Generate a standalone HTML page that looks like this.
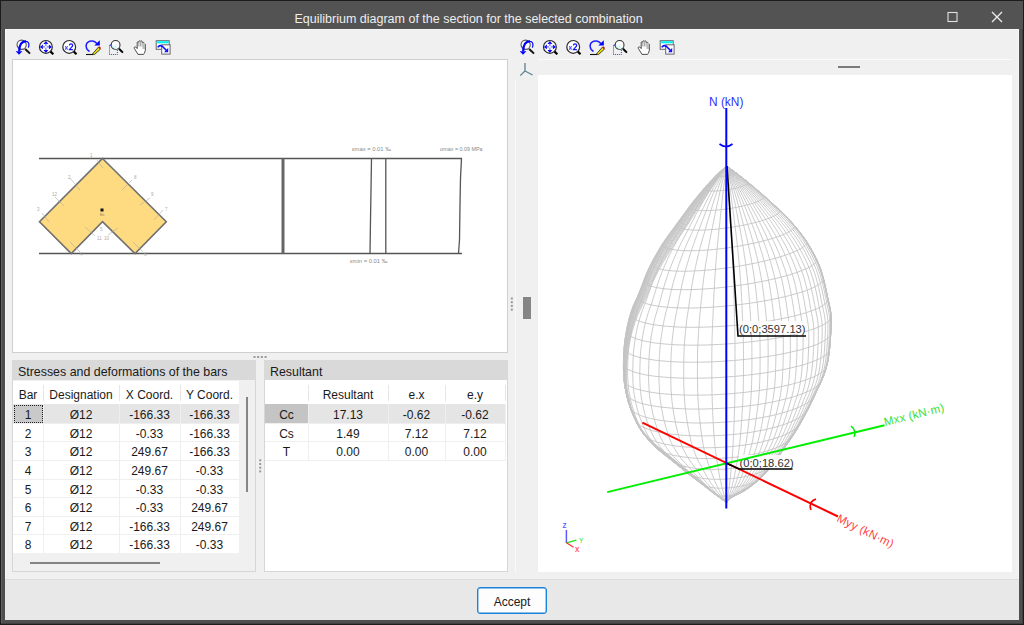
<!DOCTYPE html>
<html><head><meta charset="utf-8">
<style>
*{margin:0;padding:0;box-sizing:border-box}
html,body{width:1024px;height:625px;overflow:hidden;background:#1c1c1c;font-family:"Liberation Sans",sans-serif;font-size:12px;color:#1a1a1a}
.a{position:absolute}
.c{position:absolute;text-align:center;white-space:nowrap}
</style></head><body>
<div class="a" style="left:1px;top:1px;width:1022px;height:623px;background:#535353"></div>
<div class="a" style="left:1px;top:29px;width:1px;height:595px;background:#636363"></div>
<div class="a" style="left:1022px;top:29px;width:1px;height:595px;background:#3e3e3e"></div>
<div class="a" style="left:1px;top:623px;width:1022px;height:1px;background:#3e3e3e"></div>
<div class="a" style="left:2px;top:29px;width:3px;height:594px;background:#4f4f4f"></div>
<div class="a" style="left:1019px;top:29px;width:3px;height:594px;background:#505050"></div>
<div class="a" style="left:2px;top:620px;width:1020px;height:3px;background:#4f4f4f"></div>
<div class="a" style="left:5px;top:29px;width:1014px;height:591px;background:#f0f0f0;border:1px solid #f7f7f7"></div>
<div class="a" style="left:294.5px;top:10.5px;font-size:12.5px;color:#eeeeee;white-space:nowrap;line-height:16px">Equilibrium diagram of the section for the selected combination</div>
<svg class="a" style="left:0;top:0" width="1024" height="30">
<rect x="948" y="12.5" width="9" height="9" fill="none" stroke="#e0e0e0" stroke-width="1.1"/>
<path d="M992 12 L1002 22 M1002 12 L992 22" stroke="#eeeeee" stroke-width="1.3"/>
</svg>
<!-- bottom bar -->
<div class="a" style="left:5px;top:579px;width:1014px;height:41px;background:#e8e8e8;border-top:1px solid #dcdcdc"></div>
<div class="a" style="left:477px;top:587px;width:70px;height:27px;background:#fdfdfd;border:1px solid #1a82da;box-shadow:inset 0 0 0 0.4px #1a82da;border-radius:3px;text-align:center;line-height:28px;font-size:12px;color:#1a1a1a">Accept</div>
<!-- left drawing panel -->
<div class="a" style="left:12px;top:59px;width:496px;height:294px;background:#fff;border:1px solid #cfcfcf"></div>
<!-- splitter dots -->
<svg class="a" style="left:0;top:0" width="1024" height="625">
<g fill="#9a9a9a"><rect x="253.5" y="356" width="2" height="2"/><rect x="257.2" y="356" width="2" height="2"/><rect x="260.9" y="356" width="2" height="2"/><rect x="264.6" y="356" width="2" height="2"/>
<rect x="259.2" y="459.3" width="2" height="2"/><rect x="259.2" y="463" width="2" height="2"/><rect x="259.2" y="466.7" width="2" height="2"/><rect x="259.2" y="470.4" width="2" height="2"/>
<rect x="510.8" y="297.5" width="2" height="2"/><rect x="510.8" y="301.2" width="2" height="2"/><rect x="510.8" y="304.9" width="2" height="2"/><rect x="510.8" y="308.6" width="2" height="2"/></g>
</svg>
<!-- left table panel -->
<div class="a" style="left:12px;top:360px;width:244px;height:20px;background:#d9d9d9"></div>
<div class="a" style="left:18px;top:364px;line-height:16px;font-size:12.4px;white-space:nowrap">Stresses and deformations of the bars</div>
<div class="a" style="left:12px;top:380px;width:244px;height:192px;background:#f0f0f0;border:1px solid #d6d6d6;border-top:none"></div>
<div class="a" style="left:13px;top:381px;width:226px;height:172px;background:#fff"></div>
<div class="a" style="left:246px;top:397px;width:2px;height:95px;background:#858585"></div>
<div class="a" style="left:30px;top:561.5px;width:130px;height:2px;background:#858585"></div>
<div class="c" style="left:13px;top:384px;width:30px;height:23px;line-height:23px">Bar</div>
<div class="c" style="left:43px;top:384px;width:76px;height:23px;line-height:23px">Designation</div>
<div class="c" style="left:119px;top:384px;width:61px;height:23px;line-height:23px">X Coord.</div>
<div class="c" style="left:180px;top:384px;width:59px;height:23px;line-height:23px">Y Coord.</div>
<div style="position:absolute;left:43px;top:385px;width:1px;height:16px;background:#e6e6e6"></div>
<div style="position:absolute;left:119px;top:385px;width:1px;height:16px;background:#e6e6e6"></div>
<div style="position:absolute;left:180px;top:385px;width:1px;height:16px;background:#e6e6e6"></div>
<div style="position:absolute;left:13px;top:404.0px;width:226px;height:18.625px;background:#e5e5e5"></div>
<div style="position:absolute;left:14px;top:404.5px;width:29px;height:18.5px;background:#c9c9c9;border:1px dotted #222"></div>
<div class="c" style="left:13px;top:406.0px;width:30px;height:18.625px;line-height:18.625px">1</div>
<div class="c" style="left:43px;top:406.0px;width:76px;height:18.625px;line-height:18.625px">Ø12</div>
<div class="c" style="left:119px;top:406.0px;width:61px;height:18.625px;line-height:18.625px">-166.33</div>
<div class="c" style="left:180px;top:406.0px;width:59px;height:18.625px;line-height:18.625px">-166.33</div>
<div style="position:absolute;left:13px;top:422.625px;width:226px;height:1px;background:#efefef"></div>
<div class="c" style="left:13px;top:424.625px;width:30px;height:18.625px;line-height:18.625px">2</div>
<div class="c" style="left:43px;top:424.625px;width:76px;height:18.625px;line-height:18.625px">Ø12</div>
<div class="c" style="left:119px;top:424.625px;width:61px;height:18.625px;line-height:18.625px">-0.33</div>
<div class="c" style="left:180px;top:424.625px;width:59px;height:18.625px;line-height:18.625px">-166.33</div>
<div style="position:absolute;left:13px;top:441.25px;width:226px;height:1px;background:#efefef"></div>
<div class="c" style="left:13px;top:443.25px;width:30px;height:18.625px;line-height:18.625px">3</div>
<div class="c" style="left:43px;top:443.25px;width:76px;height:18.625px;line-height:18.625px">Ø12</div>
<div class="c" style="left:119px;top:443.25px;width:61px;height:18.625px;line-height:18.625px">249.67</div>
<div class="c" style="left:180px;top:443.25px;width:59px;height:18.625px;line-height:18.625px">-166.33</div>
<div style="position:absolute;left:13px;top:459.875px;width:226px;height:1px;background:#efefef"></div>
<div class="c" style="left:13px;top:461.875px;width:30px;height:18.625px;line-height:18.625px">4</div>
<div class="c" style="left:43px;top:461.875px;width:76px;height:18.625px;line-height:18.625px">Ø12</div>
<div class="c" style="left:119px;top:461.875px;width:61px;height:18.625px;line-height:18.625px">249.67</div>
<div class="c" style="left:180px;top:461.875px;width:59px;height:18.625px;line-height:18.625px">-0.33</div>
<div style="position:absolute;left:13px;top:478.5px;width:226px;height:1px;background:#efefef"></div>
<div class="c" style="left:13px;top:480.5px;width:30px;height:18.625px;line-height:18.625px">5</div>
<div class="c" style="left:43px;top:480.5px;width:76px;height:18.625px;line-height:18.625px">Ø12</div>
<div class="c" style="left:119px;top:480.5px;width:61px;height:18.625px;line-height:18.625px">-0.33</div>
<div class="c" style="left:180px;top:480.5px;width:59px;height:18.625px;line-height:18.625px">-0.33</div>
<div style="position:absolute;left:13px;top:497.125px;width:226px;height:1px;background:#efefef"></div>
<div class="c" style="left:13px;top:499.125px;width:30px;height:18.625px;line-height:18.625px">6</div>
<div class="c" style="left:43px;top:499.125px;width:76px;height:18.625px;line-height:18.625px">Ø12</div>
<div class="c" style="left:119px;top:499.125px;width:61px;height:18.625px;line-height:18.625px">-0.33</div>
<div class="c" style="left:180px;top:499.125px;width:59px;height:18.625px;line-height:18.625px">249.67</div>
<div style="position:absolute;left:13px;top:515.75px;width:226px;height:1px;background:#efefef"></div>
<div class="c" style="left:13px;top:517.75px;width:30px;height:18.625px;line-height:18.625px">7</div>
<div class="c" style="left:43px;top:517.75px;width:76px;height:18.625px;line-height:18.625px">Ø12</div>
<div class="c" style="left:119px;top:517.75px;width:61px;height:18.625px;line-height:18.625px">-166.33</div>
<div class="c" style="left:180px;top:517.75px;width:59px;height:18.625px;line-height:18.625px">249.67</div>
<div style="position:absolute;left:13px;top:534.375px;width:226px;height:1px;background:#efefef"></div>
<div class="c" style="left:13px;top:536.375px;width:30px;height:18.625px;line-height:18.625px">8</div>
<div class="c" style="left:43px;top:536.375px;width:76px;height:18.625px;line-height:18.625px">Ø12</div>
<div class="c" style="left:119px;top:536.375px;width:61px;height:18.625px;line-height:18.625px">-166.33</div>
<div class="c" style="left:180px;top:536.375px;width:59px;height:18.625px;line-height:18.625px">-0.33</div>
<div style="position:absolute;left:43px;top:404px;width:1px;height:149px;background:#efefef"></div>
<div style="position:absolute;left:119px;top:404px;width:1px;height:149px;background:#efefef"></div>
<div style="position:absolute;left:180px;top:404px;width:1px;height:149px;background:#efefef"></div>
<!-- resultant panel -->
<div class="a" style="left:264px;top:360px;width:244px;height:20px;background:#d9d9d9"></div>
<div class="a" style="left:270px;top:364px;line-height:16px;font-size:12.4px;white-space:nowrap">Resultant</div>
<div class="a" style="left:264px;top:380px;width:244px;height:192px;background:#fff;border:1px solid #d6d6d6;border-top:none"></div>
<div class="c" style="left:265px;top:384px;width:43px;height:23px;line-height:23px"></div>
<div class="c" style="left:308px;top:384px;width:80px;height:23px;line-height:23px">Resultant</div>
<div class="c" style="left:388px;top:384px;width:57px;height:23px;line-height:23px">e.x</div>
<div class="c" style="left:445px;top:384px;width:60px;height:23px;line-height:23px">e.y</div>
<div style="position:absolute;left:308px;top:385px;width:1px;height:16px;background:#e6e6e6"></div>
<div style="position:absolute;left:388px;top:385px;width:1px;height:16px;background:#e6e6e6"></div>
<div style="position:absolute;left:445px;top:385px;width:1px;height:16px;background:#e6e6e6"></div>
<div style="position:absolute;left:505px;top:385px;width:1px;height:16px;background:#e6e6e6"></div>
<div style="position:absolute;left:265px;top:404.0px;width:241px;height:18.625px;background:#e5e5e5"></div>
<div style="position:absolute;left:265px;top:404.0px;width:43.6px;height:18.625px;background:#c4c4c4"></div>
<div class="c" style="left:265px;top:406.0px;width:43px;height:18.625px;line-height:18.625px">Cc</div>
<div class="c" style="left:308px;top:406.0px;width:80px;height:18.625px;line-height:18.625px">17.13</div>
<div class="c" style="left:388px;top:406.0px;width:57px;height:18.625px;line-height:18.625px">-0.62</div>
<div class="c" style="left:445px;top:406.0px;width:60px;height:18.625px;line-height:18.625px">-0.62</div>
<div style="position:absolute;left:265px;top:422.625px;width:241px;height:1px;background:#efefef"></div>
<div class="c" style="left:265px;top:424.625px;width:43px;height:18.625px;line-height:18.625px">Cs</div>
<div class="c" style="left:308px;top:424.625px;width:80px;height:18.625px;line-height:18.625px">1.49</div>
<div class="c" style="left:388px;top:424.625px;width:57px;height:18.625px;line-height:18.625px">7.12</div>
<div class="c" style="left:445px;top:424.625px;width:60px;height:18.625px;line-height:18.625px">7.12</div>
<div style="position:absolute;left:265px;top:441.25px;width:241px;height:1px;background:#efefef"></div>
<div class="c" style="left:265px;top:443.25px;width:43px;height:18.625px;line-height:18.625px">T</div>
<div class="c" style="left:308px;top:443.25px;width:80px;height:18.625px;line-height:18.625px">0.00</div>
<div class="c" style="left:388px;top:443.25px;width:57px;height:18.625px;line-height:18.625px">0.00</div>
<div class="c" style="left:445px;top:443.25px;width:60px;height:18.625px;line-height:18.625px">0.00</div>
<div style="position:absolute;left:265px;top:459.875px;width:241px;height:1px;background:#efefef"></div>
<div style="position:absolute;left:308px;top:404px;width:1px;height:55.875px;background:#efefef"></div>
<div style="position:absolute;left:388px;top:404px;width:1px;height:55.875px;background:#efefef"></div>
<div style="position:absolute;left:445px;top:404px;width:1px;height:55.875px;background:#efefef"></div>
<div style="position:absolute;left:505px;top:404px;width:1px;height:55.875px;background:#efefef"></div>
<!-- right panel -->
<div class="a" style="left:515px;top:81px;width:1px;height:491px;background:#fafafa"></div>
<div class="a" style="left:538px;top:59px;width:474px;height:1px;background:#fafafa"></div>
<div class="a" style="left:538px;top:75px;width:474px;height:497px;background:#fff"></div>
<div class="a" style="left:838px;top:66px;width:22px;height:2px;background:#7a7a7a"></div>
<div class="a" style="left:523px;top:297px;width:8px;height:22px;background:#858585"></div>
<svg class="a" style="left:0;top:0" width="1024" height="625">
<path d="M525 63 L525 71 L520.2 75.6 M525 71 L532.6 75" fill="none" stroke="#5b8291" stroke-width="1.3"/>
<g transform="translate(14,38)">
<circle cx="7.65" cy="6.75" r="4.6" fill="#fff" stroke="#555" stroke-width="1.1"/>
<line x1="11.2" y1="11" x2="16" y2="15.6" stroke="#111" stroke-width="2"/>
<path d="M14.4 9.6 C15.6 6 15 3.4 11.5 3.4" fill="none" stroke="#0000ff" stroke-width="1.2"/>
<path d="M12 3.3 C7.5 3.2 5.2 7 5.2 13.3" fill="none" stroke="#0000ff" stroke-width="2.2"/>
<path d="M1.7 13.2 L8.4 13.2 L5 16.8 Z" fill="#0000ff"/>
</g>
<g transform="translate(37,38)">
<circle cx="8.9" cy="8.9" r="6.4" fill="#fff" stroke="#2a2a2a" stroke-width="1.2"/>
<line x1="13.6" y1="13.6" x2="16.3" y2="16.2" stroke="#000" stroke-width="2.2"/>
<path d="M8.9 2.9 L11.3 5.9 L6.5 5.9 Z M8.9 14.9 L11.3 11.9 L6.5 11.9 Z M2.9 8.9 L5.9 6.5 L5.9 11.3 Z M14.9 8.9 L11.9 6.5 L11.9 11.3 Z" fill="#0000ff"/>
<path d="M8.9 5.5 L8.9 12.3 M5.5 8.9 L12.3 8.9" stroke="#7070ff" stroke-width="1.2"/>
<rect x="8" y="8" width="1.8" height="1.8" fill="#fff"/>
</g>
<g transform="translate(60,38)">
<circle cx="9.2" cy="8.9" r="6.4" fill="#fff" stroke="#2a2a2a" stroke-width="1.2"/>
<line x1="13.8" y1="13.6" x2="16.5" y2="16.2" stroke="#000" stroke-width="2.2"/>
<path d="M5.2 8.2 L7.6 11.6 M7.6 8.2 L5.2 11.6" stroke="#5050ff" stroke-width="1.1"/>
<path d="M9.4 7.4 C9.5 5.6 12.6 5.4 12.6 7.4 C12.6 8.8 10.5 9.8 9.5 11.6 L12.9 11.6" fill="none" stroke="#1515ff" stroke-width="1.3"/>
</g>
<g transform="translate(84,38)">
<path d="M5.5 13.5 C1.5 11.5 1.2 6 4 4.2 C6.5 2.3 10.5 2.6 12.8 5.5" fill="none" stroke="#2020ff" stroke-width="1.5"/>
<path d="M15.8 2.2 L15.8 7.4 L10.3 7.4 Z" fill="#0000ff"/>
<line x1="2" y1="16.5" x2="9.5" y2="16.5" stroke="#111" stroke-width="1.1"/>
<path d="M8.6 15.8 L14.4 9.2 L16.4 11.2 L10.4 16.6 Z" fill="#e6e000" stroke="#333" stroke-width="0.9"/>
<path d="M14.4 9 L15.3 8.3 L16.8 9.8 L16.4 11.2 Z" fill="#e00000"/>
</g>
<g transform="translate(107,38)">
<path d="M2.5 16.5 L2.5 7.2 L10.4 7.2 L10.4 16.5 Z" fill="none" stroke="#3a3aff" stroke-width="1" stroke-dasharray="1,1"/>
<path d="M2.5 7.2 L10.4 7.2 L10.4 10" fill="none" stroke="#3a3aff" stroke-width="1.1"/>
<circle cx="8.6" cy="6.9" r="4.4" fill="#fff" stroke="#333" stroke-width="1.1"/>
<path d="M4.4 7.6 L10.2 7.6 L10.2 11 C7.5 11.5 5 10 4.4 7.6 Z" fill="#d8f8f8"/>
<line x1="12" y1="10.8" x2="15.9" y2="14.6" stroke="#000" stroke-width="2"/>
</g>
<g transform="translate(130,38)">
<path d="M8 16.4 L4.4 10.5 C3.8 9.3 4.8 8.2 5.8 9 L7.2 10.6 L7.2 4.5 C7.2 3.6 8.6 3.6 8.8 4.3 L8.8 3.4 C8.9 2.6 10.2 2.6 10.4 3.3 C10.6 2.6 11.9 2.6 12 3.4 L12.1 4.6 C12.5 4 13.9 4.2 14 5 L15.2 6 L15.4 11 C15.4 13.5 14.5 15 13.5 16.4 Z" fill="#fff" stroke="#3a3a3a" stroke-width="0.9"/>
<path d="M8.8 4.3 L8.8 8.5 M10.4 3.3 L10.4 8.5 M12.1 4.6 L12.1 8.5" stroke="#888" stroke-width="0.8"/>
<rect x="12.5" y="5" width="2.5" height="6" fill="#bbb"/>
</g>
<g transform="translate(154,38)">
<rect x="2.2" y="2.7" width="13" height="8.6" fill="#fcfcfc" stroke="#666" stroke-width="1"/>
<rect x="2.7" y="3.2" width="12" height="2.1" fill="#00f4f4"/>
<rect x="7.7" y="6.8" width="8.4" height="9.3" fill="#fdfdfd" stroke="#666" stroke-width="1"/>
<path d="M3.8 9.4 C5 7.2 7 7.2 8.5 8.5 L12.5 12.5" fill="none" stroke="#1010ff" stroke-width="1.7"/>
<path d="M10 14.2 L14.2 14.2 L14.2 10 Z" fill="#1010ff"/>
</g>
<g transform="translate(518,38)">
<circle cx="7.65" cy="6.75" r="4.6" fill="#fff" stroke="#555" stroke-width="1.1"/>
<line x1="11.2" y1="11" x2="16" y2="15.6" stroke="#111" stroke-width="2"/>
<path d="M14.4 9.6 C15.6 6 15 3.4 11.5 3.4" fill="none" stroke="#0000ff" stroke-width="1.2"/>
<path d="M12 3.3 C7.5 3.2 5.2 7 5.2 13.3" fill="none" stroke="#0000ff" stroke-width="2.2"/>
<path d="M1.7 13.2 L8.4 13.2 L5 16.8 Z" fill="#0000ff"/>
</g>
<g transform="translate(541,38)">
<circle cx="8.9" cy="8.9" r="6.4" fill="#fff" stroke="#2a2a2a" stroke-width="1.2"/>
<line x1="13.6" y1="13.6" x2="16.3" y2="16.2" stroke="#000" stroke-width="2.2"/>
<path d="M8.9 2.9 L11.3 5.9 L6.5 5.9 Z M8.9 14.9 L11.3 11.9 L6.5 11.9 Z M2.9 8.9 L5.9 6.5 L5.9 11.3 Z M14.9 8.9 L11.9 6.5 L11.9 11.3 Z" fill="#0000ff"/>
<path d="M8.9 5.5 L8.9 12.3 M5.5 8.9 L12.3 8.9" stroke="#7070ff" stroke-width="1.2"/>
<rect x="8" y="8" width="1.8" height="1.8" fill="#fff"/>
</g>
<g transform="translate(564,38)">
<circle cx="9.2" cy="8.9" r="6.4" fill="#fff" stroke="#2a2a2a" stroke-width="1.2"/>
<line x1="13.8" y1="13.6" x2="16.5" y2="16.2" stroke="#000" stroke-width="2.2"/>
<path d="M5.2 8.2 L7.6 11.6 M7.6 8.2 L5.2 11.6" stroke="#5050ff" stroke-width="1.1"/>
<path d="M9.4 7.4 C9.5 5.6 12.6 5.4 12.6 7.4 C12.6 8.8 10.5 9.8 9.5 11.6 L12.9 11.6" fill="none" stroke="#1515ff" stroke-width="1.3"/>
</g>
<g transform="translate(588,38)">
<path d="M5.5 13.5 C1.5 11.5 1.2 6 4 4.2 C6.5 2.3 10.5 2.6 12.8 5.5" fill="none" stroke="#2020ff" stroke-width="1.5"/>
<path d="M15.8 2.2 L15.8 7.4 L10.3 7.4 Z" fill="#0000ff"/>
<line x1="2" y1="16.5" x2="9.5" y2="16.5" stroke="#111" stroke-width="1.1"/>
<path d="M8.6 15.8 L14.4 9.2 L16.4 11.2 L10.4 16.6 Z" fill="#e6e000" stroke="#333" stroke-width="0.9"/>
<path d="M14.4 9 L15.3 8.3 L16.8 9.8 L16.4 11.2 Z" fill="#e00000"/>
</g>
<g transform="translate(611,38)">
<path d="M2.5 16.5 L2.5 7.2 L10.4 7.2 L10.4 16.5 Z" fill="none" stroke="#3a3aff" stroke-width="1" stroke-dasharray="1,1"/>
<path d="M2.5 7.2 L10.4 7.2 L10.4 10" fill="none" stroke="#3a3aff" stroke-width="1.1"/>
<circle cx="8.6" cy="6.9" r="4.4" fill="#fff" stroke="#333" stroke-width="1.1"/>
<path d="M4.4 7.6 L10.2 7.6 L10.2 11 C7.5 11.5 5 10 4.4 7.6 Z" fill="#d8f8f8"/>
<line x1="12" y1="10.8" x2="15.9" y2="14.6" stroke="#000" stroke-width="2"/>
</g>
<g transform="translate(634,38)">
<path d="M8 16.4 L4.4 10.5 C3.8 9.3 4.8 8.2 5.8 9 L7.2 10.6 L7.2 4.5 C7.2 3.6 8.6 3.6 8.8 4.3 L8.8 3.4 C8.9 2.6 10.2 2.6 10.4 3.3 C10.6 2.6 11.9 2.6 12 3.4 L12.1 4.6 C12.5 4 13.9 4.2 14 5 L15.2 6 L15.4 11 C15.4 13.5 14.5 15 13.5 16.4 Z" fill="#fff" stroke="#3a3a3a" stroke-width="0.9"/>
<path d="M8.8 4.3 L8.8 8.5 M10.4 3.3 L10.4 8.5 M12.1 4.6 L12.1 8.5" stroke="#888" stroke-width="0.8"/>
<rect x="12.5" y="5" width="2.5" height="6" fill="#bbb"/>
</g>
<g transform="translate(658,38)">
<rect x="2.2" y="2.7" width="13" height="8.6" fill="#fcfcfc" stroke="#666" stroke-width="1"/>
<rect x="2.7" y="3.2" width="12" height="2.1" fill="#00f4f4"/>
<rect x="7.7" y="6.8" width="8.4" height="9.3" fill="#fdfdfd" stroke="#666" stroke-width="1"/>
<path d="M3.8 9.4 C5 7.2 7 7.2 8.5 8.5 L12.5 12.5" fill="none" stroke="#1010ff" stroke-width="1.7"/>
<path d="M10 14.2 L14.2 14.2 L14.2 10 Z" fill="#1010ff"/>
</g>
<line x1="39" y1="158.5" x2="462" y2="158.5" stroke="#555" stroke-width="1.3"/>
<line x1="39" y1="253.5" x2="462" y2="253.5" stroke="#555" stroke-width="1.3"/>
<polygon points="102.5,158.5 166.25,221.75 135,253.5 102.5,221.75 71.25,253.5 39.5,221.75" fill="#fedb80" stroke="#707070" stroke-width="1.6" stroke-linejoin="miter"/>
<line x1="283" y1="158.5" x2="283" y2="253.5" stroke="#666" stroke-width="3"/>
<polyline points="371.5,158.5 371,190 370.5,220 370,253.5" fill="none" stroke="#555" stroke-width="1.3"/>
<line x1="385.8" y1="158.5" x2="385.8" y2="253.5" stroke="#555" stroke-width="1.3"/>
<polyline points="461.5,158.5 460.5,178 460,205 459.5,240 458.5,253.5" fill="none" stroke="#555" stroke-width="1.3"/>
<text x="352" y="150.8" font-family="Liberation Sans" font-size="5" fill="#8a8a8a" textLength="39" lengthAdjust="spacingAndGlyphs">εmax = 0.01 ‰</text>
<text x="440" y="150.8" font-family="Liberation Sans" font-size="5" fill="#8a8a8a" textLength="42.5" lengthAdjust="spacingAndGlyphs">σmax = 0.09 MPa</text>
<text x="350" y="262.5" font-family="Liberation Sans" font-size="5" fill="#8a8a8a" textLength="37.5" lengthAdjust="spacingAndGlyphs">εmin = 0.01 ‰</text>
<line x1="97" y1="160" x2="103" y2="168" stroke="#aaa" stroke-width="0.6"/>
<text x="90" y="157" font-family="Liberation Sans" font-size="4.5" fill="#aaa">1</text>
<line x1="70" y1="178" x2="80" y2="190" stroke="#aaa" stroke-width="0.6"/>
<text x="68" y="179" font-family="Liberation Sans" font-size="4.5" fill="#aaa">2</text>
<line x1="55" y1="197" x2="64" y2="206" stroke="#aaa" stroke-width="0.6"/>
<text x="52" y="196" font-family="Liberation Sans" font-size="4.5" fill="#aaa">12</text>
<line x1="42" y1="213" x2="49" y2="222" stroke="#aaa" stroke-width="0.6"/>
<text x="37" y="211" font-family="Liberation Sans" font-size="4.5" fill="#aaa">3</text>
<line x1="122" y1="190" x2="132" y2="180" stroke="#aaa" stroke-width="0.6"/>
<text x="134" y="179" font-family="Liberation Sans" font-size="4.5" fill="#aaa">8</text>
<line x1="140" y1="205" x2="150" y2="198" stroke="#aaa" stroke-width="0.6"/>
<text x="151" y="196" font-family="Liberation Sans" font-size="4.5" fill="#aaa">9</text>
<line x1="154" y1="220" x2="163" y2="210" stroke="#aaa" stroke-width="0.6"/>
<text x="165" y="211" font-family="Liberation Sans" font-size="4.5" fill="#aaa">7</text>
<line x1="85" y1="227" x2="95" y2="236" stroke="#aaa" stroke-width="0.6"/>
<text x="97" y="240" font-family="Liberation Sans" font-size="4.5" fill="#aaa">11</text>
<line x1="108" y1="235" x2="118" y2="228" stroke="#aaa" stroke-width="0.6"/>
<text x="104" y="240" font-family="Liberation Sans" font-size="4.5" fill="#aaa">10</text>
<line x1="70" y1="242" x2="80" y2="252" stroke="#aaa" stroke-width="0.6"/>
<text x="80" y="256" font-family="Liberation Sans" font-size="4.5" fill="#aaa">4</text>
<line x1="133" y1="242" x2="143" y2="252" stroke="#aaa" stroke-width="0.6"/>
<text x="144" y="256" font-family="Liberation Sans" font-size="4.5" fill="#aaa">6</text>
<text x="100" y="231" font-family="Liberation Sans" font-size="4.5" fill="#aaa">5</text>
<rect x="100.5" y="208.5" width="3" height="3" fill="#111"/>
<text x="100" y="216" font-family="Liberation Sans" font-size="4" fill="#777">Ec</text>
<path d="M726.5,166.0 L728.4,167.3 L730.3,168.7 L732.2,170.1 L734.1,171.5 L736.0,172.9 L737.9,174.3 L739.8,175.8 L741.7,177.3 L743.6,178.8 L745.5,180.2 L747.3,181.7 L749.2,183.3 L751.0,184.8 L752.9,186.3 L754.7,187.8 L756.5,189.4 L758.4,190.9 L760.2,192.5 L762.0,194.0 L763.8,195.6 L765.6,197.2 L767.3,198.7 L769.1,200.3 L770.8,201.9 L772.6,203.5 L774.3,205.1 L776.1,206.7 L777.8,208.2 L779.5,209.8 L781.2,211.4 L782.9,213.0 L784.5,214.6 L786.0,216.2 L787.6,217.7 L789.1,219.3 L790.5,220.9 L792.0,222.5 L793.3,224.1 L794.7,225.8 L796.1,227.4 L797.5,229.1 L798.8,230.7 L800.1,232.4 L801.4,234.0 L802.7,235.7 L803.9,237.4 L805.1,239.1 L806.2,240.8 L807.4,242.5 L808.4,244.2 L809.5,246.1 L810.8,248.2 L812.0,250.4 L813.2,252.6 L814.4,254.8 L815.6,257.1 L816.7,259.3 L817.7,261.6 L818.7,263.9 L819.6,266.2 L820.5,268.5 L821.2,270.8 L822.0,273.1 L822.6,275.4 L823.3,277.7 L823.9,280.0 L824.4,282.3 L825.0,284.6 L825.5,287.0 L826.0,289.3 L826.5,291.7 L827.0,294.1 L827.5,296.5 L828.1,298.9 L828.6,301.3 L829.2,303.8 L829.6,305.7 L830.0,307.7 L830.4,309.6 L830.7,311.5 L830.9,313.4 L831.1,315.4 L831.2,317.3 L831.2,319.3 L831.2,321.2 L831.1,323.2 L831.1,325.1 L831.0,327.1 L830.9,329.0 L830.8,331.0 L830.7,333.0 L830.6,334.9 L830.5,336.9 L830.4,338.9 L830.3,340.9 L830.1,342.9 L830.0,344.8 L829.8,346.8 L829.6,348.8 L829.3,350.8 L829.1,352.8 L828.8,354.8 L828.5,356.8 L828.2,358.8 L827.8,360.8 L827.3,362.8 L826.8,364.8 L826.2,366.8 L825.6,368.9 L825.0,370.9 L824.3,372.9 L823.5,375.0 L822.7,377.0 L821.7,379.1 L820.8,381.2 L819.8,383.2 L818.8,385.3 L817.8,387.3 L816.8,389.4 L815.8,391.5 L814.8,393.6 L813.8,395.7 L812.8,397.8 L811.8,399.9 L810.8,402.0 L809.7,404.2 L808.6,406.3 L807.5,408.4 L806.4,410.6 L805.2,412.7 L804.1,414.9 L802.9,417.1 L801.6,419.3 L800.4,421.5 L799.1,423.7 L797.7,426.0 L796.4,428.2 L794.9,430.5 L793.4,432.8 L791.9,435.0 L790.3,437.4 L788.7,439.7 L787.1,442.0 L785.6,444.4 L784.0,446.7 L782.5,449.1 L780.9,451.4 L779.3,453.7 L777.6,456.1 L776.0,458.4 L774.2,460.7 L772.5,463.1 L770.7,465.4 L768.8,467.7 L766.9,470.1 L764.9,472.4 L762.7,474.8 L760.4,477.1 L757.9,479.4 L755.2,481.8 L752.3,484.1 L749.2,486.4 L745.9,488.7 L742.0,491.0 L737.3,493.4 L733.3,495.7 L730.5,498.0 L728.2,500.4 L726.5,502.7 M726.5,166.0 L728.4,167.4 L730.3,168.8 L732.2,170.2 L734.1,171.6 L736.0,173.1 L737.9,174.5 L739.8,176.0 L741.7,177.5 L743.5,179.1 L745.4,180.6 L747.3,182.1 L749.1,183.7 L750.9,185.2 L752.8,186.8 L754.6,188.3 L756.4,189.9 L758.3,191.4 L760.1,193.0 L761.9,194.6 L763.7,196.2 L765.4,197.8 L767.2,199.4 L768.9,201.0 L770.7,202.6 L772.4,204.3 L774.2,205.9 L775.9,207.5 L777.6,209.1 L779.3,210.7 L781.0,212.3 L782.7,213.9 L784.3,215.5 L785.8,217.1 L787.4,218.7 L788.9,220.4 L790.3,222.0 L791.7,223.6 L793.1,225.2 L794.5,226.9 L795.9,228.6 L797.2,230.2 L798.5,231.9 L799.9,233.6 L801.1,235.3 L802.4,237.0 L803.6,238.7 L804.8,240.4 L806.0,242.1 L807.1,243.8 L808.1,245.6 L809.2,247.4 L810.5,249.6 L811.7,251.8 L812.9,254.0 L814.1,256.3 L815.3,258.5 L816.3,260.8 L817.4,263.1 L818.4,265.4 L819.3,267.7 L820.1,270.0 L820.9,272.3 L821.6,274.6 L822.3,276.9 L822.9,279.2 L823.5,281.6 L824.1,283.9 L824.6,286.2 L825.2,288.6 L825.7,290.9 L826.2,293.3 L826.7,295.7 L827.2,298.1 L827.7,300.6 L828.3,303.0 L828.8,305.5 L829.3,307.4 L829.7,309.3 L830.0,311.3 L830.3,313.2 L830.5,315.2 L830.7,317.1 L830.8,319.0 L830.8,321.0 L830.8,322.9 L830.8,324.9 L830.7,326.8 L830.7,328.8 L830.6,330.8 L830.5,332.7 L830.4,334.7 L830.3,336.7 L830.2,338.7 L830.1,340.6 L829.9,342.6 L829.8,344.6 L829.6,346.6 L829.4,348.6 L829.2,350.5 L829.0,352.5 L828.7,354.5 L828.4,356.5 L828.2,358.5 L827.8,360.6 L827.4,362.6 L827.0,364.6 L826.5,366.6 L825.9,368.7 L825.3,370.7 L824.7,372.8 L824.0,374.8 L823.2,376.9 L822.3,378.9 L821.4,381.0 L820.5,383.0 L819.5,385.1 L818.5,387.2 L817.5,389.2 L816.5,391.3 L815.5,393.4 L814.6,395.5 L813.6,397.6 L812.5,399.7 L811.5,401.8 L810.5,403.9 L809.4,406.0 L808.3,408.2 L807.2,410.3 L806.1,412.4 L805.0,414.6 L803.8,416.7 L802.6,418.9 L801.4,421.1 L800.1,423.3 L798.8,425.5 L797.5,427.7 L796.1,429.9 L794.7,432.2 L793.2,434.4 L791.7,436.7 L790.1,439.0 L788.5,441.3 L786.9,443.6 L785.4,445.9 L783.8,448.2 L782.3,450.5 L780.7,452.8 L779.1,455.1 L777.5,457.4 L775.8,459.6 L774.0,461.9 L772.3,464.2 L770.5,466.5 L768.7,468.8 L766.7,471.1 L764.7,473.4 L762.5,475.7 L760.2,477.9 L757.7,480.2 L755.1,482.4 L752.2,484.7 L749.1,486.9 L745.8,489.2 L741.9,491.4 L737.3,493.6 L733.3,495.9 L730.5,498.1 L728.2,500.4 L726.5,502.7 M726.5,166.0 L728.4,167.4 L730.2,168.8 L732.1,170.3 L734.0,171.7 L735.9,173.2 L737.8,174.8 L739.7,176.3 L741.5,177.8 L743.4,179.4 L745.2,180.9 L747.0,182.5 L748.9,184.1 L750.7,185.6 L752.5,187.2 L754.3,188.8 L756.1,190.4 L757.9,192.0 L759.7,193.6 L761.5,195.2 L763.3,196.9 L765.0,198.5 L766.7,200.1 L768.5,201.8 L770.2,203.4 L772.0,205.1 L773.7,206.7 L775.4,208.3 L777.1,210.0 L778.8,211.6 L780.4,213.3 L782.1,214.9 L783.7,216.5 L785.2,218.2 L786.7,219.8 L788.2,221.4 L789.6,223.1 L791.0,224.7 L792.4,226.4 L793.8,228.1 L795.1,229.8 L796.5,231.4 L797.8,233.1 L799.1,234.9 L800.3,236.6 L801.6,238.3 L802.8,240.0 L804.0,241.7 L805.1,243.5 L806.2,245.2 L807.3,247.0 L808.4,248.9 L809.6,251.1 L810.8,253.3 L812.0,255.5 L813.2,257.8 L814.3,260.0 L815.4,262.3 L816.4,264.6 L817.4,266.9 L818.3,269.2 L819.1,271.5 L819.9,273.9 L820.6,276.2 L821.3,278.5 L821.9,280.9 L822.5,283.2 L823.1,285.5 L823.6,287.9 L824.1,290.2 L824.6,292.6 L825.1,295.0 L825.6,297.4 L826.1,299.8 L826.7,302.3 L827.2,304.7 L827.8,307.2 L828.2,309.1 L828.6,311.1 L828.9,313.0 L829.2,315.0 L829.5,316.9 L829.6,318.9 L829.7,320.8 L829.7,322.7 L829.7,324.7 L829.7,326.7 L829.6,328.6 L829.6,330.6 L829.5,332.5 L829.4,334.5 L829.3,336.5 L829.2,338.4 L829.1,340.4 L829.0,342.4 L828.9,344.4 L828.7,346.4 L828.5,348.3 L828.4,350.3 L828.1,352.3 L827.9,354.3 L827.7,356.3 L827.4,358.3 L827.1,360.3 L826.8,362.4 L826.4,364.4 L825.9,366.4 L825.4,368.5 L824.9,370.5 L824.3,372.6 L823.7,374.6 L823.0,376.7 L822.2,378.8 L821.4,380.8 L820.5,382.9 L819.5,385.0 L818.6,387.0 L817.6,389.1 L816.6,391.2 L815.6,393.3 L814.7,395.3 L813.7,397.4 L812.7,399.5 L811.7,401.6 L810.7,403.7 L809.7,405.9 L808.6,408.0 L807.5,410.1 L806.4,412.2 L805.3,414.3 L804.2,416.5 L803.1,418.6 L801.9,420.8 L800.7,422.9 L799.4,425.1 L798.1,427.3 L796.8,429.5 L795.5,431.7 L794.0,433.9 L792.6,436.1 L791.0,438.4 L789.5,440.6 L787.9,442.9 L786.3,445.1 L784.8,447.4 L783.2,449.7 L781.7,451.9 L780.1,454.2 L778.6,456.4 L776.9,458.7 L775.3,460.9 L773.5,463.2 L771.8,465.4 L770.0,467.6 L768.2,469.9 L766.3,472.1 L764.3,474.3 L762.1,476.5 L759.8,478.7 L757.4,480.9 L754.7,483.1 L751.9,485.3 L748.9,487.5 L745.6,489.6 L741.7,491.8 L737.2,493.9 L733.2,496.1 L730.4,498.3 L728.1,500.5 L726.5,502.7 M726.5,166.0 L728.3,167.4 L730.2,168.9 L732.0,170.4 L733.9,171.9 L735.8,173.4 L737.6,175.0 L739.5,176.6 L741.3,178.1 L743.1,179.7 L744.9,181.3 L746.7,182.9 L748.5,184.5 L750.3,186.1 L752.1,187.7 L753.8,189.4 L755.6,191.0 L757.4,192.6 L759.2,194.3 L760.9,195.9 L762.6,197.6 L764.4,199.2 L766.0,200.9 L767.7,202.5 L769.4,204.2 L771.2,205.9 L772.8,207.6 L774.5,209.2 L776.2,210.9 L777.9,212.6 L779.5,214.2 L781.1,215.9 L782.6,217.6 L784.2,219.2 L785.7,220.9 L787.1,222.6 L788.5,224.2 L789.9,225.9 L791.2,227.6 L792.6,229.3 L793.9,231.0 L795.2,232.7 L796.5,234.4 L797.8,236.2 L799.0,237.9 L800.3,239.6 L801.4,241.4 L802.6,243.1 L803.7,244.9 L804.8,246.7 L805.8,248.4 L806.9,250.3 L808.1,252.6 L809.3,254.8 L810.5,257.0 L811.6,259.3 L812.7,261.6 L813.8,263.9 L814.8,266.2 L815.8,268.5 L816.7,270.8 L817.5,273.2 L818.2,275.5 L818.9,277.8 L819.6,280.2 L820.2,282.5 L820.8,284.8 L821.3,287.2 L821.9,289.5 L822.4,291.9 L822.9,294.3 L823.4,296.7 L823.9,299.1 L824.4,301.5 L824.9,304.0 L825.4,306.4 L826.0,308.9 L826.4,310.9 L826.8,312.8 L827.1,314.8 L827.4,316.7 L827.6,318.7 L827.8,320.6 L827.9,322.6 L827.9,324.5 L827.9,326.5 L827.9,328.4 L827.8,330.4 L827.8,332.4 L827.7,334.3 L827.6,336.3 L827.5,338.3 L827.4,340.2 L827.3,342.2 L827.2,344.2 L827.1,346.2 L827.0,348.1 L826.8,350.1 L826.6,352.1 L826.4,354.1 L826.2,356.1 L825.9,358.1 L825.7,360.1 L825.4,362.1 L825.1,364.2 L824.7,366.2 L824.2,368.3 L823.8,370.4 L823.2,372.4 L822.7,374.5 L822.0,376.5 L821.4,378.6 L820.6,380.7 L819.8,382.8 L818.9,384.8 L818.0,386.9 L817.0,389.0 L816.1,391.0 L815.1,393.1 L814.1,395.2 L813.2,397.3 L812.3,399.4 L811.3,401.5 L810.3,403.6 L809.3,405.7 L808.3,407.8 L807.3,409.9 L806.2,412.0 L805.1,414.1 L804.1,416.2 L802.9,418.4 L801.8,420.5 L800.7,422.6 L799.5,424.8 L798.2,427.0 L797.0,429.1 L795.7,431.3 L794.3,433.5 L792.9,435.7 L791.5,437.9 L790.0,440.1 L788.4,442.3 L786.9,444.5 L785.3,446.7 L783.8,448.9 L782.3,451.2 L780.8,453.4 L779.2,455.6 L777.6,457.8 L776.0,460.0 L774.4,462.2 L772.7,464.4 L771.0,466.6 L769.2,468.7 L767.4,470.9 L765.6,473.1 L763.6,475.2 L761.5,477.4 L759.2,479.5 L756.8,481.7 L754.2,483.8 L751.4,485.9 L748.4,488.0 L745.2,490.1 L741.4,492.2 L737.0,494.2 L733.1,496.3 L730.4,498.4 L728.1,500.5 L726.5,502.7 M726.5,166.0 L728.3,167.5 L730.1,169.0 L731.9,170.5 L733.7,172.1 L735.6,173.6 L737.4,175.2 L739.2,176.8 L740.9,178.4 L742.7,180.0 L744.5,181.7 L746.2,183.3 L748.0,184.9 L749.7,186.6 L751.5,188.2 L753.2,189.9 L754.9,191.6 L756.6,193.2 L758.4,194.9 L760.1,196.6 L761.7,198.3 L763.4,200.0 L765.1,201.6 L766.7,203.3 L768.4,205.0 L770.0,206.7 L771.7,208.4 L773.3,210.2 L775.0,211.9 L776.6,213.5 L778.2,215.2 L779.7,216.9 L781.2,218.6 L782.7,220.3 L784.2,222.0 L785.6,223.7 L787.0,225.4 L788.3,227.1 L789.6,228.8 L790.9,230.5 L792.2,232.3 L793.5,234.0 L794.8,235.8 L796.0,237.5 L797.2,239.3 L798.4,241.0 L799.6,242.8 L800.7,244.6 L801.8,246.4 L802.8,248.2 L803.9,249.9 L804.9,251.9 L806.1,254.1 L807.2,256.3 L808.4,258.6 L809.5,260.9 L810.6,263.2 L811.6,265.5 L812.6,267.8 L813.5,270.1 L814.4,272.5 L815.2,274.8 L815.9,277.1 L816.6,279.5 L817.2,281.8 L817.8,284.2 L818.4,286.5 L818.9,288.9 L819.5,291.2 L820.0,293.6 L820.5,296.0 L820.9,298.4 L821.4,300.8 L821.9,303.3 L822.4,305.7 L823.0,308.2 L823.5,310.7 L823.9,312.6 L824.3,314.6 L824.6,316.5 L824.9,318.5 L825.1,320.4 L825.3,322.4 L825.4,324.4 L825.4,326.3 L825.4,328.3 L825.4,330.2 L825.3,332.2 L825.3,334.2 L825.2,336.1 L825.1,338.1 L825.0,340.1 L825.0,342.0 L824.9,344.0 L824.8,346.0 L824.6,348.0 L824.5,350.0 L824.3,351.9 L824.2,353.9 L824.0,355.9 L823.8,357.9 L823.5,359.9 L823.3,361.9 L823.0,364.0 L822.7,366.0 L822.3,368.1 L821.9,370.2 L821.4,372.2 L820.9,374.3 L820.3,376.4 L819.8,378.5 L819.1,380.5 L818.4,382.6 L817.6,384.7 L816.7,386.8 L815.8,388.8 L814.9,390.9 L814.0,393.0 L813.0,395.1 L812.1,397.2 L811.2,399.3 L810.3,401.4 L809.3,403.5 L808.4,405.5 L807.4,407.6 L806.4,409.7 L805.4,411.8 L804.4,413.9 L803.3,416.1 L802.3,418.2 L801.2,420.3 L800.1,422.4 L798.9,424.5 L797.8,426.7 L796.6,428.8 L795.3,431.0 L794.1,433.1 L792.8,435.3 L791.4,437.4 L790.0,439.6 L788.5,441.7 L787.0,443.9 L785.4,446.1 L783.9,448.3 L782.4,450.5 L780.9,452.6 L779.4,454.8 L777.9,457.0 L776.4,459.1 L774.8,461.3 L773.2,463.5 L771.5,465.6 L769.8,467.7 L768.1,469.9 L766.4,472.0 L764.5,474.1 L762.6,476.2 L760.5,478.3 L758.3,480.3 L756.0,482.4 L753.4,484.5 L750.7,486.5 L747.8,488.5 L744.7,490.5 L741.0,492.5 L736.7,494.5 L732.9,496.5 L730.3,498.5 L728.1,500.6 L726.5,502.7 M726.5,166.0 L728.3,167.5 L730.0,169.1 L731.8,170.6 L733.5,172.2 L735.3,173.8 L737.0,175.5 L738.8,177.1 L740.5,178.7 L742.2,180.4 L743.9,182.1 L745.6,183.7 L747.3,185.4 L749.0,187.1 L750.7,188.8 L752.3,190.5 L754.0,192.2 L755.7,193.8 L757.3,195.6 L759.0,197.3 L760.6,199.0 L762.2,200.7 L763.8,202.4 L765.4,204.2 L767.0,205.9 L768.6,207.6 L770.2,209.4 L771.8,211.1 L773.4,212.8 L774.9,214.6 L776.5,216.3 L778.0,218.0 L779.4,219.7 L780.9,221.4 L782.3,223.2 L783.7,224.9 L785.0,226.6 L786.3,228.3 L787.6,230.1 L788.8,231.8 L790.1,233.6 L791.3,235.4 L792.5,237.1 L793.7,238.9 L794.9,240.7 L796.0,242.5 L797.2,244.3 L798.3,246.1 L799.3,247.9 L800.3,249.7 L801.3,251.5 L802.3,253.4 L803.5,255.7 L804.6,257.9 L805.7,260.2 L806.7,262.5 L807.8,264.8 L808.8,267.1 L809.7,269.5 L810.6,271.8 L811.5,274.1 L812.2,276.5 L812.9,278.8 L813.6,281.2 L814.2,283.5 L814.8,285.9 L815.4,288.2 L815.9,290.6 L816.4,293.0 L816.9,295.3 L817.4,297.7 L817.9,300.1 L818.3,302.6 L818.8,305.0 L819.3,307.5 L819.8,309.9 L820.3,312.4 L820.7,314.4 L821.1,316.3 L821.4,318.3 L821.7,320.3 L821.9,322.2 L822.1,324.2 L822.2,326.2 L822.2,328.1 L822.2,330.1 L822.2,332.0 L822.2,334.0 L822.1,336.0 L822.0,337.9 L822.0,339.9 L821.9,341.9 L821.8,343.8 L821.7,345.8 L821.6,347.8 L821.5,349.8 L821.4,351.8 L821.2,353.7 L821.1,355.7 L820.9,357.7 L820.7,359.7 L820.4,361.7 L820.2,363.7 L819.9,365.8 L819.7,367.9 L819.3,370.0 L818.9,372.0 L818.4,374.1 L817.9,376.2 L817.4,378.3 L816.8,380.4 L816.2,382.5 L815.5,384.5 L814.7,386.6 L813.9,388.7 L813.0,390.8 L812.2,392.9 L811.3,395.0 L810.4,397.0 L809.5,399.1 L808.6,401.2 L807.7,403.3 L806.8,405.4 L805.9,407.5 L804.9,409.6 L804.0,411.7 L803.0,413.8 L802.0,415.9 L801.0,418.0 L800.0,420.1 L798.9,422.2 L797.9,424.3 L796.8,426.4 L795.6,428.5 L794.5,430.6 L793.3,432.8 L792.0,434.9 L790.7,437.0 L789.4,439.2 L788.0,441.3 L786.6,443.4 L785.1,445.6 L783.6,447.7 L782.1,449.8 L780.7,452.0 L779.2,454.1 L777.7,456.3 L776.3,458.4 L774.8,460.5 L773.2,462.6 L771.7,464.7 L770.0,466.8 L768.4,468.9 L766.7,471.0 L765.0,473.0 L763.2,475.1 L761.3,477.1 L759.3,479.1 L757.2,481.1 L754.9,483.1 L752.5,485.1 L749.9,487.1 L747.1,489.0 L744.1,491.0 L740.5,492.9 L736.4,494.7 L732.7,496.6 L730.2,498.6 L728.1,500.6 L726.5,502.7 M726.5,166.0 L728.2,167.6 L729.9,169.2 L731.6,170.8 L733.3,172.4 L735.0,174.1 L736.6,175.7 L738.3,177.4 L740.0,179.1 L741.6,180.8 L743.2,182.5 L744.9,184.2 L746.5,185.9 L748.1,187.6 L749.7,189.3 L751.3,191.0 L752.9,192.8 L754.5,194.5 L756.1,196.2 L757.7,198.0 L759.3,199.7 L760.8,201.5 L762.3,203.2 L763.9,205.0 L765.4,206.8 L766.9,208.5 L768.5,210.3 L770.0,212.0 L771.5,213.8 L773.0,215.6 L774.4,217.3 L775.9,219.1 L777.3,220.8 L778.7,222.6 L780.0,224.3 L781.3,226.1 L782.6,227.8 L783.9,229.6 L785.1,231.4 L786.3,233.1 L787.5,234.9 L788.7,236.7 L789.8,238.5 L791.0,240.3 L792.1,242.1 L793.2,243.9 L794.3,245.8 L795.3,247.6 L796.3,249.4 L797.3,251.2 L798.3,253.0 L799.2,255.0 L800.3,257.3 L801.4,259.5 L802.4,261.8 L803.5,264.1 L804.4,266.4 L805.4,268.8 L806.3,271.1 L807.2,273.5 L808.0,275.8 L808.7,278.2 L809.4,280.5 L810.0,282.9 L810.6,285.2 L811.2,287.6 L811.7,289.9 L812.2,292.3 L812.7,294.7 L813.2,297.1 L813.7,299.5 L814.1,301.9 L814.6,304.3 L815.1,306.7 L815.5,309.2 L816.0,311.7 L816.5,314.1 L816.9,316.1 L817.3,318.1 L817.6,320.1 L817.8,322.0 L818.1,324.0 L818.2,326.0 L818.3,327.9 L818.4,329.9 L818.4,331.9 L818.3,333.8 L818.3,335.8 L818.3,337.8 L818.2,339.7 L818.2,341.7 L818.1,343.7 L818.0,345.6 L817.9,347.6 L817.8,349.6 L817.7,351.6 L817.6,353.6 L817.5,355.5 L817.3,357.5 L817.1,359.5 L816.9,361.5 L816.7,363.4 L816.5,365.5 L816.3,367.6 L816.0,369.7 L815.6,371.8 L815.3,373.9 L814.8,376.0 L814.3,378.1 L813.8,380.2 L813.3,382.3 L812.7,384.4 L812.0,386.5 L811.3,388.5 L810.5,390.6 L809.7,392.7 L808.9,394.8 L808.0,396.9 L807.2,399.0 L806.3,401.1 L805.5,403.1 L804.6,405.2 L803.7,407.3 L802.9,409.4 L802.0,411.5 L801.1,413.6 L800.1,415.7 L799.2,417.8 L798.2,419.9 L797.2,422.0 L796.2,424.1 L795.2,426.2 L794.1,428.2 L793.0,430.3 L791.9,432.5 L790.7,434.6 L789.5,436.7 L788.3,438.8 L787.0,440.9 L785.7,443.0 L784.3,445.1 L782.8,447.2 L781.4,449.3 L780.0,451.4 L778.5,453.5 L777.1,455.6 L775.7,457.7 L774.3,459.7 L772.8,461.8 L771.3,463.9 L769.8,465.9 L768.2,468.0 L766.7,470.0 L765.1,472.0 L763.4,474.0 L761.7,476.0 L759.8,478.0 L757.9,480.0 L755.9,481.9 L753.7,483.8 L751.3,485.8 L748.8,487.7 L746.2,489.6 L743.3,491.4 L739.9,493.2 L736.0,495.0 L732.5,496.8 L730.1,498.7 L728.0,500.7 L726.5,502.7 M726.5,166.0 L728.1,167.6 L729.7,169.3 L731.3,170.9 L733.0,172.6 L734.6,174.3 L736.2,176.0 L737.8,177.7 L739.3,179.4 L740.9,181.1 L742.5,182.9 L744.0,184.6 L745.6,186.3 L747.1,188.1 L748.6,189.8 L750.1,191.6 L751.7,193.4 L753.2,195.1 L754.7,196.9 L756.2,198.7 L757.7,200.5 L759.1,202.2 L760.6,204.0 L762.0,205.8 L763.5,207.6 L764.9,209.4 L766.4,211.2 L767.8,213.0 L769.3,214.8 L770.7,216.6 L772.1,218.4 L773.4,220.2 L774.8,221.9 L776.1,223.7 L777.4,225.5 L778.6,227.3 L779.8,229.1 L781.0,230.9 L782.2,232.7 L783.3,234.5 L784.5,236.3 L785.6,238.1 L786.7,239.9 L787.8,241.7 L788.9,243.6 L789.9,245.4 L790.9,247.2 L791.9,249.1 L792.9,250.9 L793.8,252.8 L794.7,254.6 L795.6,256.6 L796.7,258.9 L797.7,261.2 L798.7,263.5 L799.6,265.8 L800.6,268.1 L801.5,270.4 L802.3,272.8 L803.1,275.1 L803.9,277.5 L804.6,279.8 L805.2,282.2 L805.8,284.5 L806.4,286.9 L807.0,289.3 L807.5,291.6 L808.0,294.0 L808.5,296.4 L808.9,298.8 L809.4,301.2 L809.8,303.6 L810.2,306.0 L810.7,308.4 L811.2,310.9 L811.6,313.4 L812.1,315.8 L812.5,317.8 L812.8,319.8 L813.1,321.8 L813.4,323.8 L813.6,325.7 L813.7,327.7 L813.8,329.7 L813.9,331.6 L813.9,333.6 L813.9,335.6 L813.8,337.5 L813.8,339.5 L813.8,341.5 L813.7,343.5 L813.6,345.4 L813.6,347.4 L813.5,349.4 L813.4,351.4 L813.3,353.3 L813.2,355.3 L813.1,357.3 L812.9,359.3 L812.8,361.3 L812.6,363.2 L812.4,365.2 L812.2,367.3 L812.0,369.4 L811.7,371.5 L811.4,373.6 L811.0,375.7 L810.6,377.8 L810.2,379.9 L809.7,382.0 L809.2,384.1 L808.6,386.2 L808.0,388.3 L807.3,390.4 L806.6,392.5 L805.8,394.6 L805.0,396.7 L804.2,398.8 L803.4,400.9 L802.6,403.0 L801.8,405.0 L801.0,407.1 L800.2,409.2 L799.3,411.3 L798.5,413.4 L797.6,415.5 L796.7,417.6 L795.8,419.7 L794.9,421.7 L794.0,423.8 L793.0,425.9 L792.0,428.0 L791.0,430.1 L790.0,432.1 L788.9,434.2 L787.8,436.3 L786.6,438.4 L785.5,440.5 L784.2,442.5 L782.9,444.6 L781.6,446.7 L780.2,448.7 L778.8,450.8 L777.4,452.9 L776.1,454.9 L774.7,457.0 L773.3,459.0 L772.0,461.1 L770.6,463.1 L769.1,465.1 L767.7,467.1 L766.2,469.2 L764.7,471.2 L763.1,473.1 L761.5,475.0 L759.9,477.0 L758.1,478.9 L756.3,480.8 L754.3,482.7 L752.2,484.5 L750.0,486.4 L747.6,488.2 L745.1,490.1 L742.4,491.9 L739.2,493.6 L735.5,495.3 L732.2,497.0 L729.9,498.9 L727.9,500.8 L726.5,502.7 M726.5,166.0 L728.0,167.7 L729.6,169.3 L731.1,171.0 L732.6,172.7 L734.1,174.5 L735.7,176.2 L737.1,178.0 L738.6,179.7 L740.1,181.5 L741.6,183.3 L743.0,185.0 L744.5,186.8 L745.9,188.6 L747.4,190.4 L748.8,192.2 L750.2,194.0 L751.7,195.8 L753.1,197.6 L754.5,199.4 L755.9,201.2 L757.2,203.0 L758.6,204.8 L760.0,206.7 L761.3,208.5 L762.7,210.3 L764.1,212.1 L765.4,214.0 L766.8,215.8 L768.1,217.6 L769.4,219.4 L770.7,221.3 L771.9,223.1 L773.2,224.9 L774.4,226.7 L775.6,228.5 L776.7,230.3 L777.8,232.1 L778.9,234.0 L780.0,235.8 L781.1,237.6 L782.1,239.5 L783.2,241.3 L784.2,243.2 L785.2,245.0 L786.2,246.9 L787.1,248.7 L788.1,250.6 L789.0,252.5 L789.9,254.3 L790.7,256.2 L791.6,258.2 L792.5,260.5 L793.5,262.8 L794.4,265.1 L795.3,267.4 L796.2,269.7 L797.0,272.1 L797.8,274.4 L798.6,276.8 L799.3,279.1 L800.0,281.5 L800.6,283.9 L801.1,286.2 L801.7,288.6 L802.2,290.9 L802.7,293.3 L803.2,295.7 L803.6,298.1 L804.1,300.4 L804.5,302.8 L804.9,305.3 L805.3,307.7 L805.8,310.1 L806.2,312.6 L806.6,315.0 L807.1,317.5 L807.4,319.5 L807.7,321.5 L808.0,323.5 L808.3,325.5 L808.5,327.4 L808.6,329.4 L808.7,331.4 L808.8,333.4 L808.8,335.3 L808.8,337.3 L808.8,339.3 L808.8,341.2 L808.7,343.2 L808.7,345.2 L808.6,347.2 L808.5,349.1 L808.5,351.1 L808.4,353.1 L808.3,355.1 L808.2,357.1 L808.1,359.0 L808.0,361.0 L807.8,363.0 L807.7,365.0 L807.5,366.9 L807.3,369.0 L807.1,371.1 L806.8,373.3 L806.5,375.4 L806.2,377.5 L805.8,379.6 L805.4,381.7 L805.0,383.8 L804.5,386.0 L804.0,388.1 L803.4,390.2 L802.7,392.3 L802.1,394.4 L801.4,396.5 L800.6,398.5 L799.9,400.6 L799.1,402.7 L798.4,404.8 L797.6,406.9 L796.9,409.0 L796.1,411.1 L795.3,413.2 L794.5,415.2 L793.7,417.3 L792.9,419.4 L792.0,421.5 L791.2,423.6 L790.3,425.6 L789.4,427.7 L788.4,429.8 L787.5,431.8 L786.5,433.9 L785.5,436.0 L784.4,438.0 L783.3,440.1 L782.2,442.1 L781.0,444.2 L779.8,446.2 L778.5,448.3 L777.2,450.3 L775.9,452.3 L774.6,454.3 L773.3,456.4 L772.0,458.4 L770.6,460.4 L769.3,462.4 L768.0,464.4 L766.6,466.3 L765.2,468.3 L763.8,470.3 L762.4,472.2 L760.9,474.1 L759.4,476.0 L757.8,477.9 L756.2,479.7 L754.4,481.6 L752.6,483.4 L750.6,485.2 L748.5,487.0 L746.3,488.8 L743.9,490.5 L741.4,492.3 L738.4,493.9 L735.0,495.5 L731.9,497.2 L729.7,499.0 L727.9,500.8 L726.5,502.7 M726.5,166.0 L727.9,167.7 L729.4,169.4 L730.8,171.2 L732.2,172.9 L733.7,174.7 L735.1,176.5 L736.5,178.3 L737.8,180.0 L739.2,181.8 L740.6,183.7 L741.9,185.5 L743.3,187.3 L744.6,189.1 L746.0,190.9 L747.3,192.8 L748.6,194.6 L750.0,196.4 L751.3,198.3 L752.6,200.1 L753.9,201.9 L755.1,203.8 L756.4,205.6 L757.7,207.5 L758.9,209.4 L760.2,211.2 L761.5,213.1 L762.7,214.9 L764.0,216.8 L765.2,218.6 L766.4,220.5 L767.6,222.3 L768.8,224.2 L769.9,226.0 L771.1,227.9 L772.2,229.7 L773.2,231.5 L774.3,233.4 L775.3,235.2 L776.3,237.1 L777.3,239.0 L778.3,240.8 L779.2,242.7 L780.2,244.6 L781.1,246.5 L782.0,248.3 L782.9,250.2 L783.8,252.1 L784.6,254.0 L785.5,255.9 L786.2,257.8 L787.0,259.8 L787.9,262.1 L788.8,264.4 L789.7,266.7 L790.5,269.0 L791.3,271.4 L792.1,273.7 L792.8,276.1 L793.5,278.4 L794.2,280.8 L794.8,283.1 L795.4,285.5 L795.9,287.9 L796.4,290.2 L796.9,292.6 L797.4,295.0 L797.8,297.3 L798.3,299.7 L798.7,302.1 L799.1,304.5 L799.5,306.9 L799.9,309.3 L800.3,311.8 L800.7,314.2 L801.1,316.7 L801.5,319.1 L801.8,321.1 L802.1,323.1 L802.4,325.1 L802.6,327.1 L802.8,329.1 L803.0,331.1 L803.1,333.1 L803.1,335.0 L803.1,337.0 L803.2,339.0 L803.1,341.0 L803.1,342.9 L803.1,344.9 L803.1,346.9 L803.0,348.9 L803.0,350.8 L802.9,352.8 L802.8,354.8 L802.8,356.8 L802.7,358.7 L802.6,360.7 L802.5,362.7 L802.3,364.7 L802.2,366.7 L802.0,368.6 L801.8,370.7 L801.6,372.8 L801.4,375.0 L801.1,377.1 L800.8,379.2 L800.5,381.4 L800.1,383.5 L799.7,385.6 L799.3,387.7 L798.8,389.8 L798.3,392.0 L797.7,394.1 L797.0,396.2 L796.4,398.3 L795.7,400.3 L795.0,402.4 L794.3,404.5 L793.6,406.6 L793.0,408.7 L792.3,410.8 L791.5,412.9 L790.8,414.9 L790.1,417.0 L789.3,419.1 L788.6,421.2 L787.8,423.2 L787.0,425.3 L786.1,427.4 L785.3,429.4 L784.4,431.5 L783.5,433.5 L782.6,435.6 L781.6,437.6 L780.6,439.7 L779.6,441.7 L778.6,443.7 L777.5,445.8 L776.3,447.8 L775.1,449.8 L773.9,451.8 L772.6,453.7 L771.4,455.7 L770.1,457.7 L768.9,459.7 L767.7,461.7 L766.4,463.6 L765.2,465.6 L763.9,467.5 L762.6,469.4 L761.2,471.4 L759.9,473.3 L758.5,475.1 L757.0,476.9 L755.6,478.7 L754.0,480.5 L752.4,482.3 L750.7,484.1 L748.8,485.9 L746.9,487.6 L744.8,489.3 L742.6,491.0 L740.3,492.7 L737.5,494.3 L734.4,495.8 L731.6,497.4 L729.5,499.1 L727.8,500.9 L726.5,502.7 M726.5,166.0 L727.8,167.8 L729.2,169.5 L730.5,171.3 L731.8,173.1 L733.1,174.9 L734.4,176.7 L735.7,178.5 L737.0,180.4 L738.2,182.2 L739.5,184.0 L740.7,185.9 L742.0,187.7 L743.2,189.6 L744.4,191.5 L745.7,193.3 L746.9,195.2 L748.1,197.1 L749.3,198.9 L750.5,200.8 L751.7,202.7 L752.9,204.6 L754.0,206.4 L755.2,208.3 L756.3,210.2 L757.5,212.1 L758.6,214.0 L759.8,215.9 L760.9,217.8 L762.1,219.6 L763.2,221.5 L764.3,223.4 L765.4,225.3 L766.4,227.1 L767.4,229.0 L768.5,230.9 L769.4,232.8 L770.4,234.6 L771.3,236.5 L772.3,238.4 L773.2,240.3 L774.1,242.2 L775.0,244.1 L775.8,246.0 L776.7,247.9 L777.5,249.8 L778.4,251.7 L779.1,253.6 L779.9,255.5 L780.7,257.4 L781.4,259.3 L782.1,261.3 L782.9,263.6 L783.7,266.0 L784.5,268.3 L785.3,270.6 L786.0,273.0 L786.7,275.3 L787.4,277.7 L788.0,280.0 L788.7,282.4 L789.2,284.7 L789.7,287.1 L790.2,289.5 L790.7,291.8 L791.2,294.2 L791.6,296.6 L792.0,298.9 L792.4,301.3 L792.8,303.7 L793.2,306.1 L793.6,308.5 L793.9,310.9 L794.3,313.3 L794.7,315.8 L795.1,318.2 L795.4,320.7 L795.7,322.7 L796.0,324.7 L796.3,326.7 L796.5,328.7 L796.7,330.7 L796.8,332.7 L796.9,334.7 L797.0,336.6 L797.0,338.6 L797.0,340.6 L797.0,342.6 L797.0,344.6 L797.0,346.5 L796.9,348.5 L796.9,350.5 L796.9,352.5 L796.8,354.4 L796.8,356.4 L796.7,358.4 L796.6,360.4 L796.5,362.4 L796.4,364.3 L796.3,366.3 L796.2,368.3 L796.0,370.2 L795.9,372.3 L795.7,374.5 L795.5,376.6 L795.2,378.8 L795.0,380.9 L794.7,383.1 L794.3,385.2 L794.0,387.3 L793.6,389.4 L793.1,391.6 L792.6,393.7 L792.1,395.8 L791.5,397.9 L790.9,400.0 L790.3,402.1 L789.7,404.2 L789.1,406.2 L788.5,408.3 L787.8,410.4 L787.2,412.5 L786.5,414.6 L785.9,416.7 L785.2,418.7 L784.5,420.8 L783.8,422.9 L783.1,424.9 L782.3,427.0 L781.6,429.0 L780.8,431.1 L780.0,433.1 L779.2,435.2 L778.3,437.2 L777.4,439.2 L776.5,441.3 L775.5,443.3 L774.6,445.3 L773.5,447.3 L772.5,449.2 L771.3,451.2 L770.2,453.2 L769.0,455.1 L767.9,457.1 L766.7,459.0 L765.5,461.0 L764.4,462.9 L763.2,464.8 L762.1,466.7 L760.9,468.6 L759.6,470.5 L758.4,472.4 L757.1,474.2 L755.8,476.0 L754.5,477.8 L753.1,479.6 L751.7,481.3 L750.2,483.1 L748.6,484.8 L746.9,486.5 L745.1,488.2 L743.2,489.8 L741.2,491.4 L739.1,493.0 L736.6,494.6 L733.7,496.0 L731.2,497.5 L729.3,499.2 L727.7,500.9 L726.5,502.7 M726.5,166.0 L727.7,167.8 L728.9,169.6 L730.1,171.4 L731.3,173.3 L732.5,175.1 L733.7,177.0 L734.9,178.8 L736.0,180.7 L737.2,182.6 L738.3,184.4 L739.4,186.3 L740.6,188.2 L741.7,190.1 L742.8,192.0 L743.9,193.9 L745.0,195.8 L746.1,197.7 L747.2,199.6 L748.3,201.5 L749.3,203.4 L750.4,205.3 L751.4,207.2 L752.5,209.1 L753.5,211.1 L754.6,213.0 L755.6,214.9 L756.6,216.8 L757.7,218.7 L758.7,220.6 L759.7,222.5 L760.7,224.5 L761.7,226.4 L762.6,228.3 L763.6,230.2 L764.5,232.1 L765.4,234.0 L766.2,235.9 L767.1,237.8 L767.9,239.7 L768.7,241.6 L769.6,243.5 L770.4,245.4 L771.2,247.3 L771.9,249.3 L772.7,251.2 L773.4,253.1 L774.1,255.1 L774.8,257.0 L775.5,258.9 L776.2,260.8 L776.8,262.9 L777.6,265.2 L778.3,267.5 L779.0,269.8 L779.7,272.2 L780.3,274.5 L781.0,276.9 L781.6,279.2 L782.2,281.6 L782.7,283.9 L783.2,286.3 L783.7,288.7 L784.1,291.0 L784.6,293.4 L785.0,295.8 L785.4,298.1 L785.8,300.5 L786.2,302.9 L786.5,305.2 L786.9,307.6 L787.2,310.0 L787.5,312.4 L787.9,314.9 L788.2,317.3 L788.6,319.7 L788.9,322.2 L789.2,324.2 L789.4,326.2 L789.7,328.2 L789.9,330.2 L790.0,332.2 L790.2,334.2 L790.3,336.2 L790.3,338.2 L790.3,340.2 L790.4,342.1 L790.4,344.1 L790.4,346.1 L790.4,348.1 L790.3,350.1 L790.3,352.0 L790.3,354.0 L790.2,356.0 L790.2,358.0 L790.1,360.0 L790.1,361.9 L790.0,363.9 L789.9,365.9 L789.8,367.9 L789.7,369.8 L789.6,371.8 L789.4,373.9 L789.3,376.1 L789.1,378.2 L788.9,380.4 L788.6,382.5 L788.4,384.7 L788.1,386.8 L787.7,388.9 L787.4,391.1 L787.0,393.2 L786.6,395.3 L786.1,397.4 L785.6,399.5 L785.1,401.6 L784.5,403.7 L784.0,405.8 L783.4,407.9 L782.8,410.0 L782.3,412.1 L781.7,414.1 L781.1,416.2 L780.5,418.3 L779.9,420.4 L779.3,422.4 L778.6,424.5 L778.0,426.5 L777.3,428.6 L776.6,430.6 L775.9,432.7 L775.2,434.7 L774.5,436.7 L773.7,438.7 L772.8,440.7 L772.0,442.7 L771.1,444.7 L770.2,446.7 L769.3,448.7 L768.3,450.6 L767.3,452.6 L766.2,454.5 L765.1,456.4 L764.1,458.3 L763.0,460.3 L761.9,462.2 L760.9,464.0 L759.8,465.9 L758.7,467.8 L757.6,469.7 L756.5,471.5 L755.3,473.3 L754.2,475.2 L753.0,476.9 L751.8,478.6 L750.5,480.4 L749.2,482.1 L747.8,483.7 L746.4,485.4 L744.9,487.1 L743.3,488.7 L741.6,490.3 L739.8,491.8 L737.8,493.4 L735.6,494.9 L733.0,496.2 L730.7,497.7 L729.1,499.3 L727.6,501.0 L726.5,502.7 M726.5,166.0 L727.6,167.8 L728.7,169.7 L729.8,171.5 L730.8,173.4 L731.9,175.3 L732.9,177.2 L734.0,179.1 L735.0,181.0 L736.0,182.9 L737.0,184.8 L738.0,186.7 L739.0,188.7 L740.0,190.6 L741.0,192.5 L742.0,194.4 L743.0,196.4 L743.9,198.3 L744.9,200.2 L745.9,202.2 L746.8,204.1 L747.8,206.0 L748.7,208.0 L749.6,209.9 L750.5,211.9 L751.5,213.8 L752.4,215.8 L753.3,217.7 L754.2,219.7 L755.1,221.6 L756.0,223.5 L756.9,225.5 L757.7,227.4 L758.6,229.3 L759.4,231.3 L760.2,233.2 L761.0,235.1 L761.8,237.0 L762.6,239.0 L763.3,240.9 L764.0,242.8 L764.8,244.8 L765.5,246.7 L766.2,248.7 L766.9,250.6 L767.5,252.6 L768.2,254.5 L768.8,256.5 L769.4,258.4 L770.0,260.4 L770.6,262.3 L771.2,264.4 L771.9,266.7 L772.5,269.0 L773.1,271.3 L773.7,273.7 L774.3,276.0 L774.9,278.4 L775.4,280.7 L775.9,283.1 L776.4,285.4 L776.8,287.8 L777.3,290.2 L777.7,292.5 L778.1,294.9 L778.4,297.2 L778.8,299.6 L779.1,302.0 L779.5,304.3 L779.8,306.7 L780.1,309.1 L780.5,311.5 L780.8,313.9 L781.0,316.3 L781.4,318.7 L781.7,321.2 L782.0,323.6 L782.2,325.6 L782.5,327.7 L782.7,329.7 L782.8,331.7 L783.0,333.7 L783.1,335.7 L783.2,337.7 L783.3,339.6 L783.3,341.6 L783.3,343.6 L783.3,345.6 L783.3,347.6 L783.3,349.6 L783.3,351.5 L783.3,353.5 L783.3,355.5 L783.2,357.5 L783.2,359.5 L783.1,361.4 L783.1,363.4 L783.0,365.4 L783.0,367.4 L782.9,369.3 L782.8,371.3 L782.7,373.3 L782.5,375.4 L782.4,377.5 L782.3,379.7 L782.1,381.9 L781.9,384.0 L781.6,386.2 L781.4,388.3 L781.1,390.5 L780.8,392.6 L780.4,394.7 L780.1,396.9 L779.6,399.0 L779.2,401.1 L778.7,403.2 L778.3,405.3 L777.8,407.4 L777.3,409.4 L776.8,411.5 L776.3,413.6 L775.8,415.7 L775.3,417.8 L774.7,419.8 L774.2,421.9 L773.6,424.0 L773.1,426.0 L772.5,428.1 L771.9,430.1 L771.3,432.1 L770.7,434.2 L770.0,436.2 L769.4,438.2 L768.7,440.2 L767.9,442.2 L767.2,444.2 L766.4,446.1 L765.6,448.1 L764.7,450.0 L763.8,451.9 L762.9,453.9 L761.9,455.8 L761.0,457.6 L760.0,459.5 L759.0,461.4 L758.1,463.3 L757.1,465.1 L756.1,467.0 L755.1,468.8 L754.2,470.6 L753.1,472.5 L752.1,474.2 L751.0,476.0 L750.0,477.7 L748.9,479.4 L747.8,481.1 L746.6,482.7 L745.4,484.4 L744.1,486.0 L742.7,487.6 L741.3,489.2 L739.8,490.7 L738.2,492.2 L736.5,493.7 L734.5,495.1 L732.3,496.4 L730.3,497.8 L728.8,499.4 L727.5,501.0 L726.5,502.7 M726.5,166.0 L727.5,167.9 L728.4,169.8 L729.4,171.7 L730.3,173.6 L731.2,175.5 L732.1,177.4 L733.0,179.4 L733.9,181.3 L734.8,183.2 L735.7,185.2 L736.6,187.1 L737.4,189.1 L738.3,191.0 L739.1,193.0 L740.0,195.0 L740.8,196.9 L741.7,198.9 L742.5,200.8 L743.3,202.8 L744.2,204.8 L745.0,206.7 L745.8,208.7 L746.6,210.7 L747.4,212.7 L748.2,214.6 L749.0,216.6 L749.8,218.6 L750.6,220.6 L751.3,222.5 L752.1,224.5 L752.9,226.5 L753.6,228.4 L754.4,230.4 L755.1,232.3 L755.8,234.3 L756.5,236.2 L757.1,238.2 L757.8,240.1 L758.5,242.1 L759.1,244.1 L759.7,246.0 L760.3,248.0 L760.9,250.0 L761.5,251.9 L762.1,253.9 L762.7,255.9 L763.2,257.8 L763.8,259.8 L764.3,261.8 L764.8,263.8 L765.3,265.8 L765.9,268.1 L766.4,270.5 L767.0,272.8 L767.5,275.1 L768.0,277.5 L768.5,279.8 L768.9,282.2 L769.4,284.5 L769.8,286.9 L770.2,289.2 L770.5,291.6 L770.9,293.9 L771.2,296.3 L771.5,298.7 L771.9,301.0 L772.2,303.4 L772.5,305.7 L772.8,308.1 L773.1,310.5 L773.3,312.9 L773.6,315.3 L773.9,317.7 L774.1,320.1 L774.4,322.5 L774.7,324.9 L774.9,327.0 L775.1,329.0 L775.3,331.0 L775.4,333.0 L775.6,335.0 L775.7,337.0 L775.8,339.0 L775.8,341.0 L775.9,343.0 L775.9,345.0 L775.9,347.0 L775.9,349.0 L775.9,350.9 L775.9,352.9 L775.9,354.9 L775.9,356.9 L775.8,358.9 L775.8,360.8 L775.8,362.8 L775.7,364.8 L775.7,366.8 L775.6,368.7 L775.5,370.7 L775.5,372.7 L775.4,374.7 L775.3,376.8 L775.2,378.9 L775.0,381.1 L774.9,383.3 L774.7,385.4 L774.5,387.6 L774.3,389.8 L774.0,391.9 L773.8,394.0 L773.5,396.2 L773.2,398.3 L772.8,400.4 L772.4,402.5 L772.0,404.6 L771.6,406.7 L771.2,408.8 L770.8,410.9 L770.4,413.0 L770.0,415.0 L769.5,417.1 L769.1,419.2 L768.6,421.3 L768.1,423.3 L767.7,425.4 L767.2,427.4 L766.7,429.5 L766.2,431.5 L765.6,433.5 L765.1,435.5 L764.5,437.5 L763.9,439.5 L763.3,441.5 L762.7,443.5 L762.0,445.5 L761.3,447.4 L760.6,449.3 L759.9,451.3 L759.1,453.2 L758.3,455.0 L757.4,456.9 L756.6,458.8 L755.7,460.6 L754.8,462.5 L754.0,464.3 L753.1,466.1 L752.3,467.9 L751.4,469.8 L750.5,471.5 L749.6,473.3 L748.7,475.1 L747.8,476.8 L746.8,478.5 L745.9,480.1 L744.9,481.7 L743.9,483.4 L742.8,485.0 L741.7,486.5 L740.5,488.1 L739.2,489.6 L737.9,491.1 L736.6,492.6 L735.1,494.0 L733.4,495.4 L731.5,496.6 L729.8,498.0 L728.5,499.5 L727.4,501.0 L726.5,502.7 M726.5,166.0 L727.3,167.9 L728.1,169.8 L728.9,171.8 L729.7,173.7 L730.5,175.7 L731.3,177.6 L732.0,179.6 L732.8,181.6 L733.5,183.6 L734.3,185.5 L735.0,187.5 L735.7,189.5 L736.5,191.5 L737.2,193.5 L737.9,195.5 L738.6,197.4 L739.3,199.4 L740.0,201.4 L740.7,203.4 L741.4,205.4 L742.1,207.4 L742.8,209.4 L743.4,211.4 L744.1,213.4 L744.8,215.4 L745.4,217.4 L746.1,219.4 L746.8,221.4 L747.4,223.4 L748.1,225.4 L748.7,227.4 L749.3,229.4 L750.0,231.4 L750.6,233.4 L751.2,235.3 L751.7,237.3 L752.3,239.3 L752.9,241.3 L753.4,243.2 L753.9,245.2 L754.5,247.2 L755.0,249.2 L755.5,251.2 L756.0,253.2 L756.5,255.2 L757.0,257.2 L757.4,259.2 L757.9,261.1 L758.3,263.1 L758.7,265.1 L759.2,267.2 L759.6,269.5 L760.1,271.8 L760.5,274.2 L761.0,276.5 L761.4,278.9 L761.8,281.2 L762.2,283.5 L762.5,285.9 L762.9,288.3 L763.2,290.6 L763.5,292.9 L763.8,295.3 L764.1,297.6 L764.4,300.0 L764.7,302.3 L764.9,304.7 L765.2,307.1 L765.5,309.4 L765.7,311.8 L765.9,314.2 L766.2,316.5 L766.4,318.9 L766.6,321.3 L766.9,323.8 L767.1,326.2 L767.3,328.2 L767.4,330.2 L767.6,332.3 L767.7,334.3 L767.9,336.3 L767.9,338.3 L768.0,340.3 L768.1,342.3 L768.1,344.3 L768.1,346.3 L768.1,348.2 L768.2,350.2 L768.2,352.2 L768.2,354.2 L768.1,356.2 L768.1,358.2 L768.1,360.1 L768.1,362.1 L768.1,364.1 L768.0,366.1 L768.0,368.1 L768.0,370.0 L767.9,372.0 L767.8,374.0 L767.8,375.9 L767.7,378.0 L767.6,380.2 L767.5,382.4 L767.4,384.6 L767.2,386.8 L767.0,388.9 L766.9,391.1 L766.7,393.2 L766.5,395.4 L766.2,397.5 L766.0,399.6 L765.7,401.8 L765.3,403.9 L765.0,406.0 L764.7,408.0 L764.3,410.1 L764.0,412.2 L763.6,414.3 L763.3,416.4 L762.9,418.4 L762.6,420.5 L762.2,422.6 L761.8,424.6 L761.4,426.7 L761.0,428.7 L760.6,430.7 L760.1,432.8 L759.7,434.8 L759.2,436.8 L758.7,438.8 L758.2,440.8 L757.7,442.8 L757.2,444.7 L756.6,446.7 L756.0,448.6 L755.4,450.5 L754.7,452.4 L754.1,454.3 L753.4,456.1 L752.7,458.0 L751.9,459.8 L751.2,461.6 L750.4,463.4 L749.7,465.2 L749.0,467.0 L748.2,468.8 L747.5,470.6 L746.7,472.4 L746.0,474.1 L745.2,475.8 L744.4,477.6 L743.6,479.2 L742.8,480.8 L741.9,482.4 L741.0,483.9 L740.1,485.5 L739.2,487.0 L738.2,488.5 L737.1,490.0 L736.1,491.5 L734.9,492.9 L733.7,494.3 L732.3,495.6 L730.7,496.8 L729.3,498.1 L728.2,499.5 L727.3,501.1 L726.5,502.7 M726.5,166.0 L727.2,168.0 L727.8,169.9 L728.5,171.9 L729.1,173.9 L729.8,175.9 L730.4,177.9 L731.0,179.9 L731.6,181.9 L732.2,183.9 L732.8,185.9 L733.4,187.9 L734.0,189.9 L734.6,191.9 L735.1,193.9 L735.7,195.9 L736.3,198.0 L736.9,200.0 L737.4,202.0 L738.0,204.0 L738.5,206.0 L739.1,208.1 L739.6,210.1 L740.2,212.1 L740.7,214.1 L741.2,216.2 L741.8,218.2 L742.3,220.2 L742.8,222.2 L743.4,224.3 L743.9,226.3 L744.4,228.3 L744.9,230.3 L745.4,232.3 L745.9,234.3 L746.4,236.3 L746.9,238.3 L747.3,240.3 L747.8,242.3 L748.2,244.3 L748.6,246.3 L749.1,248.4 L749.5,250.4 L749.9,252.4 L750.3,254.4 L750.7,256.4 L751.1,258.4 L751.4,260.4 L751.8,262.4 L752.2,264.4 L752.5,266.4 L752.8,268.5 L753.2,270.8 L753.6,273.1 L753.9,275.5 L754.3,277.8 L754.6,280.2 L754.9,282.5 L755.2,284.8 L755.5,287.2 L755.8,289.5 L756.1,291.9 L756.3,294.2 L756.6,296.6 L756.8,298.9 L757.0,301.2 L757.3,303.6 L757.5,305.9 L757.7,308.3 L757.9,310.6 L758.1,313.0 L758.3,315.4 L758.5,317.7 L758.7,320.1 L758.9,322.5 L759.1,324.9 L759.2,327.3 L759.4,329.3 L759.5,331.4 L759.7,333.4 L759.8,335.4 L759.9,337.4 L759.9,339.4 L760.0,341.4 L760.0,343.4 L760.1,345.4 L760.1,347.4 L760.1,349.4 L760.1,351.4 L760.1,353.4 L760.1,355.4 L760.1,357.3 L760.1,359.3 L760.1,361.3 L760.1,363.3 L760.1,365.3 L760.1,367.3 L760.0,369.2 L760.0,371.2 L760.0,373.2 L759.9,375.1 L759.9,377.1 L759.8,379.2 L759.7,381.4 L759.6,383.6 L759.5,385.8 L759.4,388.0 L759.3,390.1 L759.2,392.3 L759.0,394.4 L758.8,396.6 L758.7,398.7 L758.4,400.9 L758.2,403.0 L758.0,405.1 L757.7,407.2 L757.4,409.3 L757.2,411.3 L756.9,413.4 L756.6,415.5 L756.3,417.6 L756.0,419.7 L755.7,421.7 L755.4,423.8 L755.1,425.8 L754.8,427.9 L754.5,429.9 L754.1,431.9 L753.8,433.9 L753.4,435.9 L753.1,437.9 L752.7,439.9 L752.3,441.9 L751.8,443.9 L751.4,445.8 L750.9,447.7 L750.4,449.6 L749.9,451.5 L749.4,453.4 L748.9,455.3 L748.3,457.1 L747.7,458.9 L747.1,460.7 L746.5,462.5 L745.9,464.3 L745.3,466.1 L744.7,467.9 L744.0,469.6 L743.4,471.4 L742.8,473.1 L742.2,474.8 L741.5,476.5 L740.9,478.2 L740.2,479.8 L739.6,481.3 L738.9,482.9 L738.2,484.4 L737.4,485.9 L736.6,487.4 L735.9,488.9 L735.0,490.4 L734.1,491.8 L733.2,493.2 L732.3,494.5 L731.2,495.8 L729.9,496.9 L728.8,498.2 L727.9,499.6 L727.1,501.1 L726.5,502.7 M726.5,166.0 L727.0,168.0 L727.5,170.0 L728.0,172.0 L728.5,174.0 L729.0,176.0 L729.4,178.1 L729.9,180.1 L730.4,182.1 L730.8,184.2 L731.3,186.2 L731.7,188.2 L732.2,190.3 L732.6,192.3 L733.0,194.3 L733.5,196.4 L733.9,198.4 L734.3,200.5 L734.8,202.5 L735.2,204.6 L735.6,206.6 L736.0,208.7 L736.4,210.7 L736.8,212.8 L737.2,214.8 L737.6,216.9 L738.0,218.9 L738.4,221.0 L738.8,223.0 L739.2,225.1 L739.6,227.1 L740.0,229.1 L740.4,231.2 L740.8,233.2 L741.1,235.2 L741.5,237.3 L741.8,239.3 L742.2,241.3 L742.5,243.3 L742.9,245.4 L743.2,247.4 L743.5,249.4 L743.8,251.4 L744.1,253.5 L744.4,255.5 L744.7,257.5 L745.0,259.6 L745.3,261.6 L745.6,263.6 L745.8,265.6 L746.1,267.6 L746.4,269.7 L746.6,272.1 L746.9,274.4 L747.2,276.7 L747.4,279.0 L747.7,281.4 L747.9,283.7 L748.2,286.0 L748.4,288.4 L748.6,290.7 L748.8,293.1 L749.0,295.4 L749.2,297.7 L749.3,300.0 L749.5,302.4 L749.7,304.7 L749.9,307.0 L750.0,309.4 L750.2,311.7 L750.3,314.1 L750.5,316.4 L750.6,318.8 L750.8,321.2 L750.9,323.5 L751.1,325.9 L751.2,328.3 L751.3,330.4 L751.4,332.4 L751.5,334.4 L751.6,336.4 L751.7,338.5 L751.7,340.5 L751.8,342.5 L751.8,344.5 L751.8,346.5 L751.9,348.5 L751.9,350.5 L751.9,352.4 L751.9,354.4 L751.9,356.4 L751.9,358.4 L751.9,360.4 L751.9,362.4 L751.9,364.4 L751.9,366.3 L751.9,368.3 L751.9,370.3 L751.8,372.3 L751.8,374.2 L751.8,376.2 L751.7,378.2 L751.7,380.3 L751.6,382.5 L751.6,384.7 L751.5,386.9 L751.4,389.0 L751.3,391.2 L751.2,393.4 L751.1,395.5 L751.0,397.7 L750.8,399.8 L750.7,401.9 L750.5,404.1 L750.3,406.2 L750.1,408.3 L750.0,410.3 L749.8,412.4 L749.5,414.5 L749.3,416.6 L749.1,418.7 L748.9,420.7 L748.7,422.8 L748.5,424.8 L748.2,426.9 L748.0,428.9 L747.7,430.9 L747.5,433.0 L747.2,435.0 L746.9,437.0 L746.7,439.0 L746.4,440.9 L746.1,442.9 L745.7,444.8 L745.4,446.8 L745.0,448.7 L744.7,450.6 L744.3,452.5 L743.9,454.3 L743.5,456.2 L743.0,458.0 L742.6,459.8 L742.1,461.5 L741.6,463.3 L741.2,465.1 L740.7,466.8 L740.2,468.6 L739.8,470.3 L739.3,472.0 L738.8,473.7 L738.3,475.4 L737.8,477.1 L737.3,478.7 L736.8,480.3 L736.3,481.8 L735.8,483.4 L735.2,484.9 L734.7,486.3 L734.1,487.8 L733.5,489.3 L732.9,490.7 L732.2,492.1 L731.5,493.4 L730.8,494.7 L730.0,496.0 L729.1,497.1 L728.2,498.3 L727.6,499.7 L727.0,501.1 L726.5,502.7 M726.5,166.0 L726.8,168.0 L727.2,170.1 L727.5,172.1 L727.8,174.1 L728.2,176.2 L728.5,178.3 L728.8,180.3 L729.1,182.4 L729.4,184.4 L729.7,186.5 L730.0,188.6 L730.3,190.6 L730.6,192.7 L730.9,194.7 L731.2,196.8 L731.5,198.9 L731.8,201.0 L732.0,203.0 L732.3,205.1 L732.6,207.2 L732.9,209.2 L733.1,211.3 L733.4,213.4 L733.7,215.4 L733.9,217.5 L734.2,219.6 L734.5,221.7 L734.7,223.7 L735.0,225.8 L735.3,227.9 L735.5,229.9 L735.8,232.0 L736.0,234.0 L736.3,236.1 L736.5,238.1 L736.8,240.2 L737.0,242.2 L737.2,244.3 L737.4,246.3 L737.7,248.4 L737.9,250.4 L738.1,252.4 L738.3,254.5 L738.5,256.5 L738.7,258.6 L738.9,260.6 L739.1,262.7 L739.3,264.7 L739.4,266.7 L739.6,268.8 L739.8,270.9 L740.0,273.2 L740.1,275.5 L740.3,277.8 L740.5,280.2 L740.7,282.5 L740.8,284.8 L741.0,287.1 L741.1,289.5 L741.2,291.8 L741.4,294.1 L741.5,296.4 L741.6,298.8 L741.8,301.1 L741.9,303.4 L742.0,305.7 L742.1,308.1 L742.2,310.4 L742.3,312.7 L742.4,315.1 L742.5,317.4 L742.6,319.7 L742.7,322.1 L742.8,324.5 L742.9,326.8 L743.0,329.2 L743.1,331.3 L743.2,333.3 L743.2,335.3 L743.3,337.4 L743.3,339.4 L743.4,341.4 L743.4,343.4 L743.4,345.4 L743.5,347.4 L743.5,349.4 L743.5,351.4 L743.5,353.4 L743.5,355.4 L743.5,357.3 L743.5,359.3 L743.5,361.3 L743.5,363.3 L743.5,365.3 L743.5,367.3 L743.5,369.2 L743.5,371.2 L743.5,373.2 L743.5,375.2 L743.4,377.1 L743.4,379.1 L743.4,381.2 L743.4,383.4 L743.3,385.6 L743.3,387.8 L743.2,390.0 L743.2,392.1 L743.1,394.3 L743.0,396.5 L742.9,398.6 L742.8,400.8 L742.7,402.9 L742.6,405.0 L742.5,407.1 L742.4,409.2 L742.3,411.3 L742.1,413.4 L742.0,415.4 L741.9,417.5 L741.7,419.6 L741.6,421.6 L741.4,423.7 L741.3,425.7 L741.1,427.8 L741.0,429.8 L740.8,431.8 L740.6,433.9 L740.5,435.9 L740.3,437.8 L740.1,439.8 L739.9,441.8 L739.7,443.7 L739.5,445.7 L739.2,447.6 L739.0,449.5 L738.7,451.4 L738.5,453.2 L738.2,455.1 L737.9,456.9 L737.6,458.7 L737.3,460.5 L737.0,462.2 L736.7,464.0 L736.3,465.7 L736.0,467.4 L735.7,469.2 L735.4,470.9 L735.1,472.6 L734.7,474.3 L734.4,475.9 L734.1,477.6 L733.7,479.2 L733.4,480.7 L733.0,482.3 L732.7,483.7 L732.3,485.2 L731.9,486.7 L731.5,488.1 L731.1,489.5 L730.7,490.9 L730.3,492.3 L729.8,493.6 L729.4,494.9 L728.8,496.1 L728.2,497.2 L727.7,498.4 L727.2,499.7 L726.8,501.2 L726.5,502.7 M726.5,166.0 L726.7,168.1 L726.8,170.1 L727.0,172.2 L727.2,174.3 L727.3,176.3 L727.5,178.4 L727.7,180.5 L727.8,182.6 L728.0,184.7 L728.1,186.8 L728.3,188.8 L728.4,190.9 L728.6,193.0 L728.7,195.1 L728.9,197.2 L729.0,199.3 L729.1,201.4 L729.3,203.5 L729.4,205.6 L729.6,207.7 L729.7,209.8 L729.8,211.8 L730.0,213.9 L730.1,216.0 L730.2,218.1 L730.4,220.2 L730.5,222.3 L730.6,224.4 L730.8,226.5 L730.9,228.6 L731.0,230.6 L731.1,232.7 L731.3,234.8 L731.4,236.9 L731.5,238.9 L731.6,241.0 L731.8,243.1 L731.9,245.1 L732.0,247.2 L732.1,249.2 L732.2,251.3 L732.3,253.4 L732.4,255.4 L732.5,257.5 L732.6,259.5 L732.7,261.6 L732.8,263.7 L732.9,265.7 L733.0,267.8 L733.1,269.8 L733.1,271.9 L733.2,274.2 L733.3,276.5 L733.4,278.9 L733.5,281.2 L733.6,283.5 L733.7,285.8 L733.7,288.1 L733.8,290.5 L733.9,292.8 L733.9,295.1 L734.0,297.4 L734.1,299.7 L734.1,302.0 L734.2,304.3 L734.2,306.6 L734.3,309.0 L734.4,311.3 L734.4,313.6 L734.5,315.9 L734.5,318.2 L734.6,320.6 L734.6,322.9 L734.7,325.3 L734.7,327.6 L734.8,330.0 L734.8,332.0 L734.8,334.1 L734.9,336.1 L734.9,338.1 L734.9,340.2 L735.0,342.2 L735.0,344.2 L735.0,346.2 L735.0,348.2 L735.0,350.2 L735.0,352.2 L735.0,354.2 L735.0,356.2 L735.0,358.1 L735.0,360.1 L735.0,362.1 L735.0,364.1 L735.0,366.1 L735.0,368.1 L735.0,370.0 L735.0,372.0 L735.0,374.0 L735.0,376.0 L735.0,377.9 L735.0,379.9 L735.0,382.0 L735.0,384.2 L734.9,386.4 L734.9,388.6 L734.9,390.8 L734.9,393.0 L734.8,395.1 L734.8,397.3 L734.8,399.4 L734.7,401.6 L734.7,403.7 L734.6,405.8 L734.6,407.9 L734.5,410.0 L734.4,412.1 L734.4,414.2 L734.3,416.2 L734.2,418.3 L734.2,420.4 L734.1,422.4 L734.0,424.5 L733.9,426.5 L733.9,428.6 L733.8,430.6 L733.7,432.6 L733.6,434.6 L733.5,436.6 L733.4,438.6 L733.3,440.6 L733.2,442.5 L733.1,444.5 L733.0,446.4 L732.9,448.3 L732.8,450.2 L732.7,452.0 L732.5,453.9 L732.4,455.7 L732.2,457.5 L732.1,459.3 L731.9,461.1 L731.8,462.8 L731.6,464.5 L731.4,466.3 L731.3,468.0 L731.1,469.7 L731.0,471.4 L730.8,473.0 L730.6,474.7 L730.5,476.4 L730.3,478.0 L730.1,479.6 L729.9,481.1 L729.8,482.6 L729.6,484.1 L729.4,485.5 L729.2,487.0 L729.0,488.4 L728.8,489.8 L728.6,491.1 L728.4,492.5 L728.2,493.8 L727.9,495.1 L727.6,496.2 L727.4,497.3 L727.1,498.4 L726.9,499.8 L726.7,501.2 L726.5,502.7 M726.5,166.0 L726.5,168.1 L726.5,170.2 L726.5,172.3 L726.5,174.4 L726.5,176.5 L726.5,178.6 L726.5,180.7 L726.5,182.8 L726.5,184.9 L726.5,187.0 L726.5,189.1 L726.5,191.2 L726.5,193.3 L726.5,195.4 L726.5,197.6 L726.5,199.7 L726.5,201.8 L726.5,203.9 L726.5,206.0 L726.5,208.1 L726.5,210.2 L726.5,212.3 L726.5,214.4 L726.5,216.5 L726.5,218.7 L726.5,220.8 L726.5,222.9 L726.5,225.0 L726.5,227.1 L726.5,229.2 L726.5,231.3 L726.5,233.4 L726.5,235.5 L726.5,237.6 L726.5,239.6 L726.5,241.7 L726.5,243.8 L726.5,245.9 L726.5,248.0 L726.5,250.0 L726.5,252.1 L726.5,254.2 L726.5,256.3 L726.5,258.3 L726.5,260.4 L726.5,262.5 L726.5,264.6 L726.5,266.6 L726.5,268.7 L726.5,270.8 L726.5,272.9 L726.5,275.2 L726.5,277.5 L726.5,279.8 L726.5,282.1 L726.5,284.4 L726.5,286.7 L726.5,289.0 L726.5,291.3 L726.5,293.6 L726.5,295.9 L726.5,298.2 L726.5,300.5 L726.5,302.8 L726.5,305.1 L726.5,307.4 L726.5,309.7 L726.5,312.0 L726.5,314.3 L726.5,316.7 L726.5,319.0 L726.5,321.3 L726.5,323.6 L726.5,325.9 L726.5,328.3 L726.5,330.6 L726.5,332.6 L726.5,334.7 L726.5,336.7 L726.5,338.8 L726.5,340.8 L726.5,342.8 L726.5,344.8 L726.5,346.8 L726.5,348.8 L726.5,350.8 L726.5,352.8 L726.5,354.8 L726.5,356.8 L726.5,358.8 L726.5,360.8 L726.5,362.8 L726.5,364.8 L726.5,366.8 L726.5,368.7 L726.5,370.7 L726.5,372.7 L726.5,374.7 L726.5,376.6 L726.5,378.6 L726.5,380.6 L726.5,382.7 L726.5,384.9 L726.5,387.1 L726.5,389.3 L726.5,391.5 L726.5,393.6 L726.5,395.8 L726.5,397.9 L726.5,400.1 L726.5,402.2 L726.5,404.4 L726.5,406.5 L726.5,408.6 L726.5,410.7 L726.5,412.7 L726.5,414.8 L726.5,416.9 L726.5,419.0 L726.5,421.0 L726.5,423.1 L726.5,425.1 L726.5,427.1 L726.5,429.2 L726.5,431.2 L726.5,433.2 L726.5,435.2 L726.5,437.2 L726.5,439.2 L726.5,441.1 L726.5,443.1 L726.5,445.0 L726.5,446.9 L726.5,448.8 L726.5,450.7 L726.5,452.6 L726.5,454.4 L726.5,456.2 L726.5,458.0 L726.5,459.8 L726.5,461.5 L726.5,463.3 L726.5,465.0 L726.5,466.7 L726.5,468.4 L726.5,470.0 L726.5,471.7 L726.5,473.4 L726.5,475.0 L726.5,476.7 L726.5,478.3 L726.5,479.9 L726.5,481.4 L726.5,482.8 L726.5,484.3 L726.5,485.7 L726.5,487.2 L726.5,488.6 L726.5,489.9 L726.5,491.3 L726.5,492.6 L726.5,493.9 L726.5,495.2 L726.5,496.3 L726.5,497.3 L726.5,498.5 L726.5,499.8 L726.5,501.2 L726.5,502.7 M726.5,166.0 L726.2,168.1 L725.9,170.3 L725.6,172.4 L725.3,174.5 L725.0,176.7 L724.8,178.8 L724.5,181.0 L724.2,183.1 L724.0,185.2 L723.7,187.4 L723.4,189.5 L723.2,191.7 L722.9,193.8 L722.7,195.9 L722.4,198.1 L722.2,200.2 L722.0,202.3 L721.7,204.5 L721.5,206.6 L721.2,208.8 L721.0,210.9 L720.8,213.0 L720.6,215.2 L720.3,217.3 L720.1,219.4 L719.9,221.6 L719.7,223.7 L719.4,225.8 L719.2,228.0 L719.0,230.1 L718.8,232.2 L718.6,234.3 L718.3,236.5 L718.1,238.6 L717.9,240.7 L717.7,242.8 L717.5,244.9 L717.3,247.0 L717.1,249.1 L716.9,251.2 L716.8,253.3 L716.6,255.4 L716.4,257.5 L716.2,259.6 L716.1,261.7 L715.9,263.8 L715.7,265.9 L715.6,268.0 L715.4,270.0 L715.3,272.1 L715.1,274.2 L715.0,276.5 L714.8,278.8 L714.7,281.1 L714.6,283.4 L714.4,285.7 L714.3,288.0 L714.2,290.3 L714.0,292.6 L713.9,294.8 L713.8,297.1 L713.7,299.4 L713.6,301.7 L713.5,303.9 L713.4,306.2 L713.3,308.5 L713.2,310.8 L713.1,313.0 L713.0,315.3 L712.9,317.6 L712.8,319.9 L712.7,322.2 L712.6,324.5 L712.5,326.8 L712.4,329.1 L712.3,331.4 L712.3,333.4 L712.2,335.5 L712.1,337.5 L712.1,339.6 L712.0,341.6 L712.0,343.6 L712.0,345.6 L711.9,347.6 L711.9,349.6 L711.9,351.6 L711.9,353.6 L711.8,355.6 L711.8,357.6 L711.8,359.6 L711.8,361.6 L711.8,363.6 L711.8,365.6 L711.8,367.6 L711.8,369.5 L711.8,371.5 L711.8,373.5 L711.8,375.5 L711.8,377.5 L711.8,379.4 L711.9,381.4 L711.9,383.5 L711.9,385.7 L711.9,387.9 L712.0,390.1 L712.0,392.3 L712.0,394.4 L712.1,396.6 L712.2,398.7 L712.2,400.9 L712.3,403.0 L712.4,405.1 L712.5,407.2 L712.5,409.3 L712.6,411.4 L712.7,413.5 L712.8,415.6 L712.9,417.6 L713.1,419.7 L713.2,421.7 L713.3,423.8 L713.4,425.8 L713.5,427.9 L713.7,429.9 L713.8,431.9 L713.9,433.9 L714.1,435.9 L714.2,437.9 L714.4,439.8 L714.6,441.8 L714.7,443.7 L714.9,445.7 L715.1,447.6 L715.3,449.4 L715.5,451.3 L715.8,453.1 L716.0,455.0 L716.2,456.8 L716.5,458.5 L716.8,460.3 L717.1,462.0 L717.4,463.7 L717.7,465.4 L718.0,467.1 L718.3,468.8 L718.6,470.4 L718.8,472.1 L719.1,473.7 L719.4,475.4 L719.7,477.0 L720.0,478.6 L720.3,480.2 L720.7,481.6 L721.0,483.1 L721.3,484.5 L721.6,485.9 L722.0,487.3 L722.3,488.7 L722.7,490.1 L723.0,491.4 L723.4,492.7 L723.7,494.0 L724.1,495.2 L724.6,496.4 L725.0,497.4 L725.5,498.5 L725.9,499.8 L726.2,501.2 L726.5,502.7 M726.5,166.0 L725.9,168.2 L725.3,170.3 L724.7,172.5 L724.1,174.7 L723.6,176.8 L723.0,179.0 L722.5,181.2 L721.9,183.3 L721.4,185.5 L720.9,187.6 L720.4,189.8 L719.9,192.0 L719.4,194.1 L718.9,196.3 L718.5,198.5 L718.0,200.6 L717.5,202.8 L717.0,204.9 L716.6,207.1 L716.1,209.3 L715.7,211.4 L715.2,213.6 L714.8,215.7 L714.3,217.9 L713.9,220.0 L713.5,222.2 L713.0,224.3 L712.6,226.5 L712.1,228.6 L711.7,230.8 L711.3,232.9 L710.8,235.1 L710.4,237.2 L710.0,239.3 L709.6,241.5 L709.2,243.6 L708.8,245.7 L708.4,247.8 L708.0,250.0 L707.7,252.1 L707.3,254.2 L707.0,256.3 L706.6,258.4 L706.3,260.5 L705.9,262.6 L705.6,264.7 L705.3,266.8 L705.0,268.9 L704.7,271.0 L704.4,273.1 L704.1,275.3 L703.8,277.5 L703.5,279.8 L703.3,282.1 L703.0,284.3 L702.7,286.6 L702.5,288.9 L702.2,291.1 L702.0,293.4 L701.8,295.6 L701.6,297.9 L701.3,300.1 L701.1,302.4 L700.9,304.6 L700.7,306.9 L700.5,309.1 L700.3,311.4 L700.0,313.6 L699.8,315.9 L699.6,318.1 L699.4,320.4 L699.2,322.7 L699.1,324.9 L698.9,327.2 L698.7,329.4 L698.6,331.7 L698.4,333.8 L698.3,335.8 L698.2,337.9 L698.1,339.9 L698.0,341.9 L697.9,344.0 L697.8,346.0 L697.7,348.0 L697.7,350.0 L697.6,352.0 L697.6,354.0 L697.5,356.0 L697.5,358.0 L697.5,360.0 L697.5,362.0 L697.5,364.0 L697.5,366.0 L697.4,367.9 L697.4,369.9 L697.4,371.9 L697.4,373.9 L697.5,375.9 L697.5,377.8 L697.5,379.8 L697.5,381.8 L697.5,383.9 L697.6,386.1 L697.6,388.3 L697.7,390.4 L697.8,392.6 L697.8,394.8 L697.9,396.9 L698.0,399.1 L698.2,401.2 L698.3,403.3 L698.4,405.4 L698.6,407.5 L698.8,409.6 L699.0,411.7 L699.1,413.8 L699.3,415.8 L699.5,417.9 L699.8,420.0 L700.0,422.0 L700.2,424.0 L700.4,426.1 L700.7,428.1 L700.9,430.1 L701.2,432.1 L701.5,434.1 L701.8,436.1 L702.1,438.1 L702.4,440.0 L702.7,442.0 L703.0,443.9 L703.4,445.8 L703.8,447.7 L704.2,449.6 L704.7,451.4 L705.1,453.3 L705.6,455.1 L706.1,456.9 L706.6,458.6 L707.2,460.4 L707.7,462.1 L708.3,463.8 L708.9,465.5 L709.5,467.1 L710.2,468.8 L710.8,470.5 L711.4,472.1 L712.0,473.7 L712.6,475.4 L713.2,477.0 L713.8,478.6 L714.4,480.1 L715.0,481.6 L715.7,483.0 L716.3,484.5 L717.0,485.9 L717.7,487.3 L718.4,488.7 L719.0,490.0 L719.7,491.4 L720.4,492.7 L721.2,494.0 L721.9,495.2 L722.7,496.4 L723.6,497.4 L724.5,498.5 L725.2,499.8 L725.9,501.2 L726.5,502.7 M726.5,166.0 L725.6,168.2 L724.7,170.4 L723.8,172.6 L722.9,174.7 L722.1,176.9 L721.3,179.1 L720.5,181.3 L719.7,183.5 L719.0,185.7 L718.2,187.8 L717.5,190.0 L716.8,192.2 L716.0,194.4 L715.3,196.5 L714.6,198.7 L713.9,200.9 L713.2,203.1 L712.5,205.2 L711.9,207.4 L711.2,209.6 L710.5,211.7 L709.9,213.9 L709.2,216.1 L708.6,218.2 L708.0,220.4 L707.3,222.6 L706.7,224.7 L706.1,226.9 L705.4,229.1 L704.8,231.2 L704.2,233.4 L703.5,235.5 L702.9,237.7 L702.3,239.8 L701.7,242.0 L701.1,244.1 L700.5,246.2 L699.9,248.4 L699.4,250.5 L698.8,252.6 L698.3,254.7 L697.8,256.9 L697.3,259.0 L696.8,261.1 L696.3,263.2 L695.9,265.3 L695.4,267.5 L694.9,269.6 L694.5,271.7 L694.1,273.8 L693.7,275.9 L693.2,278.1 L692.8,280.4 L692.4,282.6 L692.0,284.9 L691.7,287.1 L691.3,289.4 L691.0,291.6 L690.6,293.8 L690.3,296.1 L690.0,298.3 L689.6,300.5 L689.3,302.7 L689.0,304.9 L688.7,307.2 L688.4,309.4 L688.0,311.6 L687.7,313.8 L687.3,316.0 L687.0,318.3 L686.7,320.5 L686.5,322.7 L686.2,324.9 L686.0,327.2 L685.7,329.4 L685.5,331.6 L685.3,333.7 L685.1,335.7 L684.9,337.8 L684.7,339.8 L684.6,341.9 L684.4,343.9 L684.3,345.9 L684.2,347.9 L684.1,349.9 L684.0,351.9 L684.0,353.9 L683.9,355.9 L683.8,357.9 L683.8,359.9 L683.8,361.9 L683.7,363.9 L683.7,365.9 L683.7,367.9 L683.7,369.9 L683.7,371.8 L683.7,373.8 L683.7,375.8 L683.7,377.8 L683.7,379.7 L683.7,381.7 L683.8,383.8 L683.8,386.0 L683.9,388.2 L684.0,390.3 L684.1,392.5 L684.2,394.7 L684.3,396.8 L684.5,398.9 L684.6,401.1 L684.8,403.2 L685.0,405.3 L685.2,407.4 L685.5,409.4 L685.7,411.5 L686.0,413.6 L686.3,415.6 L686.6,417.7 L686.9,419.7 L687.2,421.8 L687.5,423.8 L687.9,425.8 L688.2,427.8 L688.6,429.9 L689.0,431.8 L689.4,433.8 L689.8,435.8 L690.2,437.8 L690.7,439.7 L691.1,441.7 L691.6,443.6 L692.2,445.5 L692.8,447.4 L693.4,449.3 L694.1,451.1 L694.8,452.9 L695.5,454.8 L696.2,456.5 L697.0,458.3 L697.8,460.0 L698.7,461.8 L699.6,463.5 L700.5,465.1 L701.5,466.8 L702.4,468.5 L703.3,470.1 L704.2,471.8 L705.1,473.4 L706.0,475.0 L706.9,476.7 L707.9,478.2 L708.8,479.8 L709.8,481.3 L710.7,482.8 L711.7,484.2 L712.7,485.6 L713.7,487.1 L714.7,488.4 L715.7,489.8 L716.7,491.2 L717.7,492.5 L718.8,493.8 L719.9,495.1 L721.1,496.3 L722.3,497.3 L723.5,498.5 L724.6,499.8 L725.6,501.2 L726.5,502.7 M726.5,166.0 L725.3,168.2 L724.1,170.4 L722.9,172.6 L721.8,174.8 L720.7,177.0 L719.7,179.2 L718.7,181.4 L717.7,183.5 L716.7,185.7 L715.7,187.9 L714.7,190.1 L713.8,192.3 L712.9,194.5 L711.9,196.6 L711.0,198.8 L710.1,201.0 L709.2,203.2 L708.3,205.4 L707.5,207.5 L706.6,209.7 L705.8,211.9 L704.9,214.0 L704.1,216.2 L703.3,218.4 L702.4,220.6 L701.6,222.7 L700.8,224.9 L700.0,227.1 L699.2,229.2 L698.4,231.4 L697.5,233.5 L696.7,235.7 L695.9,237.9 L695.1,240.0 L694.3,242.2 L693.6,244.3 L692.8,246.4 L692.1,248.6 L691.4,250.7 L690.7,252.8 L690.0,255.0 L689.3,257.1 L688.7,259.2 L688.0,261.4 L687.4,263.5 L686.8,265.6 L686.2,267.7 L685.6,269.8 L685.0,271.9 L684.5,274.0 L684.0,276.2 L683.4,278.4 L682.9,280.6 L682.4,282.8 L681.9,285.0 L681.4,287.2 L681.0,289.4 L680.5,291.6 L680.1,293.9 L679.7,296.1 L679.2,298.2 L678.8,300.4 L678.4,302.6 L678.0,304.8 L677.6,307.0 L677.1,309.2 L676.7,311.4 L676.2,313.6 L675.8,315.8 L675.3,318.0 L675.0,320.1 L674.6,322.3 L674.3,324.5 L673.9,326.7 L673.6,328.9 L673.3,331.1 L673.0,333.2 L672.8,335.2 L672.5,337.3 L672.3,339.3 L672.1,341.3 L671.9,343.4 L671.8,345.4 L671.6,347.4 L671.5,349.4 L671.4,351.4 L671.2,353.4 L671.1,355.4 L671.0,357.4 L671.0,359.4 L670.9,361.4 L670.9,363.4 L670.9,365.4 L670.8,367.4 L670.8,369.3 L670.8,371.3 L670.8,373.3 L670.8,375.3 L670.8,377.3 L670.8,379.2 L670.8,381.2 L670.9,383.3 L670.9,385.5 L671.0,387.6 L671.1,389.8 L671.2,391.9 L671.4,394.1 L671.5,396.2 L671.7,398.3 L671.9,400.4 L672.1,402.5 L672.4,404.6 L672.7,406.7 L673.0,408.8 L673.3,410.9 L673.6,412.9 L673.9,415.0 L674.3,417.0 L674.7,419.0 L675.1,421.1 L675.5,423.1 L675.9,425.1 L676.4,427.1 L676.9,429.1 L677.4,431.1 L677.9,433.1 L678.4,435.1 L679.0,437.0 L679.5,439.0 L680.2,440.9 L680.8,442.9 L681.5,444.8 L682.3,446.6 L683.1,448.5 L684.0,450.4 L684.9,452.2 L685.9,454.0 L686.9,455.8 L687.9,457.6 L689.0,459.3 L690.2,461.0 L691.4,462.7 L692.6,464.4 L693.9,466.1 L695.1,467.8 L696.3,469.4 L697.5,471.1 L698.7,472.8 L699.9,474.4 L701.2,476.0 L702.4,477.6 L703.6,479.2 L704.9,480.7 L706.2,482.2 L707.5,483.7 L708.8,485.1 L710.1,486.6 L711.4,488.0 L712.7,489.4 L714.0,490.8 L715.3,492.2 L716.7,493.5 L718.1,494.8 L719.5,496.1 L721.1,497.2 L722.6,498.4 L724.0,499.8 L725.3,501.2 L726.5,502.7 M726.5,166.0 L725.0,168.2 L723.6,170.4 L722.1,172.6 L720.8,174.8 L719.5,177.0 L718.2,179.2 L717.0,181.4 L715.7,183.5 L714.5,185.7 L713.4,187.9 L712.2,190.1 L711.1,192.3 L709.9,194.4 L708.8,196.6 L707.7,198.8 L706.6,201.0 L705.6,203.1 L704.5,205.3 L703.5,207.5 L702.4,209.7 L701.4,211.8 L700.4,214.0 L699.4,216.2 L698.4,218.3 L697.4,220.5 L696.5,222.7 L695.5,224.8 L694.5,227.0 L693.5,229.1 L692.5,231.3 L691.6,233.5 L690.6,235.6 L689.6,237.8 L688.6,239.9 L687.7,242.1 L686.7,244.2 L685.8,246.3 L684.9,248.5 L684.1,250.6 L683.2,252.7 L682.4,254.9 L681.6,257.0 L680.8,259.1 L680.1,261.2 L679.3,263.3 L678.6,265.5 L677.9,267.6 L677.2,269.7 L676.5,271.8 L675.8,273.9 L675.2,276.0 L674.5,278.2 L673.9,280.4 L673.3,282.6 L672.7,284.8 L672.2,286.9 L671.6,289.1 L671.1,291.3 L670.6,293.5 L670.1,295.6 L669.6,297.8 L669.1,300.0 L668.6,302.1 L668.1,304.3 L667.5,306.4 L667.0,308.6 L666.4,310.8 L665.8,312.9 L665.3,315.1 L664.8,317.2 L664.3,319.4 L663.9,321.5 L663.4,323.7 L663.0,325.9 L662.7,328.0 L662.3,330.2 L661.9,332.2 L661.6,334.3 L661.3,336.3 L661.0,338.4 L660.8,340.4 L660.6,342.4 L660.4,344.4 L660.2,346.4 L660.0,348.4 L659.8,350.5 L659.7,352.5 L659.5,354.5 L659.4,356.5 L659.3,358.4 L659.3,360.4 L659.2,362.4 L659.2,364.4 L659.1,366.4 L659.1,368.4 L659.0,370.4 L659.0,372.4 L659.0,374.3 L659.0,376.3 L659.0,378.3 L659.0,380.3 L659.1,382.4 L659.2,384.5 L659.3,386.6 L659.4,388.8 L659.5,390.9 L659.6,393.0 L659.8,395.2 L660.0,397.3 L660.2,399.4 L660.5,401.5 L660.8,403.5 L661.1,405.6 L661.5,407.7 L661.8,409.7 L662.2,411.8 L662.6,413.8 L663.0,415.9 L663.4,417.9 L663.9,419.9 L664.4,421.9 L665.0,423.9 L665.5,425.9 L666.1,427.9 L666.7,429.9 L667.3,431.9 L667.9,433.9 L668.6,435.8 L669.3,437.8 L670.0,439.7 L670.8,441.6 L671.7,443.6 L672.6,445.5 L673.7,447.3 L674.8,449.2 L675.9,451.0 L677.1,452.8 L678.3,454.6 L679.6,456.4 L680.9,458.2 L682.3,459.9 L683.8,461.6 L685.3,463.3 L686.9,465.0 L688.4,466.7 L689.9,468.4 L691.4,470.1 L692.9,471.8 L694.4,473.5 L695.9,475.1 L697.4,476.7 L699.0,478.4 L700.5,479.9 L702.1,481.4 L703.7,482.9 L705.3,484.4 L706.9,485.9 L708.5,487.4 L710.1,488.9 L711.6,490.3 L713.2,491.7 L714.8,493.1 L716.5,494.5 L718.2,495.8 L720.0,497.0 L721.8,498.3 L723.4,499.7 L725.0,501.1 L726.5,502.7 M726.5,166.0 L724.8,168.2 L723.1,170.4 L721.4,172.6 L719.8,174.7 L718.3,176.9 L716.9,179.1 L715.4,181.3 L714.0,183.5 L712.6,185.6 L711.3,187.8 L710.0,190.0 L708.6,192.1 L707.4,194.3 L706.1,196.5 L704.8,198.6 L703.6,200.8 L702.3,203.0 L701.1,205.1 L699.9,207.3 L698.7,209.4 L697.6,211.6 L696.4,213.7 L695.3,215.9 L694.2,218.1 L693.0,220.2 L691.9,222.4 L690.8,224.5 L689.7,226.7 L688.6,228.8 L687.4,231.0 L686.3,233.1 L685.2,235.2 L684.1,237.4 L682.9,239.5 L681.8,241.7 L680.8,243.8 L679.7,245.9 L678.7,248.0 L677.7,250.2 L676.7,252.3 L675.8,254.4 L674.9,256.5 L674.0,258.6 L673.1,260.8 L672.3,262.9 L671.4,265.0 L670.6,267.1 L669.8,269.2 L669.0,271.3 L668.2,273.4 L667.5,275.5 L666.8,277.6 L666.1,279.8 L665.4,281.9 L664.7,284.1 L664.1,286.2 L663.5,288.4 L662.9,290.5 L662.3,292.7 L661.7,294.8 L661.1,297.0 L660.6,299.1 L660.0,301.2 L659.4,303.3 L658.8,305.5 L658.1,307.6 L657.4,309.7 L656.8,311.9 L656.1,314.0 L655.5,316.1 L654.9,318.2 L654.4,320.3 L653.9,322.5 L653.5,324.6 L653.0,326.7 L652.6,328.8 L652.2,330.9 L651.8,332.9 L651.5,335.0 L651.1,337.0 L650.9,339.0 L650.6,341.1 L650.4,343.1 L650.1,345.1 L649.9,347.1 L649.7,349.1 L649.5,351.1 L649.3,353.1 L649.2,355.1 L649.1,357.1 L649.0,359.1 L648.9,361.1 L648.8,363.1 L648.8,365.1 L648.7,367.0 L648.7,369.0 L648.6,371.0 L648.6,373.0 L648.6,375.0 L648.6,377.0 L648.6,378.9 L648.7,381.0 L648.7,383.1 L648.8,385.2 L649.0,387.4 L649.1,389.5 L649.2,391.6 L649.4,393.7 L649.6,395.8 L649.9,397.9 L650.2,399.9 L650.5,402.0 L650.9,404.1 L651.3,406.1 L651.7,408.2 L652.1,410.2 L652.5,412.2 L652.9,414.3 L653.5,416.3 L654.0,418.3 L654.6,420.3 L655.2,422.3 L655.8,424.3 L656.5,426.3 L657.1,428.3 L657.8,430.3 L658.5,432.2 L659.3,434.2 L660.1,436.2 L661.0,438.1 L661.9,440.0 L662.9,441.9 L664.0,443.8 L665.2,445.7 L666.5,447.6 L667.8,449.4 L669.2,451.3 L670.6,453.1 L672.1,454.9 L673.7,456.7 L675.3,458.4 L677.1,460.2 L678.9,461.9 L680.7,463.7 L682.5,465.4 L684.3,467.1 L686.1,468.8 L687.8,470.5 L689.6,472.2 L691.4,473.9 L693.1,475.6 L694.9,477.3 L696.7,478.8 L698.6,480.4 L700.5,482.0 L702.3,483.5 L704.2,485.1 L706.0,486.6 L707.8,488.1 L709.6,489.7 L711.4,491.1 L713.2,492.6 L715.1,494.1 L717.0,495.4 L719.0,496.7 L721.0,498.1 L722.9,499.6 L724.7,501.1 L726.5,502.7 M726.5,166.0 L724.6,168.2 L722.6,170.3 L720.8,172.5 L719.0,174.7 L717.4,176.8 L715.7,179.0 L714.1,181.1 L712.6,183.3 L711.0,185.4 L709.5,187.6 L708.0,189.7 L706.6,191.9 L705.2,194.0 L703.7,196.2 L702.3,198.3 L701.0,200.5 L699.6,202.6 L698.2,204.8 L696.9,206.9 L695.6,209.0 L694.3,211.2 L693.1,213.3 L691.8,215.4 L690.6,217.6 L689.3,219.7 L688.1,221.8 L686.9,224.0 L685.6,226.1 L684.4,228.2 L683.1,230.4 L681.9,232.5 L680.6,234.6 L679.4,236.7 L678.2,238.9 L676.9,241.0 L675.7,243.1 L674.6,245.2 L673.4,247.3 L672.3,249.4 L671.3,251.5 L670.2,253.6 L669.2,255.7 L668.2,257.8 L667.2,259.9 L666.3,262.0 L665.4,264.1 L664.4,266.2 L663.6,268.3 L662.7,270.4 L661.8,272.5 L661.0,274.6 L660.2,276.7 L659.4,278.8 L658.7,280.9 L658.0,283.1 L657.3,285.2 L656.6,287.3 L656.0,289.4 L655.3,291.5 L654.7,293.6 L654.0,295.7 L653.4,297.8 L652.8,299.9 L652.1,302.0 L651.4,304.1 L650.7,306.2 L649.9,308.3 L649.1,310.4 L648.4,312.5 L647.7,314.6 L647.1,316.7 L646.5,318.8 L645.9,320.9 L645.4,323.0 L644.9,325.0 L644.4,327.1 L644.0,329.2 L643.6,331.2 L643.2,333.2 L642.8,335.3 L642.5,337.3 L642.2,339.3 L641.9,341.3 L641.6,343.3 L641.4,345.3 L641.1,347.3 L640.9,349.3 L640.7,351.3 L640.5,353.3 L640.4,355.3 L640.3,357.3 L640.2,359.3 L640.1,361.3 L640.0,363.3 L640.0,365.3 L639.9,367.3 L639.9,369.3 L639.8,371.3 L639.8,373.2 L639.8,375.2 L639.8,377.2 L639.8,379.3 L639.9,381.4 L640.0,383.5 L640.1,385.6 L640.3,387.6 L640.4,389.7 L640.6,391.8 L640.8,393.9 L641.1,396.0 L641.4,398.0 L641.8,400.1 L642.2,402.1 L642.6,404.1 L643.0,406.2 L643.4,408.2 L643.9,410.2 L644.4,412.3 L644.9,414.3 L645.5,416.3 L646.1,418.3 L646.8,420.3 L647.5,422.3 L648.2,424.3 L649.0,426.3 L649.7,428.2 L650.5,430.2 L651.4,432.2 L652.3,434.1 L653.2,436.1 L654.3,438.0 L655.4,439.9 L656.6,441.8 L658.0,443.7 L659.4,445.6 L660.9,447.5 L662.4,449.4 L664.1,451.2 L665.7,453.0 L667.5,454.8 L669.4,456.6 L671.4,458.4 L673.4,460.2 L675.5,462.0 L677.5,463.7 L679.6,465.5 L681.5,467.2 L683.5,469.0 L685.5,470.7 L687.5,472.5 L689.5,474.2 L691.5,475.9 L693.6,477.6 L695.6,479.2 L697.7,480.8 L699.8,482.5 L701.9,484.1 L704.0,485.7 L706.0,487.3 L708.0,488.9 L710.0,490.4 L712.0,492.0 L714.0,493.5 L716.1,495.0 L718.2,496.4 L720.4,497.9 L722.4,499.4 L724.5,501.0 L726.5,502.7 M726.5,166.0 L724.4,168.1 L722.3,170.3 L720.3,172.4 L718.4,174.5 L716.6,176.7 L714.8,178.8 L713.1,180.9 L711.4,183.1 L709.7,185.2 L708.1,187.3 L706.5,189.4 L704.9,191.5 L703.4,193.7 L701.9,195.8 L700.4,197.9 L698.9,200.0 L697.4,202.1 L695.9,204.2 L694.5,206.3 L693.1,208.5 L691.8,210.6 L690.4,212.7 L689.0,214.8 L687.7,216.9 L686.4,219.0 L685.1,221.1 L683.7,223.2 L682.4,225.3 L681.1,227.4 L679.7,229.5 L678.4,231.6 L677.0,233.7 L675.7,235.8 L674.3,237.9 L673.0,240.0 L671.7,242.1 L670.5,244.2 L669.3,246.3 L668.1,248.4 L666.9,250.5 L665.8,252.6 L664.7,254.6 L663.6,256.7 L662.6,258.8 L661.6,260.9 L660.5,262.9 L659.6,265.0 L658.6,267.1 L657.7,269.2 L656.8,271.2 L655.9,273.3 L655.0,275.4 L654.2,277.5 L653.4,279.6 L652.6,281.7 L651.9,283.7 L651.2,285.8 L650.5,287.9 L649.8,290.0 L649.1,292.1 L648.4,294.1 L647.7,296.2 L647.0,298.3 L646.3,300.3 L645.5,302.4 L644.7,304.5 L643.9,306.5 L643.1,308.6 L642.3,310.7 L641.5,312.7 L640.8,314.8 L640.2,316.9 L639.6,318.9 L639.0,321.0 L638.5,323.0 L637.9,325.1 L637.4,327.1 L637.0,329.2 L636.6,331.2 L636.2,333.2 L635.8,335.2 L635.5,337.2 L635.2,339.2 L634.9,341.2 L634.6,343.2 L634.3,345.2 L634.0,347.3 L633.8,349.2 L633.6,351.2 L633.4,353.2 L633.3,355.2 L633.2,357.2 L633.1,359.2 L633.0,361.2 L633.0,363.2 L632.9,365.2 L632.8,367.2 L632.8,369.2 L632.8,371.1 L632.7,373.1 L632.7,375.1 L632.8,377.2 L632.8,379.2 L632.9,381.3 L633.1,383.4 L633.2,385.4 L633.4,387.5 L633.6,389.6 L633.8,391.6 L634.1,393.7 L634.4,395.7 L634.8,397.8 L635.2,399.8 L635.6,401.8 L636.0,403.8 L636.5,405.9 L637.0,407.9 L637.5,409.9 L638.1,411.9 L638.7,413.9 L639.4,415.9 L640.1,417.9 L640.8,419.9 L641.6,421.9 L642.4,423.9 L643.2,425.8 L644.1,427.8 L645.0,429.8 L646.0,431.7 L647.0,433.7 L648.1,435.7 L649.3,437.6 L650.7,439.5 L652.2,441.4 L653.7,443.3 L655.4,445.2 L657.0,447.1 L658.8,449.0 L660.6,450.9 L662.6,452.7 L664.6,454.5 L666.8,456.4 L669.0,458.2 L671.3,460.0 L673.5,461.8 L675.8,463.6 L677.9,465.4 L680.1,467.2 L682.3,469.0 L684.4,470.8 L686.6,472.6 L688.8,474.4 L691.1,476.1 L693.3,477.8 L695.6,479.5 L697.9,481.2 L700.2,482.9 L702.4,484.6 L704.6,486.3 L706.7,488.0 L708.8,489.6 L711.0,491.3 L713.1,492.9 L715.3,494.5 L717.6,496.0 L719.9,497.6 L722.1,499.3 L724.3,501.0 L726.5,502.7 M726.5,166.0 L724.3,168.1 L722.1,170.2 L719.9,172.3 L717.9,174.4 L716.0,176.5 L714.1,178.6 L712.3,180.7 L710.5,182.7 L708.8,184.8 L707.1,186.9 L705.4,189.0 L703.7,191.1 L702.1,193.2 L700.5,195.2 L698.9,197.3 L697.3,199.4 L695.8,201.5 L694.3,203.6 L692.8,205.6 L691.3,207.7 L689.9,209.8 L688.4,211.9 L687.0,213.9 L685.6,216.0 L684.2,218.1 L682.8,220.2 L681.5,222.2 L680.1,224.3 L678.7,226.4 L677.2,228.5 L675.8,230.5 L674.4,232.6 L673.0,234.7 L671.6,236.7 L670.2,238.8 L668.8,240.9 L667.5,242.9 L666.2,245.0 L665.0,247.1 L663.8,249.1 L662.6,251.2 L661.4,253.2 L660.3,255.3 L659.2,257.3 L658.1,259.4 L657.1,261.5 L656.0,263.5 L655.0,265.6 L654.0,267.6 L653.1,269.6 L652.1,271.7 L651.2,273.7 L650.4,275.8 L649.5,277.9 L648.7,279.9 L648.0,282.0 L647.2,284.0 L646.5,286.1 L645.8,288.1 L645.1,290.2 L644.3,292.2 L643.6,294.2 L642.9,296.3 L642.1,298.3 L641.3,300.4 L640.4,302.4 L639.6,304.4 L638.7,306.5 L637.8,308.5 L637.0,310.6 L636.2,312.6 L635.6,314.6 L634.9,316.7 L634.3,318.7 L633.8,320.7 L633.2,322.8 L632.7,324.8 L632.2,326.8 L631.8,328.8 L631.3,330.8 L631.0,332.8 L630.6,334.8 L630.3,336.9 L629.9,338.9 L629.6,340.9 L629.3,342.9 L629.0,344.8 L628.8,346.8 L628.6,348.8 L628.4,350.8 L628.3,352.8 L628.1,354.8 L628.0,356.8 L627.9,358.8 L627.9,360.8 L627.8,362.8 L627.7,364.8 L627.7,366.8 L627.6,368.8 L627.6,370.7 L627.6,372.7 L627.6,374.7 L627.7,376.8 L627.8,378.8 L627.9,380.9 L628.1,382.9 L628.2,385.0 L628.4,387.0 L628.6,389.1 L628.9,391.1 L629.3,393.1 L629.6,395.1 L630.1,397.1 L630.5,399.2 L630.9,401.2 L631.4,403.2 L631.9,405.2 L632.5,407.2 L633.1,409.2 L633.7,411.2 L634.4,413.2 L635.1,415.2 L635.9,417.2 L636.7,419.2 L637.6,421.2 L638.5,423.1 L639.3,425.1 L640.3,427.1 L641.3,429.1 L642.4,431.0 L643.6,433.0 L644.9,434.9 L646.3,436.9 L647.9,438.8 L649.6,440.8 L651.3,442.7 L653.1,444.6 L654.9,446.5 L656.9,448.4 L658.9,450.3 L661.1,452.2 L663.4,454.1 L665.8,455.9 L668.2,457.8 L670.6,459.7 L673.0,461.5 L675.3,463.4 L677.6,465.3 L679.9,467.1 L682.2,469.0 L684.5,470.8 L686.9,472.6 L689.2,474.4 L691.7,476.3 L694.1,478.0 L696.5,479.8 L698.9,481.6 L701.3,483.4 L703.5,485.2 L705.8,487.0 L708.0,488.7 L710.2,490.5 L712.5,492.2 L714.8,493.9 L717.1,495.6 L719.5,497.3 L721.8,499.1 L724.2,500.9 L726.5,502.7 M726.5,166.0 L724.2,168.0 L721.9,170.1 L719.7,172.1 L717.6,174.2 L715.7,176.2 L713.7,178.3 L711.8,180.3 L710.0,182.4 L708.2,184.4 L706.4,186.5 L704.7,188.5 L703.0,190.5 L701.3,192.6 L699.7,194.6 L698.0,196.7 L696.4,198.7 L694.8,200.7 L693.3,202.8 L691.7,204.8 L690.2,206.8 L688.7,208.9 L687.3,210.9 L685.8,213.0 L684.4,215.0 L682.9,217.0 L681.5,219.1 L680.1,221.1 L678.6,223.1 L677.2,225.2 L675.7,227.2 L674.3,229.2 L672.8,231.3 L671.4,233.3 L669.9,235.3 L668.5,237.4 L667.1,239.4 L665.7,241.4 L664.4,243.5 L663.1,245.5 L661.8,247.5 L660.6,249.5 L659.4,251.6 L658.3,253.6 L657.1,255.6 L656.0,257.6 L654.9,259.7 L653.9,261.7 L652.8,263.7 L651.8,265.7 L650.8,267.8 L649.9,269.8 L649.0,271.8 L648.1,273.8 L647.2,275.9 L646.4,277.9 L645.6,279.9 L644.8,281.9 L644.1,283.9 L643.4,286.0 L642.6,288.0 L641.9,290.0 L641.1,292.0 L640.4,294.0 L639.6,296.0 L638.7,298.0 L637.8,300.1 L636.9,302.1 L636.0,304.1 L635.1,306.1 L634.3,308.1 L633.5,310.1 L632.8,312.1 L632.1,314.2 L631.5,316.2 L630.9,318.2 L630.4,320.2 L629.8,322.2 L629.3,324.2 L628.8,326.2 L628.4,328.2 L628.0,330.2 L627.6,332.2 L627.3,334.2 L626.9,336.2 L626.6,338.2 L626.3,340.2 L626.0,342.2 L625.7,344.2 L625.5,346.2 L625.3,348.2 L625.2,350.2 L625.1,352.2 L625.0,354.2 L624.8,356.1 L624.8,358.1 L624.7,360.1 L624.6,362.1 L624.5,364.1 L624.5,366.1 L624.5,368.1 L624.5,370.1 L624.5,372.1 L624.6,374.1 L624.7,376.1 L624.8,378.1 L624.9,380.2 L625.1,382.2 L625.3,384.2 L625.5,386.2 L625.8,388.2 L626.1,390.2 L626.5,392.2 L626.9,394.2 L627.4,396.2 L627.8,398.2 L628.3,400.3 L628.8,402.2 L629.4,404.2 L630.0,406.2 L630.7,408.2 L631.4,410.2 L632.1,412.2 L632.9,414.2 L633.8,416.2 L634.6,418.2 L635.5,420.2 L636.5,422.2 L637.4,424.2 L638.5,426.1 L639.6,428.1 L640.9,430.1 L642.2,432.1 L643.7,434.0 L645.3,436.0 L647.0,437.9 L648.8,439.9 L650.6,441.9 L652.6,443.8 L654.6,445.8 L656.7,447.7 L659.0,449.6 L661.4,451.6 L663.8,453.5 L666.3,455.4 L668.8,457.3 L671.3,459.3 L673.7,461.2 L676.1,463.1 L678.5,465.0 L680.9,467.0 L683.3,468.9 L685.7,470.8 L688.1,472.7 L690.7,474.6 L693.2,476.5 L695.7,478.4 L698.2,480.2 L700.6,482.1 L702.9,484.0 L705.2,485.9 L707.5,487.8 L709.8,489.6 L712.1,491.5 L714.5,493.4 L716.9,495.2 L719.3,497.0 L721.7,498.9 L724.1,500.8 L726.5,502.7 M726.5,166.0 L724.2,168.0 L721.9,170.0 L719.6,172.0 L717.5,174.0 L715.5,176.0 L713.6,178.0 L711.7,179.9 L709.8,181.9 L708.0,183.9 L706.2,185.9 L704.5,187.9 L702.7,189.9 L701.1,191.9 L699.4,193.9 L697.7,195.9 L696.1,197.9 L694.5,199.9 L692.9,201.9 L691.4,203.9 L689.8,205.8 L688.3,207.8 L686.9,209.8 L685.4,211.8 L683.9,213.8 L682.5,215.8 L681.0,217.8 L679.6,219.8 L678.2,221.8 L676.7,223.8 L675.2,225.8 L673.8,227.8 L672.3,229.8 L670.8,231.7 L669.3,233.7 L667.9,235.7 L666.5,237.7 L665.1,239.7 L663.8,241.7 L662.4,243.7 L661.2,245.7 L660.0,247.7 L658.8,249.7 L657.6,251.7 L656.5,253.7 L655.3,255.7 L654.2,257.6 L653.1,259.6 L652.1,261.6 L651.1,263.6 L650.1,265.6 L649.1,267.6 L648.2,269.6 L647.3,271.6 L646.4,273.6 L645.6,275.6 L644.8,277.6 L644.0,279.6 L643.3,281.6 L642.5,283.5 L641.8,285.5 L641.0,287.5 L640.3,289.5 L639.5,291.5 L638.7,293.5 L637.9,295.5 L637.0,297.5 L636.0,299.5 L635.1,301.5 L634.2,303.5 L633.3,305.5 L632.5,307.5 L631.9,309.4 L631.2,311.4 L630.6,313.4 L630.0,315.4 L629.4,317.4 L628.8,319.4 L628.3,321.4 L627.9,323.4 L627.4,325.4 L627.0,327.4 L626.6,329.4 L626.3,331.4 L625.9,333.4 L625.6,335.3 L625.3,337.3 L625.0,339.3 L624.7,341.3 L624.5,343.3 L624.3,345.3 L624.1,347.3 L624.0,349.3 L623.9,351.3 L623.8,353.3 L623.7,355.3 L623.6,357.3 L623.5,359.3 L623.5,361.2 L623.4,363.2 L623.4,365.2 L623.4,367.2 L623.4,369.2 L623.5,371.2 L623.6,373.2 L623.7,375.2 L623.9,377.2 L624.0,379.2 L624.2,381.2 L624.4,383.2 L624.7,385.2 L625.1,387.1 L625.5,389.1 L625.9,391.1 L626.3,393.1 L626.8,395.1 L627.3,397.1 L627.8,399.1 L628.3,401.1 L629.0,403.1 L629.6,405.1 L630.4,407.1 L631.1,409.1 L631.9,411.1 L632.8,413.0 L633.7,415.0 L634.6,417.0 L635.5,419.0 L636.5,421.0 L637.5,423.0 L638.7,425.0 L639.9,427.0 L641.3,429.0 L642.8,431.0 L644.4,433.0 L646.2,435.0 L648.0,437.0 L649.8,438.9 L651.8,440.9 L653.8,442.9 L656.0,444.9 L658.3,446.9 L660.7,448.9 L663.2,450.9 L665.7,452.9 L668.2,454.9 L670.7,456.9 L673.1,458.9 L675.6,460.9 L678.0,462.9 L680.4,464.8 L682.8,466.8 L685.3,468.8 L687.8,470.8 L690.3,472.8 L692.9,474.8 L695.4,476.8 L697.9,478.8 L700.3,480.8 L702.7,482.8 L705.1,484.8 L707.4,486.8 L709.7,488.8 L712.0,490.7 L714.4,492.7 L716.8,494.7 L719.2,496.7 L721.6,498.7 L724.0,500.7 L726.5,502.7 M726.5,166.0 L728.4,167.4 L730.3,168.7 L732.2,170.1 L734.1,171.5 L736.0,173.0 L737.9,174.4 L739.8,175.9 L741.7,177.4 L743.6,178.9 L745.5,180.4 L747.3,181.9 L749.2,183.4 L751.0,185.0 L752.8,186.5 L754.7,188.0 L756.5,189.6 L758.3,191.2 L760.2,192.7 L762.0,194.3 L763.8,195.9 L765.5,197.4 L767.3,199.0 L769.0,200.6 L770.8,202.2 L772.6,203.8 L774.3,205.4 L776.1,207.0 L777.8,208.6 L779.5,210.2 L781.2,211.8 L782.8,213.4 L784.4,215.0 L786.0,216.6 L787.5,218.2 L789.0,219.8 L790.5,221.4 L791.9,223.0 L793.3,224.6 L794.7,226.3 L796.1,227.9 L797.4,229.6 L798.7,231.2 L800.1,232.9 L801.3,234.6 L802.6,236.3 L803.8,238.0 L805.0,239.7 L806.2,241.4 L807.3,243.1 L808.4,244.8 L809.5,246.7 L810.7,248.9 L812.0,251.0 L813.2,253.3 L814.4,255.5 L815.5,257.7 L816.6,260.0 L817.6,262.3 L818.6,264.6 L819.6,266.8 L820.4,269.1 L821.2,271.5 L821.9,273.8 L822.6,276.1 L823.2,278.4 L823.8,280.7 L824.4,283.0 L824.9,285.3 L825.4,287.7 L826.0,290.0 L826.4,292.4 L826.9,294.8 L827.5,297.2 L828.0,299.7 L828.6,302.1 L829.1,304.6 L829.6,306.5 L829.9,308.4 L830.3,310.4 L830.6,312.3 L830.8,314.2 L831.0,316.2 L831.1,318.1 L831.1,320.1 L831.1,322.0 L831.1,323.9 L831.0,325.9 L830.9,327.9 L830.9,329.8 L830.8,331.8 L830.7,333.8 L830.6,335.7 L830.5,337.7 L830.4,339.7 L830.2,341.7 L830.1,343.6 L829.9,345.6 L829.7,347.6 L829.5,349.6 L829.2,351.6 L829.0,353.6 L828.7,355.6 L828.4,357.6 L828.1,359.6 L827.7,361.6 L827.2,363.6 L826.7,365.6 L826.2,367.7 L825.6,369.7 L824.9,371.7 L824.2,373.8 L823.4,375.8 L822.6,377.9 L821.7,380.0 L820.7,382.0 L819.7,384.1 L818.7,386.1 L817.7,388.2 L816.7,390.3 L815.8,392.4 L814.8,394.5 L813.8,396.6 L812.8,398.7 L811.7,400.8 L810.7,402.9 L809.6,405.0 L808.5,407.1 L807.4,409.3 L806.3,411.4 L805.2,413.6 L804.0,415.7 L802.8,417.9 L801.6,420.1 L800.3,422.3 L799.0,424.5 L797.7,426.8 L796.3,429.0 L794.9,431.3 L793.4,433.5 L791.8,435.8 L790.3,438.1 L788.7,440.4 L787.1,442.7 L785.5,445.1 L784.0,447.4 L782.4,449.7 L780.9,452.0 L779.3,454.3 L777.6,456.7 L775.9,459.0 L774.2,461.3 L772.4,463.6 L770.6,465.9 L768.8,468.2 L766.9,470.5 L764.8,472.9 L762.7,475.2 L760.3,477.5 L757.8,479.8 L755.2,482.1 L752.3,484.4 L749.2,486.6 L745.9,488.9 L741.9,491.2 L737.3,493.5 L733.3,495.8 L730.5,498.1 L728.2,500.4 L726.5,502.7 M726.5,166.0 L724.2,168.0 L721.9,170.0 L719.6,172.0 L717.5,174.0 L715.5,176.1 L713.6,178.1 L711.7,180.1 L709.8,182.1 L708.0,184.1 L706.2,186.1 L704.5,188.1 L702.8,190.1 L701.1,192.1 L699.4,194.1 L697.8,196.1 L696.1,198.1 L694.5,200.1 L692.9,202.1 L691.4,204.1 L689.9,206.1 L688.4,208.2 L686.9,210.2 L685.4,212.2 L684.0,214.2 L682.5,216.2 L681.1,218.2 L679.6,220.2 L678.2,222.2 L676.7,224.2 L675.3,226.2 L673.8,228.2 L672.3,230.2 L670.8,232.2 L669.4,234.2 L667.9,236.1 L666.5,238.1 L665.1,240.1 L663.8,242.1 L662.5,244.1 L661.2,246.1 L660.0,248.1 L658.8,250.1 L657.6,252.1 L656.5,254.1 L655.4,256.1 L654.3,258.1 L653.2,260.1 L652.1,262.1 L651.1,264.1 L650.1,266.1 L649.1,268.1 L648.2,270.1 L647.3,272.1 L646.5,274.0 L645.6,276.0 L644.8,278.0 L644.1,280.0 L643.3,282.0 L642.6,284.0 L641.8,286.0 L641.1,288.0 L640.3,290.0 L639.5,292.0 L638.7,294.0 L637.9,295.9 L637.0,297.9 L636.1,299.9 L635.1,301.9 L634.2,303.9 L633.4,305.9 L632.6,307.9 L631.9,309.9 L631.2,311.9 L630.6,313.9 L630.0,315.8 L629.4,317.8 L628.9,319.8 L628.4,321.8 L627.9,323.8 L627.4,325.8 L627.0,327.8 L626.7,329.8 L626.3,331.8 L626.0,333.7 L625.6,335.7 L625.3,337.7 L625.0,339.7 L624.7,341.7 L624.5,343.7 L624.3,345.7 L624.2,347.7 L624.0,349.6 L623.9,351.6 L623.8,353.6 L623.7,355.6 L623.6,357.6 L623.6,359.6 L623.5,361.6 L623.4,363.6 L623.4,365.5 L623.4,367.5 L623.4,369.5 L623.5,371.5 L623.6,373.5 L623.7,375.5 L623.9,377.5 L624.0,379.5 L624.2,381.5 L624.5,383.5 L624.8,385.5 L625.1,387.4 L625.5,389.4 L625.9,391.4 L626.3,393.4 L626.8,395.4 L627.3,397.4 L627.8,399.4 L628.3,401.4 L629.0,403.4 L629.6,405.4 L630.4,407.4 L631.1,409.4 L631.9,411.4 L632.8,413.4 L633.7,415.3 L634.6,417.3 L635.5,419.3 L636.5,421.3 L637.6,423.3 L638.7,425.3 L639.9,427.3 L641.3,429.3 L642.8,431.3 L644.4,433.3 L646.2,435.3 L648.0,437.3 L649.8,439.3 L651.8,441.2 L653.8,443.2 L656.0,445.2 L658.3,447.2 L660.7,449.2 L663.2,451.2 L665.7,453.2 L668.3,455.2 L670.7,457.1 L673.2,459.1 L675.6,461.1 L678.0,463.1 L680.4,465.1 L682.8,467.1 L685.3,469.1 L687.8,471.1 L690.3,473.0 L692.9,475.0 L695.4,477.0 L697.9,479.0 L700.3,481.0 L702.7,482.9 L705.1,484.9 L707.4,486.9 L709.7,488.9 L712.0,490.9 L714.4,492.8 L716.8,494.8 L719.2,496.8 L721.6,498.7 L724.0,500.7 L726.5,502.7 M726.5,166.0 L724.2,168.0 L721.9,170.1 L719.7,172.1 L717.6,174.1 L715.6,176.2 L713.6,178.2 L711.7,180.2 L709.9,182.2 L708.1,184.3 L706.3,186.3 L704.6,188.3 L702.8,190.3 L701.2,192.3 L699.5,194.3 L697.8,196.4 L696.2,198.4 L694.6,200.4 L693.0,202.4 L691.5,204.4 L690.0,206.4 L688.5,208.5 L687.0,210.5 L685.5,212.5 L684.1,214.5 L682.6,216.5 L681.2,218.5 L679.7,220.5 L678.3,222.5 L676.8,224.5 L675.4,226.5 L673.9,228.5 L672.4,230.5 L670.9,232.6 L669.5,234.6 L668.0,236.6 L666.6,238.6 L665.2,240.6 L663.9,242.6 L662.6,244.6 L661.3,246.6 L660.1,248.6 L658.9,250.6 L657.7,252.6 L656.6,254.6 L655.5,256.6 L654.4,258.5 L653.3,260.5 L652.2,262.5 L651.2,264.5 L650.2,266.5 L649.2,268.5 L648.3,270.5 L647.4,272.5 L646.5,274.5 L645.7,276.5 L644.9,278.5 L644.2,280.5 L643.4,282.5 L642.7,284.5 L641.9,286.4 L641.2,288.4 L640.4,290.4 L639.6,292.4 L638.8,294.4 L638.0,296.4 L637.1,298.4 L636.1,300.4 L635.2,302.4 L634.3,304.3 L633.4,306.3 L632.6,308.3 L631.9,310.3 L631.3,312.3 L630.7,314.3 L630.1,316.3 L629.5,318.2 L628.9,320.2 L628.4,322.2 L627.9,324.2 L627.5,326.2 L627.1,328.2 L626.7,330.2 L626.4,332.1 L626.0,334.1 L625.7,336.1 L625.4,338.1 L625.1,340.1 L624.8,342.1 L624.6,344.0 L624.4,346.0 L624.2,348.0 L624.1,350.0 L624.0,352.0 L623.9,353.9 L623.8,355.9 L623.7,357.9 L623.6,359.9 L623.5,361.9 L623.5,363.9 L623.5,365.8 L623.4,367.8 L623.5,369.8 L623.5,371.8 L623.6,373.8 L623.8,375.8 L623.9,377.8 L624.1,379.8 L624.2,381.8 L624.5,383.8 L624.8,385.8 L625.1,387.8 L625.5,389.7 L625.9,391.7 L626.4,393.7 L626.8,395.7 L627.3,397.7 L627.8,399.7 L628.4,401.7 L629.0,403.7 L629.7,405.7 L630.4,407.7 L631.2,409.7 L632.0,411.7 L632.8,413.7 L633.7,415.7 L634.6,417.6 L635.5,419.6 L636.5,421.6 L637.6,423.6 L638.7,425.6 L640.0,427.6 L641.3,429.6 L642.8,431.6 L644.4,433.6 L646.2,435.6 L648.0,437.6 L649.9,439.6 L651.8,441.5 L653.8,443.5 L656.0,445.5 L658.3,447.5 L660.7,449.5 L663.2,451.5 L665.7,453.5 L668.3,455.4 L670.7,457.4 L673.2,459.4 L675.6,461.4 L678.0,463.4 L680.4,465.3 L682.9,467.3 L685.3,469.3 L687.8,471.3 L690.3,473.3 L692.9,475.2 L695.4,477.2 L697.9,479.2 L700.4,481.1 L702.7,483.1 L705.1,485.1 L707.4,487.0 L709.7,489.0 L712.0,491.0 L714.4,492.9 L716.8,494.9 L719.2,496.8 L721.6,498.8 L724.0,500.7 L726.5,502.7 M726.5,166.0 L724.2,168.1 L721.9,170.1 L719.7,172.2 L717.6,174.2 L715.7,176.2 L713.7,178.3 L711.8,180.3 L710.0,182.4 L708.2,184.4 L706.4,186.4 L704.7,188.5 L703.0,190.5 L701.3,192.5 L699.6,194.6 L698.0,196.6 L696.4,198.6 L694.8,200.7 L693.2,202.7 L691.6,204.7 L690.1,206.7 L688.6,208.7 L687.1,210.8 L685.7,212.8 L684.2,214.8 L682.8,216.8 L681.3,218.8 L679.9,220.9 L678.5,222.9 L677.0,224.9 L675.5,226.9 L674.1,228.9 L672.6,230.9 L671.1,232.9 L669.7,234.9 L668.2,237.0 L666.8,239.0 L665.4,241.0 L664.1,243.0 L662.8,245.0 L661.5,247.0 L660.3,249.0 L659.1,251.0 L657.9,253.0 L656.8,255.0 L655.6,257.0 L654.5,259.0 L653.4,261.0 L652.4,263.0 L651.4,265.0 L650.4,267.0 L649.4,269.0 L648.5,271.0 L647.6,272.9 L646.7,274.9 L645.9,276.9 L645.1,278.9 L644.3,280.9 L643.5,282.9 L642.8,284.9 L642.0,286.9 L641.3,288.9 L640.5,290.9 L639.7,292.8 L638.9,294.8 L638.1,296.8 L637.2,298.8 L636.3,300.8 L635.3,302.8 L634.4,304.8 L633.5,306.8 L632.8,308.7 L632.1,310.7 L631.4,312.7 L630.8,314.7 L630.2,316.7 L629.6,318.7 L629.0,320.6 L628.5,322.6 L628.0,324.6 L627.6,326.6 L627.2,328.6 L626.8,330.5 L626.4,332.5 L626.1,334.5 L625.8,336.5 L625.4,338.5 L625.1,340.4 L624.9,342.4 L624.6,344.4 L624.4,346.4 L624.3,348.3 L624.2,350.3 L624.0,352.3 L623.9,354.3 L623.8,356.3 L623.7,358.2 L623.7,360.2 L623.6,362.2 L623.5,364.2 L623.5,366.2 L623.5,368.1 L623.5,370.1 L623.6,372.1 L623.7,374.1 L623.8,376.1 L624.0,378.1 L624.1,380.1 L624.3,382.1 L624.5,384.1 L624.8,386.1 L625.2,388.1 L625.6,390.0 L626.0,392.0 L626.4,394.0 L626.9,396.0 L627.4,398.0 L627.9,400.0 L628.4,402.0 L629.0,404.0 L629.7,406.0 L630.4,408.0 L631.2,410.0 L632.0,412.0 L632.9,414.0 L633.7,416.0 L634.6,418.0 L635.6,419.9 L636.6,421.9 L637.6,423.9 L638.8,425.9 L640.0,427.9 L641.3,429.9 L642.8,431.9 L644.5,433.9 L646.2,435.9 L648.0,437.9 L649.9,439.9 L651.8,441.8 L653.9,443.8 L656.0,445.8 L658.3,447.8 L660.8,449.8 L663.3,451.8 L665.8,453.7 L668.3,455.7 L670.8,457.7 L673.2,459.7 L675.6,461.6 L678.0,463.6 L680.5,465.6 L682.9,467.6 L685.3,469.5 L687.8,471.5 L690.4,473.5 L692.9,475.4 L695.4,477.4 L697.9,479.4 L700.4,481.3 L702.8,483.3 L705.1,485.2 L707.4,487.2 L709.7,489.1 L712.0,491.1 L714.4,493.0 L716.8,494.9 L719.2,496.9 L721.6,498.8 L724.1,500.7 L726.5,502.7 M726.5,166.0 L724.2,168.1 L722.0,170.1 L719.8,172.2 L717.7,174.3 L715.8,176.3 L713.8,178.4 L712.0,180.4 L710.1,182.5 L708.3,184.5 L706.6,186.6 L704.8,188.6 L703.1,190.7 L701.5,192.7 L699.8,194.8 L698.2,196.8 L696.6,198.9 L695.0,200.9 L693.4,202.9 L691.9,205.0 L690.3,207.0 L688.8,209.0 L687.4,211.1 L685.9,213.1 L684.5,215.1 L683.0,217.1 L681.6,219.2 L680.1,221.2 L678.7,223.2 L677.2,225.2 L675.8,227.3 L674.3,229.3 L672.8,231.3 L671.4,233.3 L669.9,235.3 L668.5,237.3 L667.0,239.4 L665.7,241.4 L664.3,243.4 L663.0,245.4 L661.7,247.4 L660.5,249.4 L659.3,251.4 L658.1,253.4 L657.0,255.4 L655.9,257.4 L654.8,259.4 L653.7,261.4 L652.6,263.4 L651.6,265.4 L650.6,267.4 L649.6,269.4 L648.7,271.4 L647.8,273.4 L646.9,275.4 L646.1,277.4 L645.3,279.4 L644.5,281.4 L643.7,283.3 L643.0,285.3 L642.2,287.3 L641.5,289.3 L640.7,291.3 L639.9,293.3 L639.1,295.3 L638.3,297.3 L637.4,299.2 L636.4,301.2 L635.5,303.2 L634.6,305.2 L633.7,307.2 L632.9,309.2 L632.2,311.1 L631.6,313.1 L630.9,315.1 L630.3,317.1 L629.7,319.1 L629.2,321.0 L628.7,323.0 L628.2,325.0 L627.7,327.0 L627.3,328.9 L626.9,330.9 L626.6,332.9 L626.2,334.9 L625.9,336.8 L625.5,338.8 L625.3,340.8 L625.0,342.8 L624.7,344.7 L624.5,346.7 L624.4,348.7 L624.3,350.7 L624.1,352.6 L624.0,354.6 L623.9,356.6 L623.8,358.6 L623.7,360.5 L623.7,362.5 L623.6,364.5 L623.6,366.5 L623.6,368.4 L623.6,370.4 L623.7,372.4 L623.8,374.4 L623.9,376.4 L624.0,378.4 L624.2,380.4 L624.4,382.4 L624.6,384.4 L624.9,386.4 L625.2,388.3 L625.6,390.3 L626.0,392.3 L626.5,394.3 L626.9,396.3 L627.4,398.3 L627.9,400.3 L628.5,402.3 L629.1,404.3 L629.8,406.3 L630.5,408.3 L631.3,410.3 L632.1,412.3 L632.9,414.3 L633.8,416.3 L634.7,418.3 L635.6,420.3 L636.6,422.2 L637.7,424.2 L638.8,426.2 L640.1,428.2 L641.4,430.2 L642.9,432.2 L644.5,434.2 L646.3,436.2 L648.1,438.2 L650.0,440.2 L651.9,442.1 L653.9,444.1 L656.1,446.1 L658.4,448.1 L660.8,450.1 L663.3,452.0 L665.8,454.0 L668.4,456.0 L670.8,458.0 L673.3,459.9 L675.7,461.9 L678.1,463.9 L680.5,465.8 L682.9,467.8 L685.4,469.8 L687.9,471.7 L690.4,473.7 L692.9,475.6 L695.5,477.6 L698.0,479.5 L700.4,481.5 L702.8,483.4 L705.1,485.4 L707.4,487.3 L709.7,489.2 L712.1,491.2 L714.4,493.1 L716.8,495.0 L719.2,496.9 L721.6,498.8 L724.1,500.8 L726.5,502.7 M726.5,166.0 L724.2,168.1 L722.0,170.2 L719.9,172.3 L717.8,174.3 L715.9,176.4 L714.0,178.5 L712.1,180.6 L710.3,182.6 L708.5,184.7 L706.8,186.7 L705.1,188.8 L703.4,190.9 L701.7,192.9 L700.1,195.0 L698.4,197.0 L696.8,199.1 L695.2,201.1 L693.7,203.2 L692.1,205.2 L690.6,207.3 L689.1,209.3 L687.7,211.3 L686.2,213.4 L684.8,215.4 L683.3,217.4 L681.9,219.5 L680.4,221.5 L679.0,223.5 L677.5,225.6 L676.1,227.6 L674.6,229.6 L673.1,231.7 L671.7,233.7 L670.2,235.7 L668.8,237.7 L667.4,239.7 L666.0,241.7 L664.6,243.8 L663.3,245.8 L662.0,247.8 L660.8,249.8 L659.6,251.8 L658.4,253.8 L657.3,255.8 L656.2,257.8 L655.0,259.8 L654.0,261.8 L652.9,263.8 L651.9,265.8 L650.9,267.8 L649.9,269.8 L649.0,271.8 L648.0,273.8 L647.2,275.8 L646.3,277.8 L645.5,279.8 L644.8,281.8 L644.0,283.8 L643.2,285.8 L642.5,287.7 L641.7,289.7 L640.9,291.7 L640.1,293.7 L639.3,295.7 L638.5,297.7 L637.6,299.7 L636.6,301.6 L635.7,303.6 L634.8,305.6 L633.9,307.6 L633.1,309.6 L632.4,311.6 L631.7,313.5 L631.1,315.5 L630.5,317.5 L629.9,319.5 L629.4,321.4 L628.8,323.4 L628.3,325.4 L627.9,327.4 L627.5,329.3 L627.1,331.3 L626.7,333.3 L626.4,335.2 L626.0,337.2 L625.7,339.2 L625.4,341.2 L625.1,343.1 L624.9,345.1 L624.7,347.1 L624.5,349.0 L624.4,351.0 L624.3,353.0 L624.1,354.9 L624.0,356.9 L623.9,358.9 L623.9,360.8 L623.8,362.8 L623.7,364.8 L623.7,366.8 L623.7,368.7 L623.7,370.7 L623.8,372.7 L623.9,374.7 L624.0,376.7 L624.1,378.7 L624.3,380.7 L624.5,382.7 L624.7,384.7 L625.0,386.7 L625.3,388.6 L625.7,390.6 L626.1,392.6 L626.6,394.6 L627.0,396.6 L627.5,398.6 L628.0,400.6 L628.6,402.6 L629.2,404.6 L629.9,406.6 L630.6,408.6 L631.4,410.6 L632.2,412.6 L633.0,414.6 L633.9,416.6 L634.8,418.6 L635.7,420.6 L636.7,422.5 L637.8,424.5 L638.9,426.5 L640.2,428.5 L641.5,430.5 L643.0,432.5 L644.6,434.5 L646.4,436.5 L648.2,438.5 L650.0,440.5 L652.0,442.4 L654.0,444.4 L656.2,446.4 L658.5,448.4 L660.9,450.3 L663.4,452.3 L665.9,454.3 L668.4,456.3 L670.9,458.2 L673.3,460.2 L675.7,462.2 L678.1,464.1 L680.6,466.1 L683.0,468.1 L685.4,470.0 L687.9,472.0 L690.4,473.9 L693.0,475.9 L695.5,477.8 L698.0,479.7 L700.4,481.7 L702.8,483.6 L705.1,485.5 L707.4,487.4 L709.7,489.4 L712.1,491.3 L714.4,493.2 L716.8,495.1 L719.2,497.0 L721.6,498.9 L724.1,500.8 L726.5,502.7 M726.5,166.0 L724.3,168.1 L722.1,170.2 L720.0,172.3 L717.9,174.4 L716.0,176.5 L714.1,178.6 L712.3,180.7 L710.5,182.7 L708.7,184.8 L707.0,186.9 L705.3,189.0 L703.6,191.0 L702.0,193.1 L700.3,195.2 L698.7,197.2 L697.1,199.3 L695.5,201.3 L694.0,203.4 L692.5,205.5 L691.0,207.5 L689.5,209.6 L688.0,211.6 L686.6,213.7 L685.1,215.7 L683.7,217.7 L682.2,219.8 L680.8,221.8 L679.4,223.9 L677.9,225.9 L676.5,227.9 L675.0,230.0 L673.5,232.0 L672.0,234.0 L670.6,236.1 L669.2,238.1 L667.7,240.1 L666.4,242.1 L665.0,244.1 L663.7,246.2 L662.4,248.2 L661.2,250.2 L660.0,252.2 L658.8,254.2 L657.7,256.2 L656.5,258.2 L655.4,260.2 L654.3,262.2 L653.3,264.2 L652.2,266.2 L651.2,268.2 L650.2,270.2 L649.3,272.2 L648.4,274.2 L647.5,276.2 L646.7,278.2 L645.9,280.2 L645.1,282.2 L644.3,284.2 L643.5,286.2 L642.8,288.2 L642.0,290.2 L641.2,292.1 L640.4,294.1 L639.6,296.1 L638.8,298.1 L637.8,300.1 L636.9,302.1 L636.0,304.0 L635.0,306.0 L634.2,308.0 L633.4,310.0 L632.7,312.0 L632.0,313.9 L631.3,315.9 L630.7,317.9 L630.1,319.9 L629.6,321.8 L629.0,323.8 L628.6,325.8 L628.1,327.7 L627.7,329.7 L627.3,331.7 L626.9,333.7 L626.6,335.6 L626.2,337.6 L625.9,339.5 L625.6,341.5 L625.3,343.5 L625.1,345.4 L624.8,347.4 L624.7,349.4 L624.5,351.3 L624.4,353.3 L624.3,355.3 L624.2,357.2 L624.1,359.2 L624.0,361.2 L623.9,363.1 L623.9,365.1 L623.8,367.1 L623.8,369.0 L623.8,371.0 L623.9,373.0 L624.0,375.0 L624.1,377.0 L624.2,379.0 L624.4,381.0 L624.6,383.0 L624.8,385.0 L625.1,386.9 L625.4,388.9 L625.8,390.9 L626.2,392.9 L626.7,394.9 L627.1,396.9 L627.6,398.9 L628.1,400.9 L628.7,402.9 L629.3,404.9 L630.0,406.9 L630.7,408.9 L631.5,410.9 L632.3,412.9 L633.1,414.9 L634.0,416.9 L634.9,418.9 L635.8,420.9 L636.8,422.9 L637.9,424.8 L639.0,426.8 L640.3,428.8 L641.6,430.8 L643.1,432.8 L644.7,434.8 L646.5,436.8 L648.3,438.8 L650.1,440.8 L652.1,442.7 L654.1,444.7 L656.3,446.7 L658.6,448.7 L661.0,450.6 L663.5,452.6 L666.0,454.6 L668.5,456.5 L671.0,458.5 L673.4,460.5 L675.8,462.4 L678.2,464.4 L680.6,466.3 L683.1,468.3 L685.5,470.3 L688.0,472.2 L690.5,474.1 L693.0,476.1 L695.6,478.0 L698.0,479.9 L700.5,481.8 L702.9,483.8 L705.2,485.7 L707.5,487.6 L709.8,489.5 L712.1,491.4 L714.5,493.3 L716.8,495.1 L719.2,497.0 L721.7,498.9 L724.1,500.8 L726.5,502.7 M726.5,166.0 L724.3,168.1 L722.2,170.2 L720.1,172.3 L718.1,174.5 L716.2,176.6 L714.3,178.7 L712.5,180.8 L710.8,182.8 L709.0,184.9 L707.3,187.0 L705.6,189.1 L703.9,191.2 L702.3,193.3 L700.7,195.3 L699.1,197.4 L697.5,199.5 L695.9,201.6 L694.4,203.6 L692.9,205.7 L691.4,207.7 L689.9,209.8 L688.4,211.9 L687.0,213.9 L685.5,216.0 L684.1,218.0 L682.7,220.1 L681.2,222.1 L679.8,224.2 L678.4,226.2 L676.9,228.2 L675.4,230.3 L674.0,232.3 L672.5,234.4 L671.0,236.4 L669.6,238.4 L668.2,240.5 L666.8,242.5 L665.4,244.5 L664.1,246.5 L662.9,248.5 L661.6,250.6 L660.4,252.6 L659.3,254.6 L658.1,256.6 L656.9,258.6 L655.8,260.6 L654.7,262.6 L653.7,264.6 L652.6,266.6 L651.6,268.6 L650.6,270.6 L649.7,272.6 L648.8,274.6 L647.9,276.6 L647.0,278.6 L646.2,280.6 L645.4,282.6 L644.6,284.6 L643.9,286.6 L643.1,288.6 L642.3,290.6 L641.6,292.5 L640.8,294.5 L639.9,296.5 L639.1,298.5 L638.2,300.5 L637.2,302.5 L636.3,304.4 L635.4,306.4 L634.5,308.4 L633.7,310.4 L632.9,312.4 L632.3,314.3 L631.6,316.3 L631.0,318.3 L630.4,320.3 L629.8,322.2 L629.3,324.2 L628.8,326.2 L628.3,328.1 L627.9,330.1 L627.5,332.1 L627.2,334.0 L626.8,336.0 L626.4,337.9 L626.1,339.9 L625.8,341.9 L625.5,343.8 L625.3,345.8 L625.0,347.7 L624.9,349.7 L624.7,351.7 L624.6,353.6 L624.5,355.6 L624.4,357.6 L624.3,359.5 L624.2,361.5 L624.1,363.4 L624.0,365.4 L624.0,367.4 L624.0,369.3 L624.0,371.3 L624.0,373.3 L624.1,375.3 L624.2,377.3 L624.4,379.3 L624.5,381.3 L624.7,383.3 L624.9,385.2 L625.2,387.2 L625.6,389.2 L625.9,391.2 L626.4,393.2 L626.8,395.2 L627.3,397.2 L627.7,399.2 L628.2,401.2 L628.8,403.2 L629.4,405.2 L630.1,407.2 L630.8,409.2 L631.6,411.2 L632.4,413.2 L633.2,415.2 L634.1,417.2 L635.0,419.2 L635.9,421.2 L636.9,423.2 L638.0,425.1 L639.1,427.1 L640.4,429.1 L641.7,431.1 L643.2,433.1 L644.8,435.1 L646.6,437.1 L648.4,439.1 L650.2,441.1 L652.2,443.0 L654.2,445.0 L656.4,447.0 L658.7,448.9 L661.1,450.9 L663.6,452.9 L666.1,454.8 L668.6,456.8 L671.1,458.8 L673.5,460.7 L675.9,462.7 L678.3,464.6 L680.7,466.6 L683.1,468.5 L685.6,470.5 L688.0,472.4 L690.6,474.3 L693.1,476.3 L695.6,478.2 L698.1,480.1 L700.5,482.0 L702.9,483.9 L705.2,485.8 L707.5,487.7 L709.8,489.6 L712.1,491.5 L714.5,493.3 L716.9,495.2 L719.3,497.0 L721.7,498.9 L724.1,500.8 L726.5,502.7 M726.5,166.0 L724.4,168.1 L722.3,170.3 L720.2,172.4 L718.3,174.5 L716.4,176.6 L714.6,178.7 L712.8,180.8 L711.0,182.9 L709.3,185.0 L707.6,187.1 L706.0,189.2 L704.3,191.3 L702.7,193.4 L701.1,195.5 L699.5,197.6 L697.9,199.7 L696.4,201.8 L694.8,203.8 L693.3,205.9 L691.8,208.0 L690.4,210.0 L688.9,212.1 L687.5,214.2 L686.0,216.2 L684.6,218.3 L683.2,220.3 L681.7,222.4 L680.3,224.5 L678.9,226.5 L677.4,228.6 L675.9,230.6 L674.5,232.6 L673.0,234.7 L671.5,236.7 L670.1,238.8 L668.7,240.8 L667.3,242.8 L666.0,244.9 L664.7,246.9 L663.4,248.9 L662.2,250.9 L660.9,252.9 L659.8,255.0 L658.6,257.0 L657.4,259.0 L656.3,261.0 L655.2,263.0 L654.2,265.0 L653.1,267.0 L652.1,269.0 L651.1,271.0 L650.1,273.0 L649.2,275.0 L648.3,277.0 L647.5,279.0 L646.7,281.0 L645.9,283.0 L645.1,285.0 L644.3,287.0 L643.5,289.0 L642.7,291.0 L641.9,293.0 L641.1,294.9 L640.3,296.9 L639.4,298.9 L638.5,300.9 L637.6,302.9 L636.6,304.8 L635.7,306.8 L634.8,308.8 L634.0,310.8 L633.3,312.8 L632.6,314.7 L631.9,316.7 L631.3,318.7 L630.7,320.7 L630.1,322.6 L629.6,324.6 L629.1,326.5 L628.6,328.5 L628.2,330.5 L627.8,332.4 L627.4,334.4 L627.0,336.3 L626.7,338.3 L626.3,340.3 L626.0,342.2 L625.7,344.2 L625.5,346.1 L625.3,348.1 L625.1,350.0 L624.9,352.0 L624.8,354.0 L624.7,355.9 L624.6,357.9 L624.5,359.8 L624.4,361.8 L624.3,363.7 L624.2,365.7 L624.2,367.7 L624.1,369.6 L624.1,371.6 L624.2,373.6 L624.3,375.6 L624.4,377.6 L624.5,379.6 L624.7,381.5 L624.8,383.5 L625.1,385.5 L625.4,387.5 L625.7,389.5 L626.1,391.5 L626.5,393.5 L626.9,395.5 L627.4,397.5 L627.9,399.5 L628.4,401.5 L628.9,403.5 L629.5,405.5 L630.2,407.5 L630.9,409.5 L631.7,411.5 L632.5,413.5 L633.4,415.5 L634.2,417.5 L635.1,419.5 L636.1,421.5 L637.0,423.5 L638.1,425.4 L639.3,427.4 L640.5,429.4 L641.8,431.4 L643.3,433.4 L645.0,435.4 L646.7,437.4 L648.5,439.4 L650.4,441.3 L652.3,443.3 L654.4,445.3 L656.5,447.3 L658.8,449.2 L661.2,451.2 L663.7,453.2 L666.2,455.1 L668.7,457.1 L671.2,459.0 L673.6,461.0 L676.0,462.9 L678.4,464.9 L680.8,466.8 L683.2,468.8 L685.7,470.7 L688.1,472.6 L690.6,474.6 L693.2,476.5 L695.7,478.4 L698.2,480.3 L700.6,482.2 L703.0,484.1 L705.3,486.0 L707.6,487.9 L709.9,489.7 L712.2,491.6 L714.5,493.4 L716.9,495.3 L719.3,497.1 L721.7,498.9 L724.1,500.8 L726.5,502.7 M726.5,166.0 L724.4,168.1 L722.4,170.3 L720.4,172.4 L718.4,174.6 L716.6,176.7 L714.8,178.8 L713.1,180.9 L711.4,183.0 L709.7,185.2 L708.0,187.3 L706.3,189.4 L704.7,191.5 L703.1,193.6 L701.5,195.7 L700.0,197.8 L698.4,199.9 L696.8,201.9 L695.3,204.0 L693.8,206.1 L692.3,208.2 L690.9,210.3 L689.4,212.3 L688.0,214.4 L686.6,216.5 L685.1,218.5 L683.7,220.6 L682.3,222.7 L680.9,224.7 L679.4,226.8 L678.0,228.8 L676.5,230.9 L675.0,232.9 L673.6,235.0 L672.1,237.0 L670.7,239.1 L669.3,241.1 L667.9,243.2 L666.5,245.2 L665.2,247.2 L664.0,249.2 L662.7,251.3 L661.5,253.3 L660.3,255.3 L659.2,257.3 L658.0,259.3 L656.9,261.3 L655.8,263.4 L654.7,265.4 L653.6,267.4 L652.6,269.4 L651.6,271.4 L650.7,273.4 L649.7,275.4 L648.8,277.4 L648.0,279.4 L647.1,281.4 L646.3,283.4 L645.5,285.4 L644.7,287.4 L644.0,289.4 L643.2,291.4 L642.4,293.3 L641.6,295.3 L640.7,297.3 L639.9,299.3 L638.9,301.3 L638.0,303.3 L637.0,305.2 L636.1,307.2 L635.2,309.2 L634.4,311.2 L633.7,313.1 L633.0,315.1 L632.3,317.1 L631.7,319.1 L631.1,321.0 L630.5,323.0 L629.9,325.0 L629.4,326.9 L629.0,328.9 L628.5,330.8 L628.1,332.8 L627.7,334.8 L627.3,336.7 L627.0,338.7 L626.6,340.6 L626.3,342.6 L626.0,344.5 L625.7,346.5 L625.5,348.4 L625.3,350.4 L625.2,352.3 L625.0,354.3 L624.9,356.2 L624.8,358.2 L624.7,360.1 L624.6,362.1 L624.5,364.0 L624.4,366.0 L624.4,367.9 L624.3,369.9 L624.3,371.9 L624.4,373.9 L624.5,375.9 L624.6,377.8 L624.7,379.8 L624.8,381.8 L625.0,383.8 L625.2,385.8 L625.5,387.8 L625.9,389.8 L626.2,391.8 L626.7,393.8 L627.1,395.8 L627.6,397.8 L628.0,399.8 L628.5,401.8 L629.1,403.8 L629.7,405.8 L630.4,407.8 L631.1,409.8 L631.9,411.8 L632.7,413.8 L633.5,415.8 L634.4,417.8 L635.3,419.8 L636.2,421.8 L637.2,423.8 L638.3,425.7 L639.4,427.7 L640.7,429.7 L642.0,431.7 L643.5,433.7 L645.1,435.7 L646.9,437.7 L648.7,439.7 L650.5,441.6 L652.5,443.6 L654.5,445.6 L656.6,447.6 L658.9,449.5 L661.3,451.5 L663.8,453.4 L666.3,455.4 L668.8,457.3 L671.3,459.3 L673.7,461.2 L676.1,463.2 L678.5,465.1 L680.9,467.1 L683.3,469.0 L685.8,470.9 L688.2,472.9 L690.7,474.8 L693.2,476.7 L695.8,478.6 L698.2,480.5 L700.7,482.4 L703.0,484.2 L705.3,486.1 L707.6,488.0 L709.9,489.8 L712.2,491.7 L714.6,493.5 L716.9,495.3 L719.3,497.1 L721.7,499.0 L724.1,500.8 L726.5,502.7 M726.5,166.0 L724.5,168.2 L722.5,170.3 L720.5,172.5 L718.7,174.6 L716.9,176.7 L715.1,178.9 L713.4,181.0 L711.7,183.1 L710.0,185.3 L708.4,187.4 L706.8,189.5 L705.2,191.6 L703.6,193.7 L702.0,195.8 L700.5,197.9 L698.9,200.0 L697.4,202.1 L695.9,204.2 L694.4,206.3 L692.9,208.4 L691.5,210.5 L690.0,212.6 L688.6,214.6 L687.2,216.7 L685.8,218.8 L684.3,220.9 L682.9,222.9 L681.5,225.0 L680.1,227.1 L678.6,229.1 L677.1,231.2 L675.7,233.2 L674.2,235.3 L672.8,237.3 L671.3,239.4 L669.9,241.4 L668.5,243.5 L667.2,245.5 L665.9,247.5 L664.6,249.6 L663.4,251.6 L662.2,253.6 L661.0,255.6 L659.8,257.7 L658.6,259.7 L657.5,261.7 L656.4,263.7 L655.3,265.7 L654.2,267.7 L653.2,269.7 L652.2,271.7 L651.2,273.7 L650.3,275.8 L649.4,277.8 L648.5,279.8 L647.7,281.8 L646.9,283.8 L646.1,285.8 L645.3,287.8 L644.5,289.8 L643.7,291.7 L642.9,293.7 L642.1,295.7 L641.2,297.7 L640.3,299.7 L639.4,301.7 L638.4,303.6 L637.5,305.6 L636.5,307.6 L635.6,309.6 L634.8,311.6 L634.1,313.5 L633.4,315.5 L632.7,317.5 L632.1,319.4 L631.5,321.4 L630.9,323.4 L630.3,325.3 L629.8,327.3 L629.3,329.3 L628.9,331.2 L628.5,333.2 L628.1,335.1 L627.7,337.1 L627.3,339.0 L626.9,341.0 L626.6,342.9 L626.3,344.9 L626.0,346.8 L625.8,348.8 L625.6,350.7 L625.5,352.7 L625.3,354.6 L625.2,356.5 L625.0,358.5 L624.9,360.4 L624.8,362.4 L624.7,364.3 L624.6,366.3 L624.6,368.2 L624.5,370.2 L624.5,372.2 L624.6,374.1 L624.7,376.1 L624.8,378.1 L624.9,380.1 L625.0,382.1 L625.2,384.1 L625.4,386.1 L625.7,388.1 L626.1,390.1 L626.4,392.1 L626.8,394.1 L627.3,396.1 L627.7,398.1 L628.2,400.1 L628.7,402.1 L629.3,404.1 L629.9,406.1 L630.5,408.1 L631.3,410.1 L632.0,412.1 L632.8,414.1 L633.7,416.1 L634.6,418.1 L635.5,420.1 L636.4,422.0 L637.4,424.0 L638.4,426.0 L639.6,428.0 L640.8,430.0 L642.2,432.0 L643.6,434.0 L645.3,436.0 L647.0,438.0 L648.8,440.0 L650.7,441.9 L652.6,443.9 L654.7,445.9 L656.8,447.8 L659.1,449.8 L661.5,451.8 L664.0,453.7 L666.5,455.7 L669.0,457.6 L671.4,459.6 L673.8,461.5 L676.2,463.4 L678.6,465.4 L681.0,467.3 L683.4,469.2 L685.9,471.2 L688.3,473.1 L690.8,475.0 L693.3,476.9 L695.8,478.8 L698.3,480.6 L700.7,482.5 L703.1,484.4 L705.4,486.3 L707.7,488.1 L709.9,490.0 L712.3,491.8 L714.6,493.6 L717.0,495.4 L719.3,497.2 L721.7,499.0 L724.1,500.8 L726.5,502.7 M726.5,166.0 L724.5,168.2 L722.6,170.3 L720.7,172.5 L718.9,174.6 L717.1,176.8 L715.4,178.9 L713.7,181.1 L712.1,183.2 L710.5,185.3 L708.8,187.5 L707.2,189.6 L705.7,191.7 L704.1,193.8 L702.6,196.0 L701.0,198.1 L699.5,200.2 L698.0,202.3 L696.5,204.4 L695.0,206.5 L693.6,208.6 L692.1,210.7 L690.7,212.8 L689.3,214.8 L687.8,216.9 L686.4,219.0 L685.0,221.1 L683.6,223.2 L682.2,225.2 L680.8,227.3 L679.3,229.4 L677.8,231.5 L676.4,233.5 L674.9,235.6 L673.5,237.6 L672.1,239.7 L670.7,241.7 L669.3,243.8 L667.9,245.8 L666.6,247.9 L665.3,249.9 L664.1,251.9 L662.9,254.0 L661.7,256.0 L660.5,258.0 L659.3,260.0 L658.2,262.0 L657.1,264.1 L656.0,266.1 L654.9,268.1 L653.9,270.1 L652.9,272.1 L651.9,274.1 L650.9,276.1 L650.0,278.1 L649.1,280.1 L648.3,282.1 L647.5,284.1 L646.6,286.1 L645.8,288.1 L645.0,290.1 L644.2,292.1 L643.4,294.1 L642.6,296.1 L641.7,298.1 L640.8,300.1 L639.9,302.0 L638.9,304.0 L638.0,306.0 L637.0,308.0 L636.1,310.0 L635.3,311.9 L634.5,313.9 L633.8,315.9 L633.2,317.9 L632.5,319.8 L631.9,321.8 L631.3,323.8 L630.7,325.7 L630.2,327.7 L629.7,329.6 L629.3,331.6 L628.8,333.5 L628.4,335.5 L628.0,337.4 L627.7,339.4 L627.3,341.3 L626.9,343.3 L626.6,345.2 L626.4,347.1 L626.1,349.1 L625.9,351.0 L625.8,353.0 L625.6,354.9 L625.5,356.9 L625.3,358.8 L625.2,360.7 L625.1,362.7 L625.0,364.6 L624.9,366.6 L624.8,368.5 L624.8,370.5 L624.8,372.4 L624.8,374.4 L624.9,376.4 L625.0,378.4 L625.1,380.4 L625.2,382.4 L625.4,384.4 L625.6,386.4 L625.9,388.4 L626.3,390.4 L626.6,392.4 L627.0,394.4 L627.5,396.4 L627.9,398.4 L628.4,400.4 L628.9,402.4 L629.5,404.4 L630.1,406.4 L630.7,408.4 L631.5,410.4 L632.2,412.4 L633.0,414.4 L633.9,416.3 L634.7,418.3 L635.6,420.3 L636.6,422.3 L637.6,424.3 L638.6,426.3 L639.8,428.3 L641.0,430.3 L642.3,432.3 L643.8,434.3 L645.5,436.3 L647.2,438.3 L649.0,440.2 L650.9,442.2 L652.8,444.2 L654.8,446.2 L657.0,448.1 L659.2,450.1 L661.6,452.0 L664.1,454.0 L666.6,455.9 L669.1,457.9 L671.6,459.8 L674.0,461.8 L676.4,463.7 L678.8,465.6 L681.2,467.6 L683.6,469.5 L686.0,471.4 L688.4,473.3 L690.9,475.2 L693.4,477.1 L695.9,479.0 L698.4,480.8 L700.8,482.7 L703.2,484.6 L705.5,486.4 L707.7,488.2 L710.0,490.1 L712.3,491.9 L714.6,493.7 L717.0,495.4 L719.4,497.2 L721.8,499.0 L724.1,500.9 L726.5,502.7 M726.5,166.0 L724.6,168.2 L722.7,170.3 L720.9,172.5 L719.1,174.7 L717.4,176.8 L715.8,179.0 L714.1,181.1 L712.5,183.3 L710.9,185.4 L709.3,187.6 L707.8,189.7 L706.2,191.8 L704.7,194.0 L703.2,196.1 L701.6,198.2 L700.1,200.3 L698.6,202.4 L697.1,204.5 L695.7,206.6 L694.2,208.8 L692.8,210.9 L691.4,212.9 L690.0,215.0 L688.6,217.1 L687.2,219.2 L685.8,221.3 L684.4,223.4 L682.9,225.5 L681.5,227.6 L680.1,229.6 L678.6,231.7 L677.2,233.8 L675.7,235.8 L674.3,237.9 L672.8,240.0 L671.4,242.0 L670.0,244.1 L668.7,246.1 L667.4,248.2 L666.1,250.2 L664.9,252.2 L663.6,254.3 L662.4,256.3 L661.2,258.3 L660.1,260.3 L658.9,262.4 L657.8,264.4 L656.7,266.4 L655.6,268.4 L654.6,270.4 L653.6,272.4 L652.6,274.4 L651.6,276.5 L650.7,278.5 L649.8,280.5 L648.9,282.5 L648.1,284.5 L647.3,286.5 L646.5,288.5 L645.6,290.5 L644.8,292.5 L644.0,294.5 L643.2,296.5 L642.3,298.5 L641.4,300.4 L640.5,302.4 L639.5,304.4 L638.5,306.4 L637.6,308.4 L636.7,310.3 L635.8,312.3 L635.1,314.3 L634.3,316.3 L633.7,318.2 L633.0,320.2 L632.4,322.2 L631.8,324.1 L631.2,326.1 L630.6,328.0 L630.1,330.0 L629.7,331.9 L629.3,333.9 L628.8,335.8 L628.4,337.8 L628.0,339.7 L627.7,341.6 L627.3,343.6 L627.0,345.5 L626.7,347.5 L626.5,349.4 L626.3,351.3 L626.1,353.3 L625.9,355.2 L625.8,357.2 L625.6,359.1 L625.5,361.1 L625.4,363.0 L625.3,364.9 L625.2,366.9 L625.1,368.8 L625.0,370.8 L625.0,372.7 L625.1,374.7 L625.1,376.7 L625.2,378.7 L625.3,380.7 L625.5,382.7 L625.6,384.7 L625.9,386.7 L626.1,388.7 L626.5,390.7 L626.8,392.7 L627.2,394.7 L627.7,396.7 L628.1,398.7 L628.6,400.7 L629.1,402.7 L629.7,404.6 L630.3,406.6 L630.9,408.6 L631.7,410.6 L632.4,412.6 L633.2,414.6 L634.1,416.6 L635.0,418.6 L635.8,420.6 L636.8,422.6 L637.8,424.6 L638.8,426.6 L640.0,428.6 L641.2,430.6 L642.5,432.6 L644.0,434.6 L645.7,436.6 L647.4,438.6 L649.2,440.5 L651.1,442.5 L653.0,444.5 L655.0,446.4 L657.2,448.4 L659.4,450.4 L661.8,452.3 L664.3,454.2 L666.8,456.2 L669.3,458.1 L671.7,460.1 L674.1,462.0 L676.5,463.9 L678.9,465.9 L681.3,467.8 L683.7,469.7 L686.1,471.6 L688.6,473.5 L691.1,475.4 L693.6,477.3 L696.0,479.1 L698.5,481.0 L700.9,482.9 L703.2,484.7 L705.5,486.5 L707.8,488.4 L710.1,490.2 L712.4,492.0 L714.7,493.8 L717.1,495.5 L719.4,497.3 L721.8,499.1 L724.1,500.9 L726.5,502.7 M726.5,166.0 L724.7,168.2 L722.9,170.4 L721.1,172.5 L719.4,174.7 L717.8,176.9 L716.1,179.0 L714.5,181.2 L713.0,183.3 L711.4,185.5 L709.8,187.6 L708.3,189.8 L706.8,191.9 L705.3,194.1 L703.8,196.2 L702.3,198.3 L700.8,200.4 L699.3,202.6 L697.9,204.7 L696.4,206.8 L695.0,208.9 L693.6,211.0 L692.2,213.1 L690.8,215.2 L689.4,217.3 L688.0,219.4 L686.6,221.5 L685.2,223.6 L683.8,225.7 L682.3,227.8 L680.9,229.9 L679.5,231.9 L678.0,234.0 L676.6,236.1 L675.1,238.2 L673.7,240.2 L672.3,242.3 L670.9,244.3 L669.5,246.4 L668.2,248.4 L666.9,250.5 L665.7,252.5 L664.5,254.6 L663.2,256.6 L662.1,258.6 L660.9,260.6 L659.7,262.7 L658.6,264.7 L657.5,266.7 L656.4,268.7 L655.4,270.7 L654.3,272.7 L653.3,274.8 L652.4,276.8 L651.4,278.8 L650.5,280.8 L649.6,282.8 L648.8,284.9 L648.0,286.9 L647.1,288.9 L646.3,290.9 L645.5,292.9 L644.6,294.8 L643.8,296.8 L642.9,298.8 L642.0,300.8 L641.1,302.8 L640.1,304.8 L639.1,306.8 L638.1,308.7 L637.2,310.7 L636.4,312.7 L635.6,314.7 L634.9,316.6 L634.2,318.6 L633.5,320.6 L632.9,322.5 L632.3,324.5 L631.7,326.4 L631.1,328.4 L630.6,330.3 L630.1,332.3 L629.7,334.2 L629.3,336.2 L628.9,338.1 L628.5,340.0 L628.1,342.0 L627.7,343.9 L627.4,345.9 L627.1,347.8 L626.8,349.7 L626.6,351.7 L626.4,353.6 L626.3,355.5 L626.1,357.5 L626.0,359.4 L625.8,361.3 L625.7,363.3 L625.6,365.2 L625.5,367.2 L625.4,369.1 L625.3,371.0 L625.3,373.0 L625.3,375.0 L625.4,377.0 L625.5,379.0 L625.6,381.0 L625.7,383.0 L625.9,385.0 L626.1,387.0 L626.4,389.0 L626.7,391.0 L627.1,393.0 L627.5,394.9 L627.9,396.9 L628.4,398.9 L628.8,400.9 L629.3,402.9 L629.9,404.9 L630.5,406.9 L631.2,408.9 L631.9,410.9 L632.7,412.9 L633.5,414.9 L634.3,416.9 L635.2,418.9 L636.1,420.9 L637.0,422.9 L638.0,424.9 L639.1,426.9 L640.2,428.9 L641.4,430.9 L642.8,432.9 L644.3,434.9 L645.9,436.9 L647.6,438.8 L649.4,440.8 L651.3,442.8 L653.2,444.8 L655.2,446.7 L657.4,448.7 L659.6,450.6 L662.0,452.6 L664.5,454.5 L667.0,456.5 L669.5,458.4 L671.9,460.3 L674.3,462.3 L676.7,464.2 L679.1,466.1 L681.5,468.0 L683.8,469.9 L686.3,471.8 L688.7,473.7 L691.2,475.6 L693.7,477.5 L696.2,479.3 L698.6,481.2 L701.0,483.0 L703.3,484.9 L705.6,486.7 L707.9,488.5 L710.1,490.3 L712.4,492.1 L714.7,493.9 L717.1,495.6 L719.5,497.3 L721.8,499.1 L724.2,500.9 L726.5,502.7 M726.5,166.0 L724.8,168.2 L723.0,170.4 L721.3,172.6 L719.7,174.7 L718.1,176.9 L716.5,179.1 L715.0,181.2 L713.4,183.4 L711.9,185.6 L710.4,187.7 L708.9,189.9 L707.4,192.0 L705.9,194.2 L704.5,196.3 L703.0,198.4 L701.5,200.6 L700.1,202.7 L698.6,204.8 L697.2,206.9 L695.8,209.1 L694.4,211.2 L693.0,213.3 L691.6,215.4 L690.2,217.5 L688.8,219.6 L687.4,221.7 L686.0,223.8 L684.6,225.9 L683.2,228.0 L681.8,230.1 L680.3,232.2 L678.9,234.2 L677.5,236.3 L676.0,238.4 L674.6,240.5 L673.2,242.5 L671.8,244.6 L670.5,246.6 L669.1,248.7 L667.8,250.8 L666.6,252.8 L665.4,254.8 L664.1,256.9 L662.9,258.9 L661.8,260.9 L660.6,263.0 L659.5,265.0 L658.4,267.0 L657.3,269.0 L656.2,271.0 L655.2,273.1 L654.1,275.1 L653.2,277.1 L652.2,279.1 L651.3,281.2 L650.4,283.2 L649.5,285.2 L648.7,287.2 L647.9,289.2 L647.0,291.2 L646.2,293.2 L645.3,295.2 L644.5,297.2 L643.6,299.2 L642.7,301.2 L641.7,303.1 L640.7,305.1 L639.7,307.1 L638.8,309.1 L637.8,311.1 L637.0,313.0 L636.2,315.0 L635.5,317.0 L634.8,319.0 L634.1,320.9 L633.4,322.9 L632.8,324.8 L632.2,326.8 L631.6,328.7 L631.1,330.7 L630.6,332.6 L630.2,334.6 L629.8,336.5 L629.3,338.4 L628.9,340.4 L628.5,342.3 L628.2,344.3 L627.8,346.2 L627.5,348.1 L627.2,350.1 L627.0,352.0 L626.8,353.9 L626.6,355.8 L626.5,357.8 L626.3,359.7 L626.2,361.6 L626.0,363.6 L625.9,365.5 L625.8,367.4 L625.7,369.4 L625.6,371.3 L625.6,373.3 L625.6,375.3 L625.7,377.3 L625.8,379.3 L625.9,381.3 L626.0,383.2 L626.2,385.2 L626.4,387.2 L626.7,389.2 L627.0,391.2 L627.3,393.2 L627.7,395.2 L628.2,397.2 L628.6,399.2 L629.1,401.2 L629.6,403.2 L630.1,405.2 L630.8,407.2 L631.4,409.2 L632.1,411.2 L632.9,413.2 L633.7,415.2 L634.5,417.2 L635.4,419.2 L636.3,421.2 L637.2,423.2 L638.2,425.2 L639.3,427.2 L640.5,429.2 L641.7,431.2 L643.0,433.2 L644.5,435.2 L646.1,437.2 L647.9,439.1 L649.7,441.1 L651.5,443.1 L653.4,445.0 L655.5,447.0 L657.6,449.0 L659.8,450.9 L662.2,452.8 L664.7,454.8 L667.2,456.7 L669.7,458.6 L672.1,460.6 L674.5,462.5 L676.9,464.4 L679.2,466.3 L681.6,468.3 L684.0,470.2 L686.4,472.1 L688.8,473.9 L691.3,475.8 L693.8,477.7 L696.3,479.5 L698.7,481.4 L701.1,483.2 L703.4,485.0 L705.7,486.8 L708.0,488.6 L710.2,490.4 L712.5,492.2 L714.8,493.9 L717.1,495.6 L719.5,497.3 L721.8,499.1 L724.2,500.9 L726.5,502.7 M726.5,166.0 L724.8,168.2 L723.2,170.4 L721.6,172.6 L720.0,174.8 L718.4,176.9 L716.9,179.1 L715.4,181.3 L713.9,183.5 L712.5,185.6 L711.0,187.8 L709.5,189.9 L708.1,192.1 L706.6,194.2 L705.2,196.4 L703.7,198.5 L702.3,200.7 L700.9,202.8 L699.5,204.9 L698.0,207.1 L696.6,209.2 L695.3,211.3 L693.9,213.4 L692.5,215.5 L691.1,217.7 L689.7,219.8 L688.4,221.9 L687.0,224.0 L685.6,226.1 L684.2,228.2 L682.7,230.3 L681.3,232.4 L679.9,234.5 L678.4,236.5 L677.0,238.6 L675.6,240.7 L674.2,242.8 L672.8,244.8 L671.4,246.9 L670.1,249.0 L668.8,251.0 L667.6,253.1 L666.3,255.1 L665.1,257.1 L663.9,259.2 L662.7,261.2 L661.5,263.2 L660.4,265.3 L659.3,267.3 L658.2,269.3 L657.1,271.3 L656.0,273.4 L655.0,275.4 L654.0,277.4 L653.1,279.5 L652.1,281.5 L651.2,283.5 L650.3,285.5 L649.5,287.5 L648.6,289.5 L647.8,291.5 L646.9,293.5 L646.1,295.5 L645.2,297.5 L644.3,299.5 L643.4,301.5 L642.4,303.5 L641.4,305.5 L640.4,307.5 L639.4,309.4 L638.5,311.4 L637.6,313.4 L636.8,315.4 L636.1,317.3 L635.4,319.3 L634.7,321.3 L634.0,323.3 L633.4,325.2 L632.8,327.2 L632.2,329.1 L631.7,331.0 L631.2,333.0 L630.7,334.9 L630.3,336.9 L629.8,338.8 L629.4,340.7 L629.0,342.6 L628.6,344.6 L628.3,346.5 L628.0,348.4 L627.7,350.4 L627.4,352.3 L627.2,354.2 L627.1,356.2 L626.9,358.1 L626.7,360.0 L626.5,361.9 L626.4,363.9 L626.2,365.8 L626.1,367.7 L626.0,369.7 L626.0,371.6 L625.9,373.6 L625.9,375.5 L626.0,377.5 L626.1,379.5 L626.2,381.5 L626.3,383.5 L626.4,385.5 L626.7,387.5 L626.9,389.5 L627.3,391.5 L627.6,393.5 L628.0,395.5 L628.4,397.5 L628.9,399.5 L629.4,401.5 L629.9,403.5 L630.4,405.5 L631.0,407.5 L631.7,409.5 L632.4,411.5 L633.2,413.5 L634.0,415.5 L634.8,417.5 L635.7,419.5 L636.6,421.5 L637.5,423.5 L638.5,425.5 L639.6,427.5 L640.7,429.5 L641.9,431.5 L643.3,433.5 L644.7,435.5 L646.4,437.4 L648.1,439.4 L649.9,441.4 L651.7,443.4 L653.7,445.3 L655.7,447.3 L657.8,449.2 L660.1,451.2 L662.5,453.1 L664.9,455.0 L667.4,457.0 L669.9,458.9 L672.3,460.8 L674.7,462.8 L677.1,464.7 L679.4,466.6 L681.8,468.5 L684.2,470.4 L686.6,472.3 L689.0,474.2 L691.5,476.0 L693.9,477.9 L696.4,479.7 L698.8,481.5 L701.2,483.4 L703.5,485.2 L705.8,487.0 L708.0,488.8 L710.3,490.5 L712.5,492.3 L714.9,494.0 L717.2,495.7 L719.5,497.4 L721.9,499.1 L724.2,500.9 L726.5,502.7 M726.5,166.0 L724.9,168.2 L723.4,170.4 L721.8,172.6 L720.3,174.8 L718.8,177.0 L717.4,179.1 L715.9,181.3 L714.5,183.5 L713.0,185.7 L711.6,187.8 L710.2,190.0 L708.8,192.1 L707.4,194.3 L706.0,196.5 L704.5,198.6 L703.1,200.8 L701.7,202.9 L700.3,205.0 L698.9,207.2 L697.6,209.3 L696.2,211.4 L694.8,213.6 L693.5,215.7 L692.1,217.8 L690.7,219.9 L689.3,222.0 L688.0,224.2 L686.6,226.3 L685.2,228.4 L683.7,230.5 L682.3,232.6 L680.9,234.7 L679.4,236.7 L678.0,238.8 L676.6,240.9 L675.2,243.0 L673.8,245.1 L672.5,247.1 L671.1,249.2 L669.8,251.2 L668.6,253.3 L667.3,255.4 L666.1,257.4 L664.9,259.4 L663.7,261.5 L662.5,263.5 L661.4,265.5 L660.2,267.6 L659.1,269.6 L658.0,271.6 L657.0,273.6 L655.9,275.7 L654.9,277.7 L654.0,279.8 L653.0,281.8 L652.1,283.8 L651.2,285.8 L650.3,287.8 L649.5,289.9 L648.6,291.9 L647.7,293.9 L646.9,295.9 L646.0,297.9 L645.1,299.9 L644.1,301.8 L643.2,303.8 L642.2,305.8 L641.2,307.8 L640.2,309.8 L639.2,311.8 L638.3,313.8 L637.5,315.7 L636.8,317.7 L636.0,319.7 L635.3,321.6 L634.6,323.6 L634.0,325.6 L633.4,327.5 L632.8,329.4 L632.2,331.4 L631.7,333.3 L631.3,335.3 L630.8,337.2 L630.4,339.1 L629.9,341.0 L629.5,343.0 L629.1,344.9 L628.8,346.8 L628.4,348.8 L628.1,350.7 L627.9,352.6 L627.7,354.5 L627.5,356.5 L627.3,358.4 L627.1,360.3 L626.9,362.2 L626.8,364.2 L626.6,366.1 L626.5,368.0 L626.4,369.9 L626.3,371.9 L626.3,373.8 L626.3,375.8 L626.3,377.8 L626.4,379.8 L626.5,381.8 L626.6,383.8 L626.8,385.8 L627.0,387.8 L627.2,389.8 L627.5,391.8 L627.9,393.8 L628.3,395.8 L628.7,397.8 L629.2,399.8 L629.6,401.8 L630.1,403.8 L630.7,405.8 L631.3,407.8 L632.0,409.8 L632.7,411.8 L633.4,413.8 L634.2,415.8 L635.1,417.8 L636.0,419.8 L636.8,421.8 L637.8,423.8 L638.8,425.8 L639.8,427.8 L641.0,429.8 L642.2,431.8 L643.5,433.8 L645.0,435.7 L646.6,437.7 L648.4,439.7 L650.2,441.7 L652.0,443.6 L653.9,445.6 L656.0,447.6 L658.1,449.5 L660.3,451.4 L662.7,453.4 L665.2,455.3 L667.6,457.2 L670.1,459.2 L672.5,461.1 L674.9,463.0 L677.3,464.9 L679.6,466.8 L682.0,468.7 L684.4,470.6 L686.8,472.5 L689.2,474.4 L691.6,476.2 L694.1,478.1 L696.5,479.9 L699.0,481.7 L701.3,483.5 L703.6,485.3 L705.9,487.1 L708.1,488.9 L710.4,490.6 L712.6,492.4 L714.9,494.1 L717.3,495.8 L719.6,497.4 L721.9,499.2 L724.2,500.9 L726.5,502.7 M726.5,166.0 L728.4,167.3 L730.3,168.7 L732.2,170.1 L734.1,171.5 L736.0,172.9 L737.9,174.4 L739.8,175.8 L741.7,177.3 L743.6,178.8 L745.5,180.3 L747.3,181.8 L749.2,183.3 L751.0,184.8 L752.9,186.3 L754.7,187.9 L756.5,189.4 L758.4,191.0 L760.2,192.5 L762.0,194.1 L763.8,195.6 L765.6,197.2 L767.3,198.8 L769.1,200.4 L770.8,202.0 L772.6,203.6 L774.3,205.1 L776.1,206.7 L777.8,208.3 L779.5,209.9 L781.2,211.5 L782.9,213.1 L784.5,214.7 L786.0,216.2 L787.6,217.8 L789.1,219.4 L790.5,221.0 L792.0,222.6 L793.3,224.2 L794.7,225.9 L796.1,227.5 L797.5,229.2 L798.8,230.8 L800.1,232.5 L801.4,234.2 L802.7,235.8 L803.9,237.5 L805.1,239.2 L806.2,240.9 L807.4,242.6 L808.4,244.3 L809.5,246.2 L810.8,248.4 L812.0,250.5 L813.2,252.8 L814.4,255.0 L815.6,257.2 L816.7,259.5 L817.7,261.7 L818.7,264.0 L819.6,266.3 L820.5,268.6 L821.2,270.9 L822.0,273.2 L822.6,275.5 L823.3,277.8 L823.9,280.1 L824.4,282.4 L825.0,284.8 L825.5,287.1 L826.0,289.5 L826.5,291.8 L827.0,294.2 L827.5,296.6 L828.1,299.1 L828.6,301.5 L829.2,304.0 L829.6,305.9 L830.0,307.8 L830.4,309.7 L830.7,311.7 L830.9,313.6 L831.1,315.6 L831.2,317.5 L831.2,319.4 L831.2,321.4 L831.1,323.3 L831.1,325.3 L831.0,327.2 L830.9,329.2 L830.8,331.2 L830.7,333.1 L830.6,335.1 L830.5,337.1 L830.4,339.1 L830.3,341.1 L830.1,343.0 L830.0,345.0 L829.8,347.0 L829.5,349.0 L829.3,351.0 L829.1,353.0 L828.8,355.0 L828.5,357.0 L828.2,359.0 L827.8,361.1 L827.3,363.1 L826.8,365.1 L826.2,367.1 L825.6,369.2 L825.0,371.2 L824.3,373.2 L823.5,375.3 L822.6,377.4 L821.7,379.4 L820.8,381.5 L819.8,383.6 L818.8,385.6 L817.8,387.7 L816.8,389.8 L815.8,391.9 L814.8,394.0 L813.8,396.1 L812.8,398.2 L811.8,400.3 L810.7,402.4 L809.7,404.6 L808.6,406.7 L807.5,408.8 L806.4,411.0 L805.2,413.1 L804.0,415.3 L802.8,417.5 L801.6,419.7 L800.4,421.9 L799.1,424.2 L797.7,426.4 L796.4,428.7 L794.9,430.9 L793.4,433.2 L791.9,435.5 L790.3,437.8 L788.7,440.1 L787.1,442.5 L785.6,444.8 L784.0,447.2 L782.4,449.5 L780.9,451.8 L779.3,454.1 L777.6,456.5 L775.9,458.8 L774.2,461.1 L772.4,463.4 L770.7,465.8 L768.8,468.1 L766.9,470.4 L764.8,472.8 L762.7,475.1 L760.3,477.4 L757.8,479.7 L755.2,482.0 L752.3,484.3 L749.2,486.6 L745.9,488.9 L741.9,491.2 L737.3,493.5 L733.3,495.8 L730.5,498.1 L728.2,500.4 L726.5,502.7 M726.5,166.0 L728.4,167.3 L730.3,168.7 L732.2,170.1 L734.1,171.5 L736.0,172.9 L737.9,174.4 L739.8,175.8 L741.7,177.3 L743.6,178.8 L745.5,180.3 L747.3,181.8 L749.2,183.3 L751.0,184.9 L752.9,186.4 L754.7,187.9 L756.5,189.5 L758.4,191.0 L760.2,192.6 L762.0,194.1 L763.8,195.7 L765.6,197.3 L767.3,198.9 L769.1,200.4 L770.8,202.0 L772.6,203.6 L774.3,205.2 L776.1,206.8 L777.8,208.4 L779.5,210.0 L781.2,211.6 L782.8,213.2 L784.5,214.7 L786.0,216.3 L787.6,217.9 L789.1,219.5 L790.5,221.1 L791.9,222.7 L793.3,224.3 L794.7,226.0 L796.1,227.6 L797.5,229.3 L798.8,230.9 L800.1,232.6 L801.4,234.3 L802.6,236.0 L803.9,237.6 L805.1,239.3 L806.2,241.0 L807.3,242.8 L808.4,244.5 L809.5,246.3 L810.8,248.5 L812.0,250.7 L813.2,252.9 L814.4,255.1 L815.6,257.4 L816.7,259.6 L817.7,261.9 L818.7,264.2 L819.6,266.5 L820.5,268.7 L821.2,271.0 L822.0,273.4 L822.6,275.7 L823.3,278.0 L823.9,280.3 L824.4,282.6 L825.0,284.9 L825.5,287.3 L826.0,289.6 L826.5,292.0 L827.0,294.4 L827.5,296.8 L828.1,299.2 L828.6,301.7 L829.2,304.1 L829.6,306.1 L830.0,308.0 L830.4,309.9 L830.7,311.8 L830.9,313.8 L831.1,315.7 L831.2,317.7 L831.2,319.6 L831.2,321.5 L831.1,323.5 L831.1,325.4 L831.0,327.4 L830.9,329.4 L830.8,331.3 L830.7,333.3 L830.6,335.3 L830.5,337.2 L830.4,339.2 L830.3,341.2 L830.1,343.2 L829.9,345.2 L829.7,347.2 L829.5,349.2 L829.3,351.2 L829.0,353.2 L828.8,355.2 L828.5,357.2 L828.1,359.3 L827.7,361.3 L827.3,363.3 L826.8,365.4 L826.2,367.4 L825.6,369.4 L825.0,371.5 L824.3,373.5 L823.5,375.6 L822.6,377.7 L821.7,379.7 L820.7,381.8 L819.8,383.9 L818.8,386.0 L817.8,388.1 L816.8,390.2 L815.8,392.3 L814.8,394.4 L813.8,396.5 L812.8,398.6 L811.7,400.7 L810.7,402.9 L809.6,405.0 L808.5,407.1 L807.4,409.3 L806.3,411.4 L805.2,413.6 L804.0,415.7 L802.8,417.9 L801.6,420.1 L800.3,422.4 L799.0,424.6 L797.7,426.9 L796.3,429.1 L794.9,431.4 L793.4,433.7 L791.8,435.9 L790.2,438.2 L788.6,440.6 L787.1,442.9 L785.5,445.2 L784.0,447.6 L782.4,449.9 L780.8,452.2 L779.2,454.5 L777.6,456.9 L775.9,459.2 L774.1,461.5 L772.4,463.8 L770.6,466.1 L768.8,468.4 L766.8,470.7 L764.8,473.1 L762.6,475.4 L760.3,477.7 L757.8,480.0 L755.1,482.2 L752.2,484.5 L749.2,486.8 L745.9,489.0 L741.9,491.3 L737.3,493.6 L733.3,495.8 L730.5,498.1 L728.2,500.4 L726.5,502.7 M726.5,166.0 L728.4,167.3 L730.3,168.7 L732.2,170.1 L734.1,171.5 L736.0,172.9 L737.9,174.4 L739.8,175.9 L741.7,177.3 L743.6,178.8 L745.5,180.3 L747.3,181.8 L749.2,183.4 L751.0,184.9 L752.9,186.4 L754.7,188.0 L756.5,189.5 L758.4,191.1 L760.2,192.6 L762.0,194.2 L763.8,195.8 L765.5,197.3 L767.3,198.9 L769.1,200.5 L770.8,202.1 L772.6,203.7 L774.3,205.3 L776.1,206.9 L777.8,208.5 L779.5,210.1 L781.2,211.7 L782.8,213.3 L784.5,214.8 L786.0,216.4 L787.6,218.0 L789.1,219.6 L790.5,221.2 L791.9,222.8 L793.3,224.4 L794.7,226.1 L796.1,227.7 L797.4,229.4 L798.8,231.0 L800.1,232.7 L801.4,234.4 L802.6,236.1 L803.9,237.8 L805.1,239.5 L806.2,241.2 L807.3,242.9 L808.4,244.6 L809.5,246.4 L810.8,248.6 L812.0,250.8 L813.2,253.0 L814.4,255.2 L815.5,257.5 L816.6,259.8 L817.7,262.0 L818.7,264.3 L819.6,266.6 L820.4,268.9 L821.2,271.2 L821.9,273.5 L822.6,275.8 L823.2,278.1 L823.8,280.4 L824.4,282.7 L825.0,285.1 L825.5,287.4 L826.0,289.8 L826.5,292.1 L827.0,294.5 L827.5,297.0 L828.1,299.4 L828.6,301.8 L829.2,304.3 L829.6,306.2 L830.0,308.1 L830.3,310.1 L830.6,312.0 L830.9,313.9 L831.1,315.9 L831.2,317.8 L831.2,319.8 L831.1,321.7 L831.1,323.7 L831.1,325.6 L831.0,327.6 L830.9,329.5 L830.8,331.5 L830.7,333.5 L830.6,335.4 L830.5,337.4 L830.4,339.4 L830.3,341.4 L830.1,343.4 L829.9,345.4 L829.7,347.4 L829.5,349.4 L829.3,351.4 L829.0,353.4 L828.7,355.5 L828.4,357.5 L828.1,359.5 L827.7,361.5 L827.2,363.6 L826.7,365.6 L826.2,367.7 L825.6,369.7 L824.9,371.8 L824.2,373.8 L823.4,375.9 L822.6,378.0 L821.7,380.1 L820.7,382.2 L819.7,384.2 L818.7,386.3 L817.7,388.4 L816.7,390.5 L815.7,392.6 L814.7,394.7 L813.7,396.9 L812.7,399.0 L811.7,401.1 L810.6,403.3 L809.6,405.4 L808.5,407.5 L807.4,409.7 L806.2,411.8 L805.1,414.0 L803.9,416.2 L802.7,418.4 L801.5,420.6 L800.2,422.8 L798.9,425.1 L797.6,427.3 L796.2,429.6 L794.8,431.8 L793.3,434.1 L791.7,436.4 L790.2,438.7 L788.6,441.0 L787.0,443.3 L785.4,445.7 L783.9,448.0 L782.3,450.3 L780.7,452.6 L779.1,454.9 L777.5,457.2 L775.8,459.6 L774.1,461.9 L772.3,464.2 L770.5,466.5 L768.7,468.8 L766.7,471.1 L764.7,473.4 L762.5,475.7 L760.2,477.9 L757.7,480.2 L755.1,482.5 L752.2,484.7 L749.1,487.0 L745.8,489.2 L741.9,491.4 L737.3,493.7 L733.3,495.9 L730.5,498.2 L728.2,500.4 L726.5,502.7 M726.5,166.0 L728.4,167.3 L730.3,168.7 L732.2,170.1 L734.1,171.5 L736.0,173.0 L737.9,174.4 L739.8,175.9 L741.7,177.4 L743.6,178.9 L745.5,180.4 L747.3,181.9 L749.2,183.4 L751.0,184.9 L752.8,186.5 L754.7,188.0 L756.5,189.6 L758.3,191.1 L760.2,192.7 L762.0,194.2 L763.8,195.8 L765.5,197.4 L767.3,199.0 L769.0,200.6 L770.8,202.2 L772.6,203.8 L774.3,205.4 L776.1,207.0 L777.8,208.6 L779.5,210.2 L781.2,211.7 L782.8,213.3 L784.4,214.9 L786.0,216.5 L787.6,218.1 L789.1,219.7 L790.5,221.3 L791.9,222.9 L793.3,224.6 L794.7,226.2 L796.1,227.8 L797.4,229.5 L798.8,231.2 L800.1,232.8 L801.4,234.5 L802.6,236.2 L803.8,237.9 L805.0,239.6 L806.2,241.3 L807.3,243.0 L808.4,244.7 L809.5,246.6 L810.7,248.7 L812.0,250.9 L813.2,253.2 L814.4,255.4 L815.5,257.6 L816.6,259.9 L817.7,262.2 L818.7,264.4 L819.6,266.7 L820.4,269.0 L821.2,271.3 L821.9,273.6 L822.6,276.0 L823.2,278.3 L823.8,280.6 L824.4,282.9 L824.9,285.2 L825.5,287.6 L826.0,289.9 L826.5,292.3 L827.0,294.7 L827.5,297.1 L828.0,299.5 L828.6,302.0 L829.2,304.4 L829.6,306.4 L830.0,308.3 L830.3,310.2 L830.6,312.2 L830.9,314.1 L831.0,316.0 L831.1,318.0 L831.1,319.9 L831.1,321.9 L831.1,323.8 L831.0,325.8 L831.0,327.7 L830.9,329.7 L830.8,331.7 L830.7,333.6 L830.6,335.6 L830.5,337.6 L830.4,339.6 L830.2,341.6 L830.1,343.6 L829.9,345.6 L829.7,347.6 L829.5,349.6 L829.2,351.6 L829.0,353.6 L828.7,355.7 L828.4,357.7 L828.1,359.8 L827.7,361.8 L827.2,363.8 L826.7,365.9 L826.1,367.9 L825.5,370.0 L824.9,372.1 L824.2,374.2 L823.4,376.2 L822.5,378.3 L821.6,380.4 L820.6,382.5 L819.6,384.6 L818.6,386.7 L817.6,388.8 L816.6,390.9 L815.6,393.0 L814.7,395.1 L813.7,397.3 L812.6,399.4 L811.6,401.5 L810.5,403.7 L809.5,405.8 L808.4,408.0 L807.3,410.1 L806.1,412.3 L805.0,414.4 L803.8,416.6 L802.6,418.8 L801.4,421.0 L800.1,423.3 L798.8,425.5 L797.5,427.8 L796.1,430.0 L794.7,432.3 L793.2,434.6 L791.6,436.8 L790.0,439.1 L788.5,441.5 L786.9,443.8 L785.3,446.1 L783.8,448.4 L782.2,450.7 L780.6,453.0 L779.0,455.3 L777.4,457.6 L775.7,459.9 L773.9,462.2 L772.2,464.5 L770.4,466.8 L768.6,469.1 L766.6,471.4 L764.6,473.7 L762.4,475.9 L760.1,478.2 L757.6,480.5 L755.0,482.7 L752.1,484.9 L749.0,487.1 L745.8,489.4 L741.8,491.6 L737.3,493.8 L733.3,496.0 L730.5,498.2 L728.2,500.4 L726.5,502.7 M726.5,166.0 L728.4,167.4 L730.3,168.7 L732.2,170.1 L734.1,171.5 L736.0,173.0 L737.9,174.4 L739.8,175.9 L741.7,177.4 L743.6,178.9 L745.4,180.4 L747.3,181.9 L749.2,183.4 L751.0,185.0 L752.8,186.5 L754.7,188.1 L756.5,189.6 L758.3,191.2 L760.2,192.7 L762.0,194.3 L763.8,195.9 L765.5,197.5 L767.3,199.1 L769.0,200.6 L770.8,202.2 L772.6,203.8 L774.3,205.4 L776.1,207.0 L777.8,208.6 L779.5,210.2 L781.2,211.8 L782.8,213.4 L784.4,215.0 L786.0,216.6 L787.5,218.2 L789.0,219.8 L790.5,221.4 L791.9,223.0 L793.3,224.7 L794.7,226.3 L796.1,227.9 L797.4,229.6 L798.7,231.3 L800.1,232.9 L801.3,234.6 L802.6,236.3 L803.8,238.0 L805.0,239.7 L806.2,241.4 L807.3,243.1 L808.4,244.8 L809.5,246.7 L810.7,248.9 L812.0,251.1 L813.2,253.3 L814.4,255.5 L815.5,257.8 L816.6,260.0 L817.6,262.3 L818.6,264.6 L819.6,266.9 L820.4,269.2 L821.2,271.5 L821.9,273.8 L822.6,276.1 L823.2,278.4 L823.8,280.7 L824.4,283.0 L824.9,285.4 L825.4,287.7 L825.9,290.1 L826.4,292.4 L826.9,294.9 L827.5,297.3 L828.0,299.7 L828.6,302.1 L829.1,304.6 L829.5,306.5 L829.9,308.5 L830.3,310.4 L830.6,312.3 L830.8,314.3 L831.0,316.2 L831.1,318.1 L831.1,320.1 L831.1,322.0 L831.1,324.0 L831.0,325.9 L830.9,327.9 L830.9,329.9 L830.8,331.8 L830.7,333.8 L830.6,335.8 L830.5,337.7 L830.3,339.8 L830.2,341.8 L830.0,343.8 L829.9,345.8 L829.7,347.8 L829.4,349.8 L829.2,351.8 L828.9,353.9 L828.6,355.9 L828.3,357.9 L828.0,360.0 L827.6,362.0 L827.1,364.1 L826.6,366.2 L826.0,368.2 L825.4,370.3 L824.8,372.4 L824.1,374.5 L823.3,376.5 L822.4,378.6 L821.5,380.7 L820.5,382.8 L819.5,384.9 L818.5,387.0 L817.5,389.1 L816.5,391.3 L815.5,393.4 L814.6,395.5 L813.5,397.6 L812.5,399.8 L811.5,401.9 L810.4,404.1 L809.4,406.2 L808.3,408.4 L807.2,410.5 L806.0,412.7 L804.9,414.9 L803.7,417.1 L802.5,419.3 L801.3,421.5 L800.0,423.7 L798.7,426.0 L797.4,428.2 L796.0,430.5 L794.5,432.7 L793.0,435.0 L791.5,437.3 L789.9,439.6 L788.3,441.9 L786.7,444.2 L785.2,446.5 L783.6,448.9 L782.1,451.2 L780.5,453.5 L778.9,455.8 L777.2,458.0 L775.5,460.3 L773.8,462.6 L772.0,464.9 L770.3,467.2 L768.4,469.4 L766.5,471.7 L764.5,474.0 L762.3,476.2 L760.0,478.5 L757.5,480.7 L754.8,482.9 L752.0,485.1 L748.9,487.3 L745.7,489.5 L741.8,491.7 L737.2,493.9 L733.2,496.0 L730.4,498.3 L728.2,500.5 L726.5,502.7 M726.5,166.0 L728.4,167.4 L730.3,168.7 L732.2,170.1 L734.1,171.5 L736.0,173.0 L737.9,174.5 L739.8,175.9 L741.7,177.4 L743.6,178.9 L745.4,180.4 L747.3,182.0 L749.1,183.5 L751.0,185.0 L752.8,186.6 L754.7,188.1 L756.5,189.7 L758.3,191.2 L760.1,192.8 L762.0,194.4 L763.7,195.9 L765.5,197.5 L767.3,199.1 L769.0,200.7 L770.8,202.3 L772.5,203.9 L774.3,205.5 L776.0,207.1 L777.8,208.7 L779.5,210.3 L781.1,211.9 L782.8,213.5 L784.4,215.1 L786.0,216.7 L787.5,218.3 L789.0,219.9 L790.5,221.5 L791.9,223.1 L793.3,224.8 L794.7,226.4 L796.0,228.1 L797.4,229.7 L798.7,231.4 L800.0,233.1 L801.3,234.7 L802.6,236.4 L803.8,238.1 L805.0,239.8 L806.1,241.5 L807.3,243.3 L808.3,245.0 L809.4,246.8 L810.7,249.0 L811.9,251.2 L813.1,253.4 L814.3,255.7 L815.5,257.9 L816.6,260.2 L817.6,262.4 L818.6,264.7 L819.5,267.0 L820.4,269.3 L821.1,271.6 L821.9,273.9 L822.5,276.2 L823.2,278.6 L823.8,280.9 L824.3,283.2 L824.9,285.5 L825.4,287.9 L825.9,290.2 L826.4,292.6 L826.9,295.0 L827.4,297.4 L828.0,299.9 L828.5,302.3 L829.1,304.7 L829.5,306.7 L829.9,308.6 L830.2,310.5 L830.6,312.5 L830.8,314.4 L831.0,316.4 L831.1,318.3 L831.1,320.2 L831.1,322.2 L831.0,324.1 L831.0,326.1 L830.9,328.1 L830.8,330.0 L830.7,332.0 L830.6,334.0 L830.5,335.9 L830.4,337.9 L830.3,339.9 L830.2,341.9 L830.0,344.0 L829.8,346.0 L829.6,348.0 L829.4,350.0 L829.1,352.1 L828.9,354.1 L828.6,356.1 L828.3,358.2 L827.9,360.2 L827.5,362.3 L827.0,364.4 L826.5,366.4 L826.0,368.5 L825.4,370.6 L824.7,372.7 L824.0,374.8 L823.2,376.9 L822.3,379.0 L821.4,381.1 L820.4,383.2 L819.4,385.3 L818.4,387.4 L817.4,389.5 L816.4,391.6 L815.4,393.8 L814.4,395.9 L813.4,398.0 L812.4,400.2 L811.4,402.3 L810.3,404.5 L809.2,406.6 L808.1,408.8 L807.0,411.0 L805.9,413.1 L804.7,415.3 L803.5,417.5 L802.3,419.7 L801.1,421.9 L799.8,424.2 L798.5,426.4 L797.2,428.7 L795.8,430.9 L794.4,433.2 L792.9,435.5 L791.3,437.7 L789.7,440.0 L788.1,442.4 L786.6,444.7 L785.0,447.0 L783.4,449.3 L781.9,451.6 L780.3,453.9 L778.7,456.2 L777.1,458.4 L775.4,460.7 L773.6,463.0 L771.9,465.3 L770.1,467.5 L768.2,469.8 L766.3,472.0 L764.3,474.3 L762.1,476.5 L759.8,478.8 L757.4,481.0 L754.7,483.2 L751.9,485.3 L748.8,487.5 L745.6,489.7 L741.7,491.8 L737.2,494.0 L733.2,496.1 L730.4,498.3 L728.1,500.5 L726.5,502.7 M726.5,166.0 L728.4,167.4 L730.3,168.7 L732.2,170.1 L734.1,171.6 L736.0,173.0 L737.9,174.5 L739.8,176.0 L741.7,177.4 L743.6,179.0 L745.4,180.5 L747.3,182.0 L749.1,183.5 L751.0,185.1 L752.8,186.6 L754.7,188.1 L756.5,189.7 L758.3,191.3 L760.1,192.8 L761.9,194.4 L763.7,196.0 L765.5,197.6 L767.2,199.2 L769.0,200.8 L770.8,202.4 L772.5,204.0 L774.3,205.6 L776.0,207.2 L777.7,208.8 L779.4,210.4 L781.1,212.0 L782.8,213.6 L784.4,215.2 L786.0,216.8 L787.5,218.4 L789.0,220.0 L790.4,221.6 L791.9,223.2 L793.2,224.9 L794.6,226.5 L796.0,228.2 L797.4,229.8 L798.7,231.5 L800.0,233.2 L801.3,234.9 L802.5,236.5 L803.8,238.2 L805.0,239.9 L806.1,241.7 L807.2,243.4 L808.3,245.1 L809.4,247.0 L810.7,249.1 L811.9,251.3 L813.1,253.6 L814.3,255.8 L815.4,258.0 L816.5,260.3 L817.6,262.6 L818.6,264.9 L819.5,267.2 L820.3,269.5 L821.1,271.8 L821.8,274.1 L822.5,276.4 L823.1,278.7 L823.7,281.0 L824.3,283.3 L824.8,285.7 L825.4,288.0 L825.9,290.4 L826.4,292.8 L826.9,295.2 L827.4,297.6 L827.9,300.0 L828.5,302.5 L829.0,304.9 L829.5,306.9 L829.9,308.8 L830.2,310.7 L830.5,312.6 L830.8,314.6 L830.9,316.5 L831.0,318.5 L831.0,320.4 L831.0,322.4 L831.0,324.3 L830.9,326.3 L830.9,328.2 L830.8,330.2 L830.7,332.1 L830.6,334.1 L830.5,336.1 L830.4,338.1 L830.3,340.1 L830.1,342.1 L829.9,344.1 L829.8,346.2 L829.5,348.2 L829.3,350.2 L829.1,352.3 L828.8,354.3 L828.5,356.3 L828.2,358.4 L827.9,360.5 L827.4,362.6 L827.0,364.6 L826.4,366.7 L825.9,368.8 L825.2,370.9 L824.6,373.0 L823.9,375.1 L823.1,377.2 L822.2,379.3 L821.3,381.4 L820.3,383.5 L819.3,385.6 L818.3,387.7 L817.3,389.9 L816.3,392.0 L815.3,394.1 L814.3,396.3 L813.3,398.4 L812.2,400.6 L811.2,402.7 L810.1,404.9 L809.1,407.1 L808.0,409.2 L806.8,411.4 L805.7,413.6 L804.5,415.8 L803.4,418.0 L802.2,420.2 L800.9,422.4 L799.6,424.6 L798.3,426.9 L797.0,429.1 L795.6,431.4 L794.2,433.7 L792.7,435.9 L791.1,438.2 L789.5,440.5 L787.9,442.8 L786.3,445.1 L784.8,447.4 L783.2,449.7 L781.7,452.0 L780.1,454.3 L778.5,456.6 L776.8,458.9 L775.1,461.1 L773.4,463.4 L771.7,465.6 L769.9,467.9 L768.0,470.1 L766.1,472.4 L764.1,474.6 L761.9,476.8 L759.6,479.0 L757.2,481.2 L754.5,483.4 L751.7,485.6 L748.7,487.7 L745.5,489.9 L741.6,492.0 L737.1,494.1 L733.2,496.2 L730.4,498.3 L728.1,500.5 L726.5,502.7 M726.5,166.0 L728.4,167.4 L730.3,168.7 L732.2,170.1 L734.1,171.6 L736.0,173.0 L737.9,174.5 L739.8,176.0 L741.7,177.5 L743.6,179.0 L745.4,180.5 L747.3,182.0 L749.1,183.6 L751.0,185.1 L752.8,186.6 L754.6,188.2 L756.5,189.8 L758.3,191.3 L760.1,192.9 L761.9,194.5 L763.7,196.1 L765.5,197.6 L767.2,199.2 L769.0,200.9 L770.7,202.5 L772.5,204.1 L774.3,205.7 L776.0,207.3 L777.7,208.9 L779.4,210.5 L781.1,212.1 L782.7,213.7 L784.3,215.3 L785.9,216.9 L787.5,218.5 L789.0,220.1 L790.4,221.7 L791.8,223.3 L793.2,225.0 L794.6,226.6 L796.0,228.3 L797.3,229.9 L798.7,231.6 L800.0,233.3 L801.2,235.0 L802.5,236.7 L803.7,238.4 L804.9,240.1 L806.1,241.8 L807.2,243.5 L808.3,245.2 L809.4,247.1 L810.6,249.3 L811.9,251.5 L813.1,253.7 L814.2,255.9 L815.4,258.2 L816.5,260.4 L817.5,262.7 L818.5,265.0 L819.4,267.3 L820.3,269.6 L821.1,271.9 L821.8,274.2 L822.4,276.5 L823.1,278.9 L823.7,281.2 L824.2,283.5 L824.8,285.8 L825.3,288.2 L825.8,290.5 L826.3,292.9 L826.8,295.3 L827.3,297.7 L827.9,300.2 L828.4,302.6 L829.0,305.1 L829.4,307.0 L829.8,308.9 L830.2,310.9 L830.5,312.8 L830.7,314.7 L830.9,316.7 L831.0,318.6 L831.0,320.6 L831.0,322.5 L830.9,324.5 L830.9,326.4 L830.8,328.4 L830.7,330.3 L830.6,332.3 L830.5,334.3 L830.4,336.3 L830.3,338.2 L830.2,340.3 L830.1,342.3 L829.9,344.3 L829.7,346.4 L829.5,348.4 L829.2,350.4 L829.0,352.5 L828.7,354.5 L828.4,356.6 L828.1,358.6 L827.8,360.7 L827.3,362.8 L826.9,364.9 L826.3,367.0 L825.7,369.1 L825.1,371.2 L824.5,373.3 L823.7,375.4 L822.9,377.5 L822.1,379.6 L821.1,381.7 L820.1,383.8 L819.1,386.0 L818.1,388.1 L817.1,390.2 L816.1,392.4 L815.1,394.5 L814.1,396.7 L813.1,398.8 L812.1,401.0 L811.0,403.2 L809.9,405.3 L808.9,407.5 L807.8,409.7 L806.6,411.8 L805.5,414.0 L804.3,416.2 L803.2,418.4 L801.9,420.6 L800.7,422.9 L799.4,425.1 L798.1,427.3 L796.8,429.6 L795.4,431.9 L793.9,434.1 L792.4,436.4 L790.9,438.7 L789.3,440.9 L787.7,443.2 L786.1,445.5 L784.5,447.9 L783.0,450.2 L781.4,452.4 L779.8,454.7 L778.2,457.0 L776.6,459.3 L774.9,461.5 L773.2,463.8 L771.4,466.0 L769.6,468.2 L767.8,470.5 L765.9,472.7 L763.9,474.9 L761.7,477.1 L759.4,479.3 L757.0,481.5 L754.3,483.6 L751.5,485.8 L748.5,487.9 L745.3,490.0 L741.5,492.1 L737.0,494.2 L733.1,496.3 L730.4,498.4 L728.1,500.5 L726.5,502.7 M735.6,172.6 L735.6,172.7 L735.5,172.8 L735.4,173.0 L735.3,173.1 L735.2,173.3 L735.0,173.4 L734.7,173.6 L734.5,173.7 L734.2,173.9 L733.8,174.1 L733.5,174.2 L733.1,174.4 L732.7,174.5 L732.2,174.7 L731.7,174.9 L731.2,175.0 L730.7,175.1 L730.1,175.3 L729.6,175.4 L729.0,175.6 L728.4,175.7 L727.8,175.8 L727.1,175.9 L726.5,176.0 L725.9,176.1 L725.2,176.2 L724.6,176.2 L723.9,176.3 L723.3,176.4 L722.6,176.4 L722.0,176.4 L721.4,176.5 L720.8,176.5 L720.3,176.5 L719.7,176.5 L719.2,176.5 L718.7,176.4 L718.3,176.4 L717.9,176.4 L717.5,176.3 L717.1,176.2 L716.8,176.1 L716.6,176.1 L716.4,176.0 L716.2,175.9 L716.1,175.8 L716.0,175.6 L716.0,175.5 M748.1,182.4 L748.1,182.7 L747.9,183.0 L747.7,183.3 L747.4,183.6 L747.0,184.0 L746.5,184.3 L745.9,184.7 L745.3,185.0 L744.5,185.4 L743.7,185.7 L742.8,186.1 L741.9,186.4 L740.9,186.8 L739.8,187.1 L738.6,187.5 L737.4,187.8 L736.2,188.1 L734.9,188.4 L733.6,188.7 L732.2,189.0 L730.8,189.3 L729.4,189.5 L727.9,189.8 L726.5,190.0 L725.0,190.2 L723.6,190.4 L722.2,190.5 L720.7,190.7 L719.3,190.8 L717.9,190.9 L716.6,191.0 L715.3,191.0 L714.0,191.0 L712.8,191.0 L711.6,191.0 L710.5,191.0 L709.5,190.9 L708.5,190.8 L707.7,190.7 L706.9,190.5 L706.1,190.4 L705.5,190.2 L705.0,190.0 L704.5,189.8 L704.2,189.6 L703.9,189.3 L703.8,189.0 L703.7,188.8 M764.5,196.2 L764.5,196.7 L764.2,197.3 L763.8,197.8 L763.2,198.4 L762.5,198.9 L761.6,199.5 L760.6,200.1 L759.4,200.7 L758.1,201.3 L756.6,201.9 L755.0,202.5 L753.3,203.1 L751.5,203.7 L749.6,204.3 L747.5,204.8 L745.4,205.4 L743.2,205.9 L741.0,206.4 L738.6,206.9 L736.3,207.4 L733.9,207.8 L731.4,208.3 L729.0,208.6 L726.5,209.0 L724.0,209.3 L721.6,209.6 L719.2,209.9 L716.8,210.1 L714.4,210.3 L712.1,210.4 L709.9,210.5 L707.8,210.6 L705.7,210.6 L703.7,210.6 L701.8,210.6 L700.1,210.5 L698.4,210.4 L696.9,210.2 L695.4,210.0 L694.2,209.8 L693.0,209.5 L692.0,209.2 L691.2,208.8 L690.5,208.5 L689.9,208.1 L689.5,207.6 L689.3,207.2 L689.2,206.7 M780.3,210.5 L780.1,211.2 L779.8,211.9 L779.2,212.7 L778.4,213.5 L777.3,214.2 L776.1,215.0 L774.6,215.9 L772.9,216.7 L771.0,217.5 L768.9,218.3 L766.6,219.1 L764.2,220.0 L761.6,220.8 L758.8,221.5 L756.0,222.3 L753.0,223.1 L749.9,223.8 L746.7,224.5 L743.4,225.2 L740.1,225.8 L736.7,226.4 L733.3,227.0 L729.9,227.5 L726.5,228.0 L723.1,228.4 L719.7,228.8 L716.4,229.2 L713.1,229.5 L709.9,229.7 L706.8,229.9 L703.8,230.0 L700.9,230.1 L698.1,230.2 L695.4,230.1 L692.9,230.1 L690.5,229.9 L688.3,229.8 L686.2,229.5 L684.3,229.2 L682.6,228.9 L681.1,228.5 L679.8,228.1 L678.7,227.6 L677.7,227.1 L677.0,226.5 L676.5,225.9 L676.2,225.3 L676.1,224.6 M794.8,225.8 L794.6,226.7 L794.2,227.6 L793.4,228.5 L792.4,229.5 L791.0,230.5 L789.4,231.5 L787.5,232.6 L785.4,233.6 L783.0,234.7 L780.3,235.7 L777.4,236.7 L774.3,237.8 L771.0,238.8 L767.6,239.8 L763.9,240.8 L760.1,241.7 L756.2,242.7 L752.1,243.6 L748.0,244.4 L743.8,245.2 L739.5,246.0 L735.2,246.7 L730.8,247.4 L726.5,248.0 L722.2,248.6 L717.9,249.1 L713.7,249.5 L709.5,249.9 L705.4,250.2 L701.5,250.4 L697.6,250.6 L693.9,250.7 L690.4,250.8 L687.0,250.7 L683.8,250.6 L680.8,250.5 L677.9,250.2 L675.3,249.9 L672.9,249.6 L670.8,249.2 L668.8,248.7 L667.2,248.1 L665.7,247.5 L664.5,246.9 L663.6,246.1 L663.0,245.4 L662.6,244.6 L662.4,243.7 M807.0,241.9 L806.8,243.0 L806.3,244.1 L805.4,245.2 L804.2,246.3 L802.6,247.5 L800.7,248.7 L798.4,249.9 L795.9,251.1 L793.0,252.3 L789.9,253.6 L786.5,254.8 L782.9,256.0 L779.0,257.2 L774.9,258.4 L770.5,259.5 L766.1,260.7 L761.4,261.7 L756.7,262.8 L751.8,263.8 L746.8,264.7 L741.8,265.7 L736.7,266.5 L731.6,267.3 L726.5,268.0 L721.4,268.7 L716.4,269.2 L711.4,269.8 L706.5,270.2 L701.8,270.6 L697.1,270.8 L692.6,271.0 L688.3,271.2 L684.1,271.2 L680.1,271.2 L676.4,271.1 L672.8,270.9 L669.5,270.6 L666.5,270.3 L663.7,269.8 L661.2,269.3 L658.9,268.8 L656.9,268.1 L655.3,267.4 L653.9,266.6 L652.8,265.8 L652.0,264.9 L651.6,264.0 L651.4,263.0 M816.8,259.6 L816.6,260.8 L816.0,262.0 L815.0,263.2 L813.6,264.4 L811.8,265.7 L809.7,267.0 L807.1,268.3 L804.3,269.6 L801.0,270.9 L797.5,272.2 L793.7,273.5 L789.5,274.8 L785.2,276.1 L780.5,277.3 L775.7,278.5 L770.7,279.6 L765.5,280.8 L760.1,281.8 L754.7,282.8 L749.1,283.8 L743.5,284.7 L737.8,285.5 L732.2,286.3 L726.5,287.0 L720.9,287.6 L715.3,288.2 L709.8,288.6 L704.4,289.0 L699.1,289.3 L694.0,289.5 L689.0,289.7 L684.3,289.7 L679.7,289.7 L675.3,289.6 L671.2,289.4 L667.3,289.1 L663.7,288.7 L660.4,288.2 L657.3,287.7 L654.6,287.1 L652.1,286.4 L650.0,285.7 L648.1,284.8 L646.6,283.9 L645.5,283.0 L644.6,282.0 L644.1,280.9 L644.0,279.8 M823.5,278.6 L823.3,279.8 L822.6,281.1 L821.6,282.3 L820.1,283.7 L818.2,285.0 L815.8,286.3 L813.1,287.7 L810.0,289.0 L806.6,290.4 L802.8,291.7 L798.7,293.0 L794.3,294.3 L789.6,295.5 L784.6,296.8 L779.4,297.9 L774.0,299.1 L768.4,300.2 L762.7,301.2 L756.8,302.2 L750.8,303.1 L744.8,303.9 L738.7,304.7 L732.6,305.4 L726.5,306.0 L720.4,306.5 L714.4,307.0 L708.5,307.4 L702.7,307.7 L697.0,307.9 L691.5,308.0 L686.2,308.0 L681.0,307.9 L676.1,307.8 L671.4,307.5 L666.9,307.2 L662.8,306.8 L658.9,306.3 L655.3,305.7 L652.0,305.1 L649.0,304.4 L646.3,303.6 L644.0,302.7 L642.0,301.8 L640.4,300.8 L639.2,299.7 L638.3,298.6 L637.7,297.4 L637.5,296.3 M828.1,299.0 L827.9,300.3 L827.2,301.6 L826.1,303.0 L824.5,304.4 L822.6,305.7 L820.2,307.1 L817.4,308.5 L814.2,309.8 L810.6,311.2 L806.6,312.5 L802.4,313.8 L797.8,315.1 L792.9,316.3 L787.7,317.5 L782.2,318.6 L776.6,319.7 L770.7,320.8 L764.7,321.7 L758.5,322.6 L752.3,323.5 L745.9,324.2 L739.4,324.9 L733.0,325.5 L726.5,326.0 L720.1,326.4 L713.7,326.8 L707.3,327.0 L701.1,327.2 L695.0,327.3 L689.1,327.3 L683.4,327.2 L677.8,327.0 L672.5,326.7 L667.4,326.3 L662.6,325.9 L658.1,325.3 L653.8,324.7 L649.9,324.0 L646.3,323.2 L643.1,322.4 L640.2,321.5 L637.7,320.5 L635.5,319.5 L633.7,318.4 L632.3,317.2 L631.3,316.0 L630.8,314.8 L630.6,313.5 M831.2,316.5 L830.9,317.9 L830.2,319.3 L829.1,320.7 L827.5,322.1 L825.5,323.5 L823.0,324.9 L820.2,326.3 L816.9,327.7 L813.2,329.1 L809.2,330.4 L804.8,331.8 L800.0,333.1 L795.0,334.3 L789.7,335.5 L784.1,336.7 L778.3,337.8 L772.2,338.8 L766.0,339.8 L759.6,340.7 L753.1,341.5 L746.6,342.2 L739.9,342.9 L733.2,343.5 L726.5,344.0 L719.8,344.4 L713.2,344.7 L706.6,345.0 L700.2,345.1 L693.8,345.2 L687.7,345.1 L681.7,345.0 L675.9,344.8 L670.3,344.4 L665.0,344.0 L660.0,343.5 L655.3,343.0 L650.8,342.3 L646.7,341.5 L643.0,340.7 L639.6,339.8 L636.5,338.9 L633.9,337.8 L631.6,336.7 L629.8,335.6 L628.3,334.4 L627.3,333.1 L626.6,331.9 L626.4,330.5 M830.7,333.2 L830.5,334.5 L829.8,335.9 L828.7,337.3 L827.2,338.8 L825.2,340.2 L822.7,341.6 L819.9,343.1 L816.7,344.5 L813.0,345.9 L809.0,347.2 L804.7,348.6 L800.0,349.9 L795.0,351.1 L789.7,352.4 L784.2,353.5 L778.4,354.6 L772.4,355.7 L766.2,356.7 L759.8,357.6 L753.3,358.4 L746.7,359.2 L740.0,359.9 L733.3,360.5 L726.5,361.0 L719.7,361.4 L713.0,361.8 L706.4,362.0 L699.8,362.2 L693.4,362.2 L687.1,362.2 L681.0,362.0 L675.1,361.8 L669.4,361.5 L664.0,361.1 L658.8,360.6 L653.9,360.0 L649.4,359.3 L645.1,358.6 L641.3,357.8 L637.7,356.9 L634.6,355.9 L631.9,354.9 L629.5,353.8 L627.6,352.6 L626.1,351.4 L625.0,350.1 L624.3,348.8 L624.1,347.5 M829.5,349.2 L829.3,350.5 L828.6,351.9 L827.5,353.3 L826.0,354.8 L824.0,356.2 L821.7,357.6 L818.9,359.0 L815.7,360.4 L812.2,361.8 L808.2,363.2 L804.0,364.6 L799.3,365.9 L794.4,367.1 L789.2,368.3 L783.7,369.5 L778.0,370.6 L772.1,371.7 L765.9,372.7 L759.6,373.6 L753.2,374.4 L746.6,375.2 L739.9,375.9 L733.2,376.5 L726.5,377.0 L719.8,377.4 L713.1,377.8 L706.4,378.0 L699.8,378.2 L693.4,378.2 L687.1,378.2 L680.9,378.1 L675.0,377.8 L669.2,377.5 L663.8,377.1 L658.5,376.6 L653.6,376.1 L649.0,375.4 L644.7,374.7 L640.8,373.8 L637.2,372.9 L634.1,372.0 L631.3,370.9 L628.9,369.8 L626.9,368.7 L625.4,367.5 L624.3,366.2 L623.7,364.9 L623.4,363.6 M826.7,365.2 L826.5,366.6 L825.8,368.1 L824.8,369.5 L823.3,371.0 L821.4,372.5 L819.1,374.0 L816.5,375.5 L813.4,377.0 L810.0,378.4 L806.2,379.8 L802.0,381.2 L797.6,382.6 L792.8,383.9 L787.8,385.2 L782.4,386.4 L776.9,387.5 L771.1,388.6 L765.1,389.6 L759.0,390.5 L752.6,391.4 L746.2,392.2 L739.7,392.9 L733.1,393.5 L726.5,394.0 L719.9,394.4 L713.3,394.8 L706.7,395.0 L700.2,395.1 L693.8,395.2 L687.6,395.1 L681.5,394.9 L675.6,394.7 L669.9,394.3 L664.4,393.9 L659.2,393.4 L654.3,392.7 L649.7,392.0 L645.4,391.2 L641.5,390.3 L637.9,389.4 L634.7,388.4 L631.9,387.3 L629.5,386.1 L627.6,384.9 L626.0,383.6 L624.9,382.3 L624.3,380.9 L624.0,379.5 M822.0,378.5 L821.8,380.0 L821.2,381.5 L820.2,383.1 L818.8,384.6 L817.0,386.1 L814.9,387.7 L812.4,389.2 L809.5,390.7 L806.2,392.2 L802.6,393.7 L798.7,395.1 L794.5,396.5 L790.0,397.8 L785.2,399.1 L780.1,400.3 L774.8,401.5 L769.3,402.6 L763.6,403.6 L757.7,404.6 L751.7,405.4 L745.5,406.2 L739.2,406.9 L732.9,407.5 L726.5,408.0 L720.1,408.4 L713.7,408.7 L707.3,408.9 L701.0,409.1 L694.8,409.1 L688.7,409.0 L682.7,408.8 L677.0,408.5 L671.4,408.1 L666.0,407.6 L660.9,407.1 L656.1,406.4 L651.5,405.6 L647.3,404.8 L643.4,403.9 L639.9,402.9 L636.8,401.8 L634.0,400.6 L631.7,399.4 L629.7,398.2 L628.2,396.8 L627.1,395.5 L626.4,394.0 L626.2,392.6 M815.4,392.5 L815.2,394.0 L814.6,395.5 L813.7,397.1 L812.5,398.6 L810.8,400.2 L808.9,401.7 L806.5,403.3 L803.9,404.8 L800.9,406.3 L797.6,407.7 L794.0,409.2 L790.1,410.6 L785.9,411.9 L781.5,413.2 L776.8,414.4 L771.9,415.6 L766.7,416.7 L761.4,417.7 L755.9,418.6 L750.2,419.5 L744.4,420.2 L738.5,420.9 L732.5,421.5 L726.5,422.0 L720.4,422.4 L714.3,422.7 L708.3,422.9 L702.3,423.0 L696.3,423.0 L690.5,422.9 L684.8,422.6 L679.2,422.3 L673.8,421.9 L668.7,421.4 L663.7,420.8 L659.0,420.1 L654.6,419.3 L650.6,418.5 L646.8,417.5 L643.4,416.5 L640.3,415.4 L637.6,414.2 L635.3,413.0 L633.4,411.7 L631.9,410.3 L630.8,408.9 L630.2,407.5 L630.0,406.0 M808.7,406.1 L808.5,407.5 L808.0,409.1 L807.2,410.6 L806.1,412.1 L804.6,413.6 L802.8,415.2 L800.6,416.7 L798.2,418.2 L795.5,419.7 L792.5,421.1 L789.1,422.5 L785.6,423.9 L781.7,425.2 L777.6,426.5 L773.3,427.7 L768.7,428.8 L764.0,429.9 L759.0,430.8 L753.9,431.8 L748.6,432.6 L743.2,433.3 L737.7,434.0 L732.1,434.5 L726.5,435.0 L720.8,435.4 L715.1,435.6 L709.4,435.8 L703.8,435.9 L698.2,435.9 L692.7,435.7 L687.3,435.5 L682.1,435.2 L677.0,434.7 L672.1,434.2 L667.4,433.6 L663.0,432.9 L658.8,432.1 L654.9,431.2 L651.4,430.3 L648.1,429.2 L645.2,428.1 L642.6,427.0 L640.4,425.7 L638.6,424.4 L637.2,423.1 L636.2,421.7 L635.6,420.3 L635.4,418.8 M801.6,419.3 L801.4,420.8 L801.0,422.2 L800.2,423.7 L799.2,425.2 L797.8,426.6 L796.2,428.1 L794.2,429.6 L792.0,431.0 L789.5,432.4 L786.8,433.8 L783.8,435.2 L780.5,436.5 L777.0,437.7 L773.2,438.9 L769.3,440.1 L765.1,441.1 L760.8,442.2 L756.3,443.1 L751.6,444.0 L746.8,444.7 L741.8,445.4 L736.8,446.0 L731.7,446.6 L726.5,447.0 L721.3,447.3 L716.1,447.6 L710.8,447.7 L705.7,447.8 L700.5,447.7 L695.5,447.6 L690.5,447.3 L685.7,447.0 L681.1,446.6 L676.6,446.1 L672.3,445.4 L668.2,444.8 L664.4,444.0 L660.8,443.1 L657.5,442.2 L654.5,441.2 L651.8,440.1 L649.5,438.9 L647.5,437.7 L645.8,436.5 L644.5,435.2 L643.6,433.8 L643.0,432.5 L642.8,431.0 M793.4,432.7 L793.3,434.1 L792.9,435.4 L792.2,436.8 L791.3,438.1 L790.0,439.5 L788.6,440.8 L786.8,442.2 L784.8,443.5 L782.6,444.8 L780.1,446.1 L777.4,447.3 L774.4,448.5 L771.3,449.6 L767.9,450.7 L764.4,451.8 L760.7,452.8 L756.8,453.7 L752.8,454.5 L748.6,455.3 L744.4,456.0 L740.0,456.6 L735.6,457.2 L731.1,457.6 L726.5,458.0 L721.9,458.3 L717.3,458.5 L712.8,458.6 L708.2,458.6 L703.8,458.6 L699.4,458.4 L695.1,458.2 L690.9,457.8 L686.8,457.4 L682.9,456.9 L679.2,456.3 L675.7,455.7 L672.4,455.0 L669.3,454.1 L666.5,453.3 L663.9,452.3 L661.6,451.3 L659.5,450.2 L657.8,449.1 L656.4,448.0 L655.2,446.8 L654.4,445.5 L654.0,444.2 L653.8,442.9 M783.4,447.6 L783.3,448.8 L782.9,449.9 L782.3,451.1 L781.5,452.3 L780.4,453.4 L779.1,454.6 L777.6,455.7 L775.8,456.8 L773.9,457.9 L771.7,459.0 L769.3,460.1 L766.8,461.1 L764.1,462.0 L761.2,463.0 L758.2,463.8 L755.0,464.7 L751.7,465.4 L748.3,466.1 L744.8,466.8 L741.3,467.4 L737.6,467.9 L734.0,468.3 L730.2,468.7 L726.5,469.0 L722.8,469.2 L719.0,469.4 L715.3,469.4 L711.7,469.4 L708.1,469.4 L704.6,469.2 L701.2,469.0 L697.9,468.7 L694.7,468.3 L691.7,467.9 L688.8,467.3 L686.0,466.7 L683.4,466.1 L681.1,465.4 L678.9,464.6 L676.9,463.8 L675.1,462.9 L673.6,462.0 L672.2,461.0 L671.2,460.0 L670.3,459.0 L669.7,457.9 L669.3,456.8 L669.2,455.6 M773.4,461.8 L773.3,462.7 L773.0,463.7 L772.5,464.6 L771.8,465.6 L770.8,466.5 L769.7,467.4 L768.4,468.4 L766.9,469.3 L765.2,470.2 L763.4,471.1 L761.4,471.9 L759.2,472.7 L757.0,473.5 L754.5,474.2 L752.0,474.9 L749.4,475.6 L746.7,476.2 L743.9,476.8 L741.1,477.3 L738.2,477.7 L735.3,478.1 L732.4,478.5 L729.4,478.8 L726.5,479.0 L723.6,479.2 L720.7,479.3 L717.9,479.3 L715.1,479.3 L712.3,479.2 L709.7,479.1 L707.1,478.8 L704.7,478.6 L702.3,478.3 L700.1,477.9 L697.9,477.4 L695.9,476.9 L694.1,476.4 L692.4,475.8 L690.8,475.1 L689.4,474.5 L688.1,473.7 L687.0,473.0 L686.1,472.2 L685.3,471.3 L684.7,470.5 L684.3,469.6 L684.0,468.7 L683.9,467.7 M761.3,476.2 L761.2,476.8 L761.0,477.5 L760.6,478.2 L760.0,478.8 L759.3,479.5 L758.4,480.1 L757.4,480.8 L756.2,481.4 L754.9,482.0 L753.5,482.6 L752.0,483.2 L750.3,483.8 L748.6,484.3 L746.8,484.8 L744.9,485.3 L742.9,485.7 L740.9,486.1 L738.9,486.5 L736.9,486.9 L734.8,487.2 L732.7,487.4 L730.6,487.7 L728.5,487.9 L726.5,488.0 L724.5,488.1 L722.5,488.2 L720.6,488.2 L718.7,488.2 L716.9,488.1 L715.2,488.0 L713.6,487.8 L712.0,487.6 L710.5,487.4 L709.1,487.1 L707.8,486.8 L706.5,486.4 L705.4,486.1 L704.4,485.6 L703.4,485.2 L702.6,484.7 L701.8,484.2 L701.2,483.6 L700.6,483.1 L700.2,482.5 L699.8,481.9 L699.6,481.3 L699.4,480.6 L699.4,480.0 M743.2,490.4 L743.1,490.7 L743.0,491.0 L742.8,491.3 L742.5,491.6 L742.2,492.0 L741.8,492.3 L741.3,492.6 L740.7,492.9 L740.1,493.2 L739.4,493.4 L738.7,493.7 L737.9,494.0 L737.1,494.2 L736.2,494.5 L735.3,494.7 L734.4,494.9 L733.4,495.1 L732.4,495.3 L731.4,495.5 L730.4,495.6 L729.4,495.7 L728.5,495.8 L727.5,495.9 L726.5,496.0 L725.5,496.0 L724.6,496.1 L723.7,496.1 L722.8,496.1 L722.0,496.0 L721.1,496.0 L720.4,495.9 L719.6,495.8 L718.9,495.7 L718.3,495.6 L717.6,495.4 L717.1,495.3 L716.5,495.1 L716.0,494.9 L715.6,494.6 L715.2,494.4 L714.9,494.2 L714.6,493.9 L714.3,493.6 L714.1,493.4 L713.9,493.1 L713.8,492.8 L713.7,492.5 L713.7,492.2" fill="none" stroke="#c4c4c4" stroke-width="0.9"/>
<polyline points="727,166 738,336 806,336" fill="none" stroke="#000" stroke-width="1.6"/>
<rect x="739" y="321" width="66" height="13" fill="#fff" fill-opacity="0.85"/>
<text x="739" y="333.2" font-family="Liberation Sans" font-size="11.2" fill="#333">(0;0;3597.13)</text>
<rect x="739" y="455" width="53" height="13" fill="#fff" fill-opacity="0.85"/>
<text x="739.5" y="466.5" font-family="Liberation Sans" font-size="11.2" fill="#333">(0;0;18.62)</text>
<line x1="607.2" y1="492.1" x2="884.6" y2="425.2" stroke="#00ee00" stroke-width="2"/>
<line x1="642.4" y1="422.7" x2="838" y2="516.5" stroke="#ff0000" stroke-width="2"/>
<line x1="726.3" y1="108" x2="726.3" y2="508.5" stroke="#0000ff" stroke-width="2"/>
<path d="M719.5 144 Q726 149 732.5 144" fill="none" stroke="#0000ff" stroke-width="1.6"/>
<polyline points="727,463.5 739,469 792.5,469" fill="none" stroke="#000" stroke-width="1.6"/>
<path d="M851 426 Q857 431 854 437" fill="none" stroke="#00ee00" stroke-width="1.6"/>
<path d="M816 499 Q808 502 811 510" fill="none" stroke="#ff0000" stroke-width="1.6"/>
<text x="709" y="105.5" font-family="Liberation Sans" font-size="11.9" fill="#3030ff">N (kN)</text>
<text transform="translate(885,426) rotate(-14)" font-family="Liberation Sans" font-size="11.6" fill="#3ae03a" letter-spacing="0.2">Mxx (kN·m)</text>
<text transform="translate(836,521) rotate(26)" font-family="Liberation Sans" font-size="11.6" fill="#ff4242" letter-spacing="0.2">Myy (kN·m)</text>
<line x1="566.4" y1="530" x2="566.4" y2="543" stroke="#5a5aff" stroke-width="1.5"/>
<line x1="566.4" y1="542.8" x2="576.4" y2="540.2" stroke="#22dd22" stroke-width="1.2"/>
<line x1="566.4" y1="542.8" x2="573.6" y2="547.2" stroke="#ff3030" stroke-width="1.2"/>
<text x="562.6" y="527.8" font-family="Liberation Sans" font-size="6.5" font-weight="bold" fill="#6060ff">Z</text>
<text x="579" y="542.5" font-family="Liberation Sans" font-size="6.5" font-weight="bold" fill="#66ee66">Y</text>
<text x="575" y="551.5" font-family="Liberation Sans" font-size="6.5" font-weight="bold" fill="#ff5050">X</text>
</svg>
</body></html>
